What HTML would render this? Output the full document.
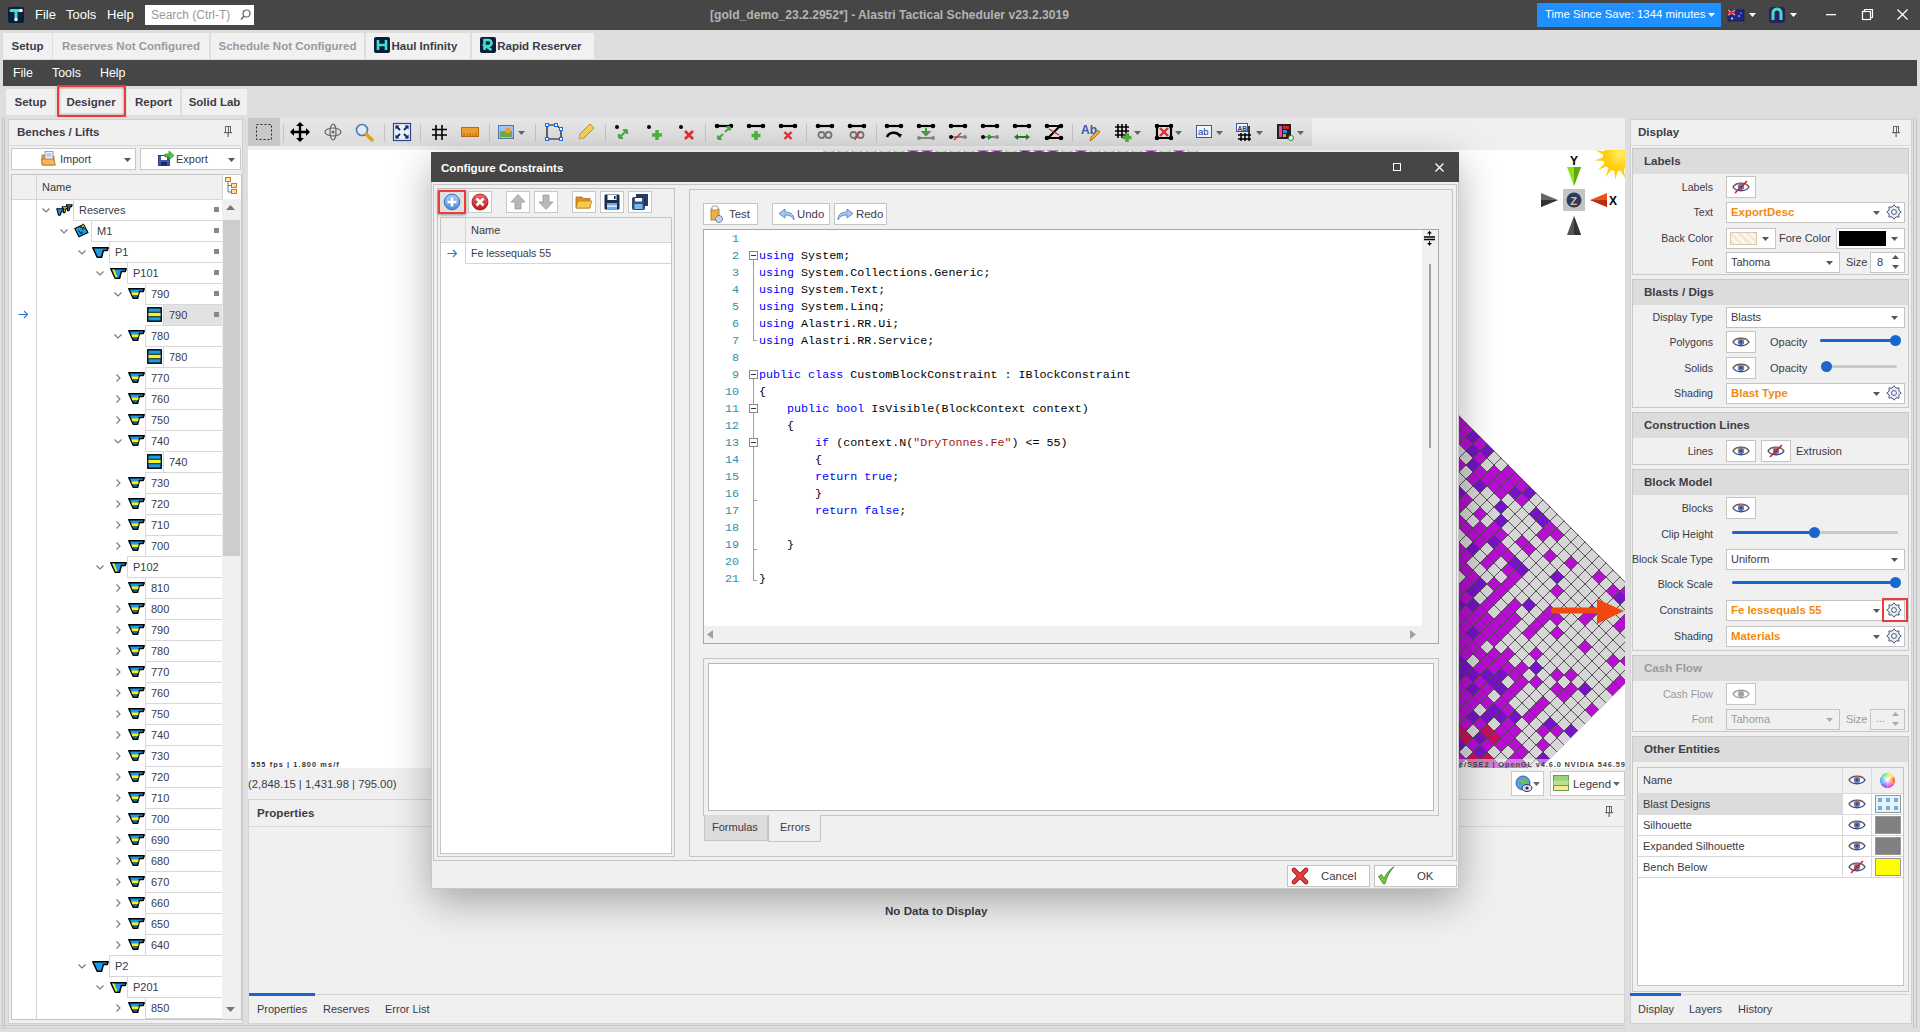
<!DOCTYPE html><html><head><meta charset="utf-8"><style>
*{box-sizing:border-box;margin:0;padding:0}
html,body{width:1920px;height:1032px;overflow:hidden;background:#dedede;font-family:"Liberation Sans",sans-serif;font-size:11px;color:#3a3a48}
.ab{position:absolute}
.t{position:absolute;white-space:pre;line-height:13px}
.b{font-weight:bold}
.dark{background:#464646}
.tab{position:absolute;background:#f1f1f1;font-weight:bold;font-size:11.5px;color:#3c3c48;text-align:center;white-space:pre;line-height:26px}
.mono{font-family:"Liberation Mono",monospace}
svg{position:absolute;overflow:visible}
</style></head><body><div class="ab" style="left:0px;top:0px;width:1920px;height:30px;background:#464646"></div><svg style="left:8px;top:7px;" width="16" height="16" viewBox="0 0 16 16"><rect x="0" y="0" width="16" height="16" rx="2" fill="#0b1d3a"/><path d="M3 3.5h10M8 3.5v9" stroke="#3fe0d0" stroke-width="3" stroke-linecap="round"/><circle cx="13" cy="3.5" r="1.7" fill="#fff"/><circle cx="8" cy="12.5" r="1.7" fill="#fff"/></svg><div class="t" style="left:35px;top:8px;font-size:13px;color:#fff;">File</div><div class="t" style="left:66px;top:8px;font-size:13px;color:#fff;">Tools</div><div class="t" style="left:107px;top:8px;font-size:13px;color:#fff;">Help</div><div class="ab" style="left:145px;top:5px;width:109px;height:20px;background:#fff"></div><div class="t" style="left:151px;top:9px;font-size:12px;color:#9a9a9a;">Search (Ctrl-T)</div><svg style="left:240px;top:9px;" width="11" height="12" viewBox="0 0 11 12"><circle cx="6.5" cy="4.5" r="3.5" fill="none" stroke="#666" stroke-width="1.2"/><path d="M4 7L1 10.5" stroke="#666" stroke-width="1.4"/></svg><div class="t" style="left:710px;top:9px;font-size:12.1px;color:#b4b4b4;font-weight:bold;">[gold_demo_23.2.2952*] - Alastri Tactical Scheduler v23.2.3019</div><div class="ab" style="left:1537px;top:3px;width:184px;height:24px;background:#1e90ff"></div><div class="t" style="left:1545px;top:8px;font-size:11.4px;color:#fff;">Time Since Save: 1344 minutes</div><svg style="left:1708px;top:13px;" width="8" height="5" viewBox="0 0 8 5"><path d="M0 0h7L3.5 4z" fill="#fff"/></svg><svg style="left:1728px;top:10px;" width="16" height="11" viewBox="0 0 16 11"><rect width="16" height="11" fill="#1a2a8a" stroke="#111" stroke-width="0.6"/><path d="M0 0L7 5M7 0L0 5" stroke="#fff" stroke-width="1.2"/><path d="M0 0L7 5M7 0L0 5" stroke="#d22" stroke-width="0.6"/><rect x="3" y="0" width="1.2" height="5" fill="#d22"/><rect x="0" y="2" width="7" height="1.2" fill="#d22"/><circle cx="11" cy="6" r="0.8" fill="#fff"/><circle cx="13" cy="3" r="0.6" fill="#fff"/><circle cx="4" cy="8.5" r="0.9" fill="#fff"/></svg><svg style="left:1749px;top:13px;" width="8" height="5" viewBox="0 0 8 5"><path d="M0 0h7L3.5 4z" fill="#fff"/></svg><svg style="left:1769px;top:7px;" width="16" height="16" viewBox="0 0 16 16"><rect width="16" height="16" rx="3" fill="#2a2060"/><path d="M4 13V6a4 4 0 0 1 8 0v7" stroke="#40e0c0" stroke-width="3" fill="none"/></svg><svg style="left:1790px;top:13px;" width="8" height="5" viewBox="0 0 8 5"><path d="M0 0h7L3.5 4z" fill="#fff"/></svg><svg style="left:1826px;top:14px;" width="11" height="2" viewBox="0 0 11 2"><rect width="10" height="1.3" fill="#fff"/></svg><svg style="left:1862px;top:9px;" width="11" height="11" viewBox="0 0 11 11"><path d="M2.5 2.5V0.5h8v8h-2" fill="none" stroke="#fff" stroke-width="1.2"/><rect x="0.5" y="2.5" width="8" height="8" fill="none" stroke="#fff" stroke-width="1.2"/></svg><svg style="left:1897px;top:9px;" width="11" height="11" viewBox="0 0 11 11"><path d="M0.5 0.5l10 10M10.5 0.5l-10 10" stroke="#fff" stroke-width="1.3"/></svg><div class="ab" style="left:0px;top:30px;width:1920px;height:30px;background:#dedede"></div><div class="tab" style="left:3px;top:33px;width:49px;height:26px;line-height:26px;color:#3c3c48">Setup</div><div class="tab" style="left:53px;top:33px;width:156px;height:26px;line-height:26px;color:#9a9a9e">Reserves Not Configured</div><div class="tab" style="left:211px;top:33px;width:153px;height:26px;line-height:26px;color:#9a9a9e">Schedule Not Configured</div><div class="tab" style="left:366px;top:33px;width:104px;height:26px;line-height:26px;color:#3c3c48">    Haul Infinity</div><div class="tab" style="left:472px;top:33px;width:122px;height:26px;line-height:26px;color:#3c3c48">    Rapid Reserver</div><svg style="left:374px;top:37px;" width="16" height="16" viewBox="0 0 16 16"><rect width="16" height="16" rx="2" fill="#0b1d3a"/><path d="M4 3v10M12 3v10M4 8h8" stroke="#3fe0d0" stroke-width="2.6"/></svg><svg style="left:480px;top:37px;" width="16" height="16" viewBox="0 0 16 16"><rect width="16" height="16" rx="2" fill="#0b1d3a"/><path d="M4.5 13V3h4a3 3 0 0 1 0 6h-3l6 4" stroke="#3fe0d0" stroke-width="2.6" fill="none"/></svg><div class="ab" style="left:3px;top:60px;width:1914px;height:26px;background:#464646"></div><div class="t" style="left:13px;top:67px;font-size:12.4px;color:#fff;">File</div><div class="t" style="left:52px;top:67px;font-size:12.4px;color:#fff;">Tools</div><div class="t" style="left:100px;top:67px;font-size:12.4px;color:#fff;">Help</div><div class="ab" style="left:0px;top:86px;width:1920px;height:32px;background:#dedede"></div><div class="tab" style="left:6px;top:89px;width:49px;height:26px;line-height:26px;color:#3c3c48">Setup</div><div class="tab" style="left:57px;top:89px;width:68px;height:26px;line-height:26px;color:#3c3c48">Designer</div><div class="tab" style="left:127px;top:89px;width:53px;height:26px;line-height:26px;color:#3c3c48">Report</div><div class="tab" style="left:182px;top:89px;width:65px;height:26px;line-height:26px;color:#3c3c48">Solid Lab</div><div class="ab" style="left:57px;top:85px;width:69px;height:32px;border:2.5px solid #ee3a3a;box-shadow:inset 0 0 3px rgba(0,0,0,0.45)"></div><div class="ab" style="left:2px;top:118px;width:1px;height:910px;background:#c4c4c4"></div><div class="ab" style="left:4px;top:118px;width:1px;height:910px;background:#c4c4c4"></div><div class="ab" style="left:8px;top:119px;width:235px;height:905px;background:#f0f0f0;border:1px solid #d0d0d0"></div><div class="t" style="left:17px;top:125px;font-size:11.6px;color:#3c3c48;font-weight:bold;">Benches / Lifts</div><svg style="left:224px;top:126px;" width="8" height="11" viewBox="0 0 8 11"><rect x="1.5" y="0.5" width="5" height="6" fill="none" stroke="#666"/><rect x="0" y="6" width="8" height="1.2" fill="#666"/><rect x="3.5" y="7" width="1.2" height="4" fill="#666"/><rect x="4" y="1" width="1" height="5" fill="#666"/></svg><div class="ab" style="left:9px;top:145px;width:232px;height:1px;background:#d8d8d8"></div><div class="ab" style="left:11px;top:148px;width:125px;height:22px;background:#fff;border:1px solid #c8c8c8"></div><div class="ab" style="left:140px;top:148px;width:101px;height:22px;background:#fff;border:1px solid #c8c8c8"></div><svg style="left:41px;top:151px;" width="16" height="15" viewBox="0 0 16 15"><path d="M1 4h5l1 1h6v9H1z" fill="#e8a040" stroke="#b86a18" stroke-width="0.8"/><rect x="4" y="0.5" width="8" height="9" fill="#eef2ff" stroke="#7a8ac0" stroke-width="0.8"/><path d="M5.5 3h5M5.5 5h5" stroke="#7a8ac0" stroke-width="0.8"/><path d="M0.5 8h12l2 6H1.5z" fill="#f4b860" stroke="#b86a18" stroke-width="0.8"/></svg><div class="t" style="left:60px;top:153px;font-size:11px;color:#3a3a48;">Import</div><svg style="left:124px;top:158px;" width="8" height="4" viewBox="0 0 8 4"><path d="M0 0h7L3.5 4z" fill="#555"/></svg><svg style="left:158px;top:151px;" width="16" height="15" viewBox="0 0 16 15"><rect x="0.5" y="4.5" width="11" height="10" fill="#3a5ca8" stroke="#1a2a60" stroke-width="0.8"/><rect x="3" y="5" width="6" height="4" fill="#fff"/><rect x="3" y="11" width="6" height="3.5" fill="#1a2a60"/><path d="M7 6V3h4V0l5 4.5-5 4.5V6z" fill="#5ac040" stroke="#2a8020" stroke-width="0.7"/></svg><div class="t" style="left:176px;top:153px;font-size:11px;color:#3a3a48;">Export</div><svg style="left:228px;top:158px;" width="8" height="4" viewBox="0 0 8 4"><path d="M0 0h7L3.5 4z" fill="#555"/></svg><div class="ab" style="left:11px;top:174px;width:231px;height:846px;background:#fff;border:1px solid #c4c4c4"></div><div class="ab" style="left:12px;top:175px;width:210px;height:24px;background:#f0f0f0"></div><div class="ab" style="left:36px;top:175px;width:1px;height:844px;background:#d4d4d4"></div><div class="ab" style="left:12px;top:199px;width:210px;height:1px;background:#d4d4d4"></div><div class="t" style="left:42px;top:181px;font-size:11px;color:#3a3a48;">Name</div><div class="ab" style="left:222px;top:175px;width:19px;height:24px;background:#fff;border-left:1px solid #d4d4d4"></div><svg style="left:225px;top:177px;" width="15" height="18" viewBox="0 0 15 18"><rect x="0.5" y="0.5" width="5" height="4" fill="#fde0b0" stroke="#d07a10"/><rect x="6.5" y="6.5" width="5" height="4" fill="#fde0b0" stroke="#d07a10"/><rect x="6.5" y="12.5" width="5" height="4" fill="#fde0b0" stroke="#d07a10"/><path d="M3 5v10h3.5M3 8.5h3.5" stroke="#555" fill="none" stroke-width="0.8"/></svg><div class="ab" style="left:222px;top:199px;width:19px;height:820px;background:#f0f0f0"></div><div class="ab" style="left:223px;top:220px;width:17px;height:336px;background:#cdcdcd"></div><svg style="left:226px;top:205px;" width="9" height="5" viewBox="0 0 9 5"><path d="M0 5L4.5 0L9 5z" fill="#777"/></svg><svg style="left:226px;top:1007px;" width="9" height="5" viewBox="0 0 9 5"><path d="M0 0h9L4.5 5z" fill="#777"/></svg><div class="ab" style="left:73px;top:199px;width:149px;height:22px;background:#fff;border:1px solid #d8d8d8;border-right:none"></div><div class="t" style="left:79px;top:204px;font-size:11px;color:#3a3a48;">Reserves</div><div class="ab" style="left:214px;top:207px;width:5px;height:5px;background:#888"></div><svg style="left:42px;top:208px;" width="8" height="5" viewBox="0 0 8 5"><path d="M0.5 0.5L4 4L7.5 0.5" fill="none" stroke="#777" stroke-width="1.1"/></svg><svg style="left:56px;top:204px;" width="17" height="12" viewBox="0 0 17 12"><path d="M10.5 0.8H16.2L15.6 2.6H14.2L13 6.6H11.6Z" fill="#1a9ae8" stroke="#000" stroke-width="1.1" stroke-linejoin="round"/><path d="M6.2 2.8H12L11.4 4.6H10L8.8 8.6H7.4Z" fill="#f8e820" stroke="#000" stroke-width="1.1" stroke-linejoin="round"/><path d="M0.8 4.8H8L7.3 7H5.6L4.2 11.2H2.6Z" fill="#1a9ae8" stroke="#000" stroke-width="1.1" stroke-linejoin="round"/></svg><div class="ab" style="left:91px;top:220px;width:131px;height:22px;background:#fff;border:1px solid #d8d8d8;border-right:none"></div><div class="t" style="left:97px;top:225px;font-size:11px;color:#3a3a48;">M1</div><div class="ab" style="left:214px;top:228px;width:5px;height:5px;background:#888"></div><svg style="left:60px;top:229px;" width="8" height="5" viewBox="0 0 8 5"><path d="M0.5 0.5L4 4L7.5 0.5" fill="none" stroke="#777" stroke-width="1.1"/></svg><svg style="left:74px;top:223px;" width="15" height="15" viewBox="0 0 15 15"><path d="M0.8 5.5L9.5 1.5L14 9.5L5 13.8Z" fill="#1a9ae8" stroke="#000" stroke-width="1.1" stroke-linejoin="round"/><path d="M9 0.8L11.5 4.5L8.5 6.5L10 3.8L6.5 4.8Z" fill="#f8e820" stroke="#000" stroke-width="0.7"/><path d="M4.5 7.5L7.5 11L8 8.5" fill="none" stroke="#000" stroke-width="0.9"/></svg><div class="ab" style="left:109px;top:241px;width:113px;height:22px;background:#fff;border:1px solid #d8d8d8;border-right:none"></div><div class="t" style="left:115px;top:246px;font-size:11px;color:#3a3a48;">P1</div><div class="ab" style="left:214px;top:249px;width:5px;height:5px;background:#888"></div><svg style="left:78px;top:250px;" width="8" height="5" viewBox="0 0 8 5"><path d="M0.5 0.5L4 4L7.5 0.5" fill="none" stroke="#777" stroke-width="1.1"/></svg><svg style="left:92px;top:247px;" width="17" height="11" viewBox="0 0 17 11"><path d="M0.8 0.8H16.2L15.2 3.4H11.4L9.6 10.2H5.2Z" fill="#1a9ae8" stroke="#000" stroke-width="1.5" stroke-linejoin="round"/></svg><div class="ab" style="left:127px;top:262px;width:95px;height:22px;background:#fff;border:1px solid #d8d8d8;border-right:none"></div><div class="t" style="left:133px;top:267px;font-size:11px;color:#3a3a48;">P101</div><div class="ab" style="left:214px;top:270px;width:5px;height:5px;background:#888"></div><svg style="left:96px;top:271px;" width="8" height="5" viewBox="0 0 8 5"><path d="M0.5 0.5L4 4L7.5 0.5" fill="none" stroke="#777" stroke-width="1.1"/></svg><svg style="left:110px;top:268px;" width="17" height="11" viewBox="0 0 17 11"><path d="M0.8 0.8H16.2L15.2 3.4H11.4L9.6 10.2H5.2Z" fill="#1a9ae8" stroke="#000" stroke-width="1.5" stroke-linejoin="round"/><path d="M2.2 1.5H4.4L7.4 9.5H5.6Z" fill="#f8e820"/></svg><div class="ab" style="left:145px;top:283px;width:77px;height:22px;background:#fff;border:1px solid #d8d8d8;border-right:none"></div><div class="t" style="left:151px;top:288px;font-size:11px;color:#3a3a48;">790</div><div class="ab" style="left:214px;top:291px;width:5px;height:5px;background:#888"></div><svg style="left:114px;top:292px;" width="8" height="5" viewBox="0 0 8 5"><path d="M0.5 0.5L4 4L7.5 0.5" fill="none" stroke="#777" stroke-width="1.1"/></svg><svg style="left:128px;top:288px;" width="17" height="11" viewBox="0 0 17 11"><path d="M0.8 0.8H16.2L15.2 3.4H11.4L9.6 10.2H5.2Z" fill="#1a9ae8" stroke="#000" stroke-width="1.5" stroke-linejoin="round"/><path d="M3.3 4.6H10.8L10.1 7.6H4.4Z" fill="#f8f020"/><path d="M4.4 7.9H10" stroke="#000" stroke-width="0.7"/></svg><div class="ab" style="left:163px;top:304px;width:59px;height:22px;background:#e2e2e2;border:1px solid #d8d8d8;border-right:none"></div><div class="t" style="left:169px;top:309px;font-size:11px;color:#3a3a48;">790</div><div class="ab" style="left:214px;top:312px;width:5px;height:5px;background:#888"></div><svg style="left:147px;top:307px;" width="15" height="15" viewBox="0 0 15 15"><rect x="0.8" y="0.8" width="13.4" height="13.4" fill="#1a9ae8" stroke="#000" stroke-width="1.4"/><path d="M1.5 5.3h12M1.5 9.7h12" stroke="#000" stroke-width="1"/><rect x="1.5" y="5.8" width="12" height="3.4" fill="#f8f020"/></svg><div class="ab" style="left:145px;top:325px;width:77px;height:22px;background:#fff;border:1px solid #d8d8d8;border-right:none"></div><div class="t" style="left:151px;top:330px;font-size:11px;color:#3a3a48;">780</div><svg style="left:114px;top:334px;" width="8" height="5" viewBox="0 0 8 5"><path d="M0.5 0.5L4 4L7.5 0.5" fill="none" stroke="#777" stroke-width="1.1"/></svg><svg style="left:128px;top:330px;" width="17" height="11" viewBox="0 0 17 11"><path d="M0.8 0.8H16.2L15.2 3.4H11.4L9.6 10.2H5.2Z" fill="#1a9ae8" stroke="#000" stroke-width="1.5" stroke-linejoin="round"/><path d="M3.3 4.6H10.8L10.1 7.6H4.4Z" fill="#f8f020"/><path d="M4.4 7.9H10" stroke="#000" stroke-width="0.7"/></svg><div class="ab" style="left:163px;top:346px;width:59px;height:22px;background:#fff;border:1px solid #d8d8d8;border-right:none"></div><div class="t" style="left:169px;top:351px;font-size:11px;color:#3a3a48;">780</div><svg style="left:147px;top:349px;" width="15" height="15" viewBox="0 0 15 15"><rect x="0.8" y="0.8" width="13.4" height="13.4" fill="#1a9ae8" stroke="#000" stroke-width="1.4"/><path d="M1.5 5.3h12M1.5 9.7h12" stroke="#000" stroke-width="1"/><rect x="1.5" y="5.8" width="12" height="3.4" fill="#f8f020"/></svg><div class="ab" style="left:145px;top:367px;width:77px;height:22px;background:#fff;border:1px solid #d8d8d8;border-right:none"></div><div class="t" style="left:151px;top:372px;font-size:11px;color:#3a3a48;">770</div><svg style="left:116px;top:374px;" width="5" height="8" viewBox="0 0 5 8"><path d="M0.5 0.5L4 4L0.5 7.5" fill="none" stroke="#777" stroke-width="1.1"/></svg><svg style="left:128px;top:372px;" width="17" height="11" viewBox="0 0 17 11"><path d="M0.8 0.8H16.2L15.2 3.4H11.4L9.6 10.2H5.2Z" fill="#1a9ae8" stroke="#000" stroke-width="1.5" stroke-linejoin="round"/><path d="M3.3 4.6H10.8L10.1 7.6H4.4Z" fill="#f8f020"/><path d="M4.4 7.9H10" stroke="#000" stroke-width="0.7"/></svg><div class="ab" style="left:145px;top:388px;width:77px;height:22px;background:#fff;border:1px solid #d8d8d8;border-right:none"></div><div class="t" style="left:151px;top:393px;font-size:11px;color:#3a3a48;">760</div><svg style="left:116px;top:395px;" width="5" height="8" viewBox="0 0 5 8"><path d="M0.5 0.5L4 4L0.5 7.5" fill="none" stroke="#777" stroke-width="1.1"/></svg><svg style="left:128px;top:393px;" width="17" height="11" viewBox="0 0 17 11"><path d="M0.8 0.8H16.2L15.2 3.4H11.4L9.6 10.2H5.2Z" fill="#1a9ae8" stroke="#000" stroke-width="1.5" stroke-linejoin="round"/><path d="M3.3 4.6H10.8L10.1 7.6H4.4Z" fill="#f8f020"/><path d="M4.4 7.9H10" stroke="#000" stroke-width="0.7"/></svg><div class="ab" style="left:145px;top:409px;width:77px;height:22px;background:#fff;border:1px solid #d8d8d8;border-right:none"></div><div class="t" style="left:151px;top:414px;font-size:11px;color:#3a3a48;">750</div><svg style="left:116px;top:416px;" width="5" height="8" viewBox="0 0 5 8"><path d="M0.5 0.5L4 4L0.5 7.5" fill="none" stroke="#777" stroke-width="1.1"/></svg><svg style="left:128px;top:414px;" width="17" height="11" viewBox="0 0 17 11"><path d="M0.8 0.8H16.2L15.2 3.4H11.4L9.6 10.2H5.2Z" fill="#1a9ae8" stroke="#000" stroke-width="1.5" stroke-linejoin="round"/><path d="M3.3 4.6H10.8L10.1 7.6H4.4Z" fill="#f8f020"/><path d="M4.4 7.9H10" stroke="#000" stroke-width="0.7"/></svg><div class="ab" style="left:145px;top:430px;width:77px;height:22px;background:#fff;border:1px solid #d8d8d8;border-right:none"></div><div class="t" style="left:151px;top:435px;font-size:11px;color:#3a3a48;">740</div><svg style="left:114px;top:439px;" width="8" height="5" viewBox="0 0 8 5"><path d="M0.5 0.5L4 4L7.5 0.5" fill="none" stroke="#777" stroke-width="1.1"/></svg><svg style="left:128px;top:435px;" width="17" height="11" viewBox="0 0 17 11"><path d="M0.8 0.8H16.2L15.2 3.4H11.4L9.6 10.2H5.2Z" fill="#1a9ae8" stroke="#000" stroke-width="1.5" stroke-linejoin="round"/><path d="M3.3 4.6H10.8L10.1 7.6H4.4Z" fill="#f8f020"/><path d="M4.4 7.9H10" stroke="#000" stroke-width="0.7"/></svg><div class="ab" style="left:163px;top:451px;width:59px;height:22px;background:#fff;border:1px solid #d8d8d8;border-right:none"></div><div class="t" style="left:169px;top:456px;font-size:11px;color:#3a3a48;">740</div><svg style="left:147px;top:454px;" width="15" height="15" viewBox="0 0 15 15"><rect x="0.8" y="0.8" width="13.4" height="13.4" fill="#1a9ae8" stroke="#000" stroke-width="1.4"/><path d="M1.5 5.3h12M1.5 9.7h12" stroke="#000" stroke-width="1"/><rect x="1.5" y="5.8" width="12" height="3.4" fill="#f8f020"/></svg><div class="ab" style="left:145px;top:472px;width:77px;height:22px;background:#fff;border:1px solid #d8d8d8;border-right:none"></div><div class="t" style="left:151px;top:477px;font-size:11px;color:#3a3a48;">730</div><svg style="left:116px;top:479px;" width="5" height="8" viewBox="0 0 5 8"><path d="M0.5 0.5L4 4L0.5 7.5" fill="none" stroke="#777" stroke-width="1.1"/></svg><svg style="left:128px;top:477px;" width="17" height="11" viewBox="0 0 17 11"><path d="M0.8 0.8H16.2L15.2 3.4H11.4L9.6 10.2H5.2Z" fill="#1a9ae8" stroke="#000" stroke-width="1.5" stroke-linejoin="round"/><path d="M3.3 4.6H10.8L10.1 7.6H4.4Z" fill="#f8f020"/><path d="M4.4 7.9H10" stroke="#000" stroke-width="0.7"/></svg><div class="ab" style="left:145px;top:493px;width:77px;height:22px;background:#fff;border:1px solid #d8d8d8;border-right:none"></div><div class="t" style="left:151px;top:498px;font-size:11px;color:#3a3a48;">720</div><svg style="left:116px;top:500px;" width="5" height="8" viewBox="0 0 5 8"><path d="M0.5 0.5L4 4L0.5 7.5" fill="none" stroke="#777" stroke-width="1.1"/></svg><svg style="left:128px;top:498px;" width="17" height="11" viewBox="0 0 17 11"><path d="M0.8 0.8H16.2L15.2 3.4H11.4L9.6 10.2H5.2Z" fill="#1a9ae8" stroke="#000" stroke-width="1.5" stroke-linejoin="round"/><path d="M3.3 4.6H10.8L10.1 7.6H4.4Z" fill="#f8f020"/><path d="M4.4 7.9H10" stroke="#000" stroke-width="0.7"/></svg><div class="ab" style="left:145px;top:514px;width:77px;height:22px;background:#fff;border:1px solid #d8d8d8;border-right:none"></div><div class="t" style="left:151px;top:519px;font-size:11px;color:#3a3a48;">710</div><svg style="left:116px;top:521px;" width="5" height="8" viewBox="0 0 5 8"><path d="M0.5 0.5L4 4L0.5 7.5" fill="none" stroke="#777" stroke-width="1.1"/></svg><svg style="left:128px;top:519px;" width="17" height="11" viewBox="0 0 17 11"><path d="M0.8 0.8H16.2L15.2 3.4H11.4L9.6 10.2H5.2Z" fill="#1a9ae8" stroke="#000" stroke-width="1.5" stroke-linejoin="round"/><path d="M3.3 4.6H10.8L10.1 7.6H4.4Z" fill="#f8f020"/><path d="M4.4 7.9H10" stroke="#000" stroke-width="0.7"/></svg><div class="ab" style="left:145px;top:535px;width:77px;height:22px;background:#fff;border:1px solid #d8d8d8;border-right:none"></div><div class="t" style="left:151px;top:540px;font-size:11px;color:#3a3a48;">700</div><svg style="left:116px;top:542px;" width="5" height="8" viewBox="0 0 5 8"><path d="M0.5 0.5L4 4L0.5 7.5" fill="none" stroke="#777" stroke-width="1.1"/></svg><svg style="left:128px;top:540px;" width="17" height="11" viewBox="0 0 17 11"><path d="M0.8 0.8H16.2L15.2 3.4H11.4L9.6 10.2H5.2Z" fill="#1a9ae8" stroke="#000" stroke-width="1.5" stroke-linejoin="round"/><path d="M3.3 4.6H10.8L10.1 7.6H4.4Z" fill="#f8f020"/><path d="M4.4 7.9H10" stroke="#000" stroke-width="0.7"/></svg><div class="ab" style="left:127px;top:556px;width:95px;height:22px;background:#fff;border:1px solid #d8d8d8;border-right:none"></div><div class="t" style="left:133px;top:561px;font-size:11px;color:#3a3a48;">P102</div><svg style="left:96px;top:565px;" width="8" height="5" viewBox="0 0 8 5"><path d="M0.5 0.5L4 4L7.5 0.5" fill="none" stroke="#777" stroke-width="1.1"/></svg><svg style="left:110px;top:562px;" width="17" height="11" viewBox="0 0 17 11"><path d="M0.8 0.8H16.2L15.2 3.4H11.4L9.6 10.2H5.2Z" fill="#1a9ae8" stroke="#000" stroke-width="1.5" stroke-linejoin="round"/><path d="M2.2 1.5H4.4L7.4 9.5H5.6Z" fill="#f8e820"/></svg><div class="ab" style="left:145px;top:577px;width:77px;height:22px;background:#fff;border:1px solid #d8d8d8;border-right:none"></div><div class="t" style="left:151px;top:582px;font-size:11px;color:#3a3a48;">810</div><svg style="left:116px;top:584px;" width="5" height="8" viewBox="0 0 5 8"><path d="M0.5 0.5L4 4L0.5 7.5" fill="none" stroke="#777" stroke-width="1.1"/></svg><svg style="left:128px;top:582px;" width="17" height="11" viewBox="0 0 17 11"><path d="M0.8 0.8H16.2L15.2 3.4H11.4L9.6 10.2H5.2Z" fill="#1a9ae8" stroke="#000" stroke-width="1.5" stroke-linejoin="round"/><path d="M3.3 4.6H10.8L10.1 7.6H4.4Z" fill="#f8f020"/><path d="M4.4 7.9H10" stroke="#000" stroke-width="0.7"/></svg><div class="ab" style="left:145px;top:598px;width:77px;height:22px;background:#fff;border:1px solid #d8d8d8;border-right:none"></div><div class="t" style="left:151px;top:603px;font-size:11px;color:#3a3a48;">800</div><svg style="left:116px;top:605px;" width="5" height="8" viewBox="0 0 5 8"><path d="M0.5 0.5L4 4L0.5 7.5" fill="none" stroke="#777" stroke-width="1.1"/></svg><svg style="left:128px;top:603px;" width="17" height="11" viewBox="0 0 17 11"><path d="M0.8 0.8H16.2L15.2 3.4H11.4L9.6 10.2H5.2Z" fill="#1a9ae8" stroke="#000" stroke-width="1.5" stroke-linejoin="round"/><path d="M3.3 4.6H10.8L10.1 7.6H4.4Z" fill="#f8f020"/><path d="M4.4 7.9H10" stroke="#000" stroke-width="0.7"/></svg><div class="ab" style="left:145px;top:619px;width:77px;height:22px;background:#fff;border:1px solid #d8d8d8;border-right:none"></div><div class="t" style="left:151px;top:624px;font-size:11px;color:#3a3a48;">790</div><svg style="left:116px;top:626px;" width="5" height="8" viewBox="0 0 5 8"><path d="M0.5 0.5L4 4L0.5 7.5" fill="none" stroke="#777" stroke-width="1.1"/></svg><svg style="left:128px;top:624px;" width="17" height="11" viewBox="0 0 17 11"><path d="M0.8 0.8H16.2L15.2 3.4H11.4L9.6 10.2H5.2Z" fill="#1a9ae8" stroke="#000" stroke-width="1.5" stroke-linejoin="round"/><path d="M3.3 4.6H10.8L10.1 7.6H4.4Z" fill="#f8f020"/><path d="M4.4 7.9H10" stroke="#000" stroke-width="0.7"/></svg><div class="ab" style="left:145px;top:640px;width:77px;height:22px;background:#fff;border:1px solid #d8d8d8;border-right:none"></div><div class="t" style="left:151px;top:645px;font-size:11px;color:#3a3a48;">780</div><svg style="left:116px;top:647px;" width="5" height="8" viewBox="0 0 5 8"><path d="M0.5 0.5L4 4L0.5 7.5" fill="none" stroke="#777" stroke-width="1.1"/></svg><svg style="left:128px;top:645px;" width="17" height="11" viewBox="0 0 17 11"><path d="M0.8 0.8H16.2L15.2 3.4H11.4L9.6 10.2H5.2Z" fill="#1a9ae8" stroke="#000" stroke-width="1.5" stroke-linejoin="round"/><path d="M3.3 4.6H10.8L10.1 7.6H4.4Z" fill="#f8f020"/><path d="M4.4 7.9H10" stroke="#000" stroke-width="0.7"/></svg><div class="ab" style="left:145px;top:661px;width:77px;height:22px;background:#fff;border:1px solid #d8d8d8;border-right:none"></div><div class="t" style="left:151px;top:666px;font-size:11px;color:#3a3a48;">770</div><svg style="left:116px;top:668px;" width="5" height="8" viewBox="0 0 5 8"><path d="M0.5 0.5L4 4L0.5 7.5" fill="none" stroke="#777" stroke-width="1.1"/></svg><svg style="left:128px;top:666px;" width="17" height="11" viewBox="0 0 17 11"><path d="M0.8 0.8H16.2L15.2 3.4H11.4L9.6 10.2H5.2Z" fill="#1a9ae8" stroke="#000" stroke-width="1.5" stroke-linejoin="round"/><path d="M3.3 4.6H10.8L10.1 7.6H4.4Z" fill="#f8f020"/><path d="M4.4 7.9H10" stroke="#000" stroke-width="0.7"/></svg><div class="ab" style="left:145px;top:682px;width:77px;height:22px;background:#fff;border:1px solid #d8d8d8;border-right:none"></div><div class="t" style="left:151px;top:687px;font-size:11px;color:#3a3a48;">760</div><svg style="left:116px;top:689px;" width="5" height="8" viewBox="0 0 5 8"><path d="M0.5 0.5L4 4L0.5 7.5" fill="none" stroke="#777" stroke-width="1.1"/></svg><svg style="left:128px;top:687px;" width="17" height="11" viewBox="0 0 17 11"><path d="M0.8 0.8H16.2L15.2 3.4H11.4L9.6 10.2H5.2Z" fill="#1a9ae8" stroke="#000" stroke-width="1.5" stroke-linejoin="round"/><path d="M3.3 4.6H10.8L10.1 7.6H4.4Z" fill="#f8f020"/><path d="M4.4 7.9H10" stroke="#000" stroke-width="0.7"/></svg><div class="ab" style="left:145px;top:703px;width:77px;height:22px;background:#fff;border:1px solid #d8d8d8;border-right:none"></div><div class="t" style="left:151px;top:708px;font-size:11px;color:#3a3a48;">750</div><svg style="left:116px;top:710px;" width="5" height="8" viewBox="0 0 5 8"><path d="M0.5 0.5L4 4L0.5 7.5" fill="none" stroke="#777" stroke-width="1.1"/></svg><svg style="left:128px;top:708px;" width="17" height="11" viewBox="0 0 17 11"><path d="M0.8 0.8H16.2L15.2 3.4H11.4L9.6 10.2H5.2Z" fill="#1a9ae8" stroke="#000" stroke-width="1.5" stroke-linejoin="round"/><path d="M3.3 4.6H10.8L10.1 7.6H4.4Z" fill="#f8f020"/><path d="M4.4 7.9H10" stroke="#000" stroke-width="0.7"/></svg><div class="ab" style="left:145px;top:724px;width:77px;height:22px;background:#fff;border:1px solid #d8d8d8;border-right:none"></div><div class="t" style="left:151px;top:729px;font-size:11px;color:#3a3a48;">740</div><svg style="left:116px;top:731px;" width="5" height="8" viewBox="0 0 5 8"><path d="M0.5 0.5L4 4L0.5 7.5" fill="none" stroke="#777" stroke-width="1.1"/></svg><svg style="left:128px;top:729px;" width="17" height="11" viewBox="0 0 17 11"><path d="M0.8 0.8H16.2L15.2 3.4H11.4L9.6 10.2H5.2Z" fill="#1a9ae8" stroke="#000" stroke-width="1.5" stroke-linejoin="round"/><path d="M3.3 4.6H10.8L10.1 7.6H4.4Z" fill="#f8f020"/><path d="M4.4 7.9H10" stroke="#000" stroke-width="0.7"/></svg><div class="ab" style="left:145px;top:745px;width:77px;height:22px;background:#fff;border:1px solid #d8d8d8;border-right:none"></div><div class="t" style="left:151px;top:750px;font-size:11px;color:#3a3a48;">730</div><svg style="left:116px;top:752px;" width="5" height="8" viewBox="0 0 5 8"><path d="M0.5 0.5L4 4L0.5 7.5" fill="none" stroke="#777" stroke-width="1.1"/></svg><svg style="left:128px;top:750px;" width="17" height="11" viewBox="0 0 17 11"><path d="M0.8 0.8H16.2L15.2 3.4H11.4L9.6 10.2H5.2Z" fill="#1a9ae8" stroke="#000" stroke-width="1.5" stroke-linejoin="round"/><path d="M3.3 4.6H10.8L10.1 7.6H4.4Z" fill="#f8f020"/><path d="M4.4 7.9H10" stroke="#000" stroke-width="0.7"/></svg><div class="ab" style="left:145px;top:766px;width:77px;height:22px;background:#fff;border:1px solid #d8d8d8;border-right:none"></div><div class="t" style="left:151px;top:771px;font-size:11px;color:#3a3a48;">720</div><svg style="left:116px;top:773px;" width="5" height="8" viewBox="0 0 5 8"><path d="M0.5 0.5L4 4L0.5 7.5" fill="none" stroke="#777" stroke-width="1.1"/></svg><svg style="left:128px;top:771px;" width="17" height="11" viewBox="0 0 17 11"><path d="M0.8 0.8H16.2L15.2 3.4H11.4L9.6 10.2H5.2Z" fill="#1a9ae8" stroke="#000" stroke-width="1.5" stroke-linejoin="round"/><path d="M3.3 4.6H10.8L10.1 7.6H4.4Z" fill="#f8f020"/><path d="M4.4 7.9H10" stroke="#000" stroke-width="0.7"/></svg><div class="ab" style="left:145px;top:787px;width:77px;height:22px;background:#fff;border:1px solid #d8d8d8;border-right:none"></div><div class="t" style="left:151px;top:792px;font-size:11px;color:#3a3a48;">710</div><svg style="left:116px;top:794px;" width="5" height="8" viewBox="0 0 5 8"><path d="M0.5 0.5L4 4L0.5 7.5" fill="none" stroke="#777" stroke-width="1.1"/></svg><svg style="left:128px;top:792px;" width="17" height="11" viewBox="0 0 17 11"><path d="M0.8 0.8H16.2L15.2 3.4H11.4L9.6 10.2H5.2Z" fill="#1a9ae8" stroke="#000" stroke-width="1.5" stroke-linejoin="round"/><path d="M3.3 4.6H10.8L10.1 7.6H4.4Z" fill="#f8f020"/><path d="M4.4 7.9H10" stroke="#000" stroke-width="0.7"/></svg><div class="ab" style="left:145px;top:808px;width:77px;height:22px;background:#fff;border:1px solid #d8d8d8;border-right:none"></div><div class="t" style="left:151px;top:813px;font-size:11px;color:#3a3a48;">700</div><svg style="left:116px;top:815px;" width="5" height="8" viewBox="0 0 5 8"><path d="M0.5 0.5L4 4L0.5 7.5" fill="none" stroke="#777" stroke-width="1.1"/></svg><svg style="left:128px;top:813px;" width="17" height="11" viewBox="0 0 17 11"><path d="M0.8 0.8H16.2L15.2 3.4H11.4L9.6 10.2H5.2Z" fill="#1a9ae8" stroke="#000" stroke-width="1.5" stroke-linejoin="round"/><path d="M3.3 4.6H10.8L10.1 7.6H4.4Z" fill="#f8f020"/><path d="M4.4 7.9H10" stroke="#000" stroke-width="0.7"/></svg><div class="ab" style="left:145px;top:829px;width:77px;height:22px;background:#fff;border:1px solid #d8d8d8;border-right:none"></div><div class="t" style="left:151px;top:834px;font-size:11px;color:#3a3a48;">690</div><svg style="left:116px;top:836px;" width="5" height="8" viewBox="0 0 5 8"><path d="M0.5 0.5L4 4L0.5 7.5" fill="none" stroke="#777" stroke-width="1.1"/></svg><svg style="left:128px;top:834px;" width="17" height="11" viewBox="0 0 17 11"><path d="M0.8 0.8H16.2L15.2 3.4H11.4L9.6 10.2H5.2Z" fill="#1a9ae8" stroke="#000" stroke-width="1.5" stroke-linejoin="round"/><path d="M3.3 4.6H10.8L10.1 7.6H4.4Z" fill="#f8f020"/><path d="M4.4 7.9H10" stroke="#000" stroke-width="0.7"/></svg><div class="ab" style="left:145px;top:850px;width:77px;height:22px;background:#fff;border:1px solid #d8d8d8;border-right:none"></div><div class="t" style="left:151px;top:855px;font-size:11px;color:#3a3a48;">680</div><svg style="left:116px;top:857px;" width="5" height="8" viewBox="0 0 5 8"><path d="M0.5 0.5L4 4L0.5 7.5" fill="none" stroke="#777" stroke-width="1.1"/></svg><svg style="left:128px;top:855px;" width="17" height="11" viewBox="0 0 17 11"><path d="M0.8 0.8H16.2L15.2 3.4H11.4L9.6 10.2H5.2Z" fill="#1a9ae8" stroke="#000" stroke-width="1.5" stroke-linejoin="round"/><path d="M3.3 4.6H10.8L10.1 7.6H4.4Z" fill="#f8f020"/><path d="M4.4 7.9H10" stroke="#000" stroke-width="0.7"/></svg><div class="ab" style="left:145px;top:871px;width:77px;height:22px;background:#fff;border:1px solid #d8d8d8;border-right:none"></div><div class="t" style="left:151px;top:876px;font-size:11px;color:#3a3a48;">670</div><svg style="left:116px;top:878px;" width="5" height="8" viewBox="0 0 5 8"><path d="M0.5 0.5L4 4L0.5 7.5" fill="none" stroke="#777" stroke-width="1.1"/></svg><svg style="left:128px;top:876px;" width="17" height="11" viewBox="0 0 17 11"><path d="M0.8 0.8H16.2L15.2 3.4H11.4L9.6 10.2H5.2Z" fill="#1a9ae8" stroke="#000" stroke-width="1.5" stroke-linejoin="round"/><path d="M3.3 4.6H10.8L10.1 7.6H4.4Z" fill="#f8f020"/><path d="M4.4 7.9H10" stroke="#000" stroke-width="0.7"/></svg><div class="ab" style="left:145px;top:892px;width:77px;height:22px;background:#fff;border:1px solid #d8d8d8;border-right:none"></div><div class="t" style="left:151px;top:897px;font-size:11px;color:#3a3a48;">660</div><svg style="left:116px;top:899px;" width="5" height="8" viewBox="0 0 5 8"><path d="M0.5 0.5L4 4L0.5 7.5" fill="none" stroke="#777" stroke-width="1.1"/></svg><svg style="left:128px;top:897px;" width="17" height="11" viewBox="0 0 17 11"><path d="M0.8 0.8H16.2L15.2 3.4H11.4L9.6 10.2H5.2Z" fill="#1a9ae8" stroke="#000" stroke-width="1.5" stroke-linejoin="round"/><path d="M3.3 4.6H10.8L10.1 7.6H4.4Z" fill="#f8f020"/><path d="M4.4 7.9H10" stroke="#000" stroke-width="0.7"/></svg><div class="ab" style="left:145px;top:913px;width:77px;height:22px;background:#fff;border:1px solid #d8d8d8;border-right:none"></div><div class="t" style="left:151px;top:918px;font-size:11px;color:#3a3a48;">650</div><svg style="left:116px;top:920px;" width="5" height="8" viewBox="0 0 5 8"><path d="M0.5 0.5L4 4L0.5 7.5" fill="none" stroke="#777" stroke-width="1.1"/></svg><svg style="left:128px;top:918px;" width="17" height="11" viewBox="0 0 17 11"><path d="M0.8 0.8H16.2L15.2 3.4H11.4L9.6 10.2H5.2Z" fill="#1a9ae8" stroke="#000" stroke-width="1.5" stroke-linejoin="round"/><path d="M3.3 4.6H10.8L10.1 7.6H4.4Z" fill="#f8f020"/><path d="M4.4 7.9H10" stroke="#000" stroke-width="0.7"/></svg><div class="ab" style="left:145px;top:934px;width:77px;height:22px;background:#fff;border:1px solid #d8d8d8;border-right:none"></div><div class="t" style="left:151px;top:939px;font-size:11px;color:#3a3a48;">640</div><svg style="left:116px;top:941px;" width="5" height="8" viewBox="0 0 5 8"><path d="M0.5 0.5L4 4L0.5 7.5" fill="none" stroke="#777" stroke-width="1.1"/></svg><svg style="left:128px;top:939px;" width="17" height="11" viewBox="0 0 17 11"><path d="M0.8 0.8H16.2L15.2 3.4H11.4L9.6 10.2H5.2Z" fill="#1a9ae8" stroke="#000" stroke-width="1.5" stroke-linejoin="round"/><path d="M3.3 4.6H10.8L10.1 7.6H4.4Z" fill="#f8f020"/><path d="M4.4 7.9H10" stroke="#000" stroke-width="0.7"/></svg><div class="ab" style="left:109px;top:955px;width:113px;height:22px;background:#fff;border:1px solid #d8d8d8;border-right:none"></div><div class="t" style="left:115px;top:960px;font-size:11px;color:#3a3a48;">P2</div><svg style="left:78px;top:964px;" width="8" height="5" viewBox="0 0 8 5"><path d="M0.5 0.5L4 4L7.5 0.5" fill="none" stroke="#777" stroke-width="1.1"/></svg><svg style="left:92px;top:961px;" width="17" height="11" viewBox="0 0 17 11"><path d="M0.8 0.8H16.2L15.2 3.4H11.4L9.6 10.2H5.2Z" fill="#1a9ae8" stroke="#000" stroke-width="1.5" stroke-linejoin="round"/></svg><div class="ab" style="left:127px;top:976px;width:95px;height:22px;background:#fff;border:1px solid #d8d8d8;border-right:none"></div><div class="t" style="left:133px;top:981px;font-size:11px;color:#3a3a48;">P201</div><svg style="left:96px;top:985px;" width="8" height="5" viewBox="0 0 8 5"><path d="M0.5 0.5L4 4L7.5 0.5" fill="none" stroke="#777" stroke-width="1.1"/></svg><svg style="left:110px;top:982px;" width="17" height="11" viewBox="0 0 17 11"><path d="M0.8 0.8H16.2L15.2 3.4H11.4L9.6 10.2H5.2Z" fill="#1a9ae8" stroke="#000" stroke-width="1.5" stroke-linejoin="round"/><path d="M2.2 1.5H4.4L7.4 9.5H5.6Z" fill="#f8e820"/></svg><div class="ab" style="left:145px;top:997px;width:77px;height:22px;background:#fff;border:1px solid #d8d8d8;border-right:none"></div><div class="t" style="left:151px;top:1002px;font-size:11px;color:#3a3a48;">850</div><svg style="left:116px;top:1004px;" width="5" height="8" viewBox="0 0 5 8"><path d="M0.5 0.5L4 4L0.5 7.5" fill="none" stroke="#777" stroke-width="1.1"/></svg><svg style="left:128px;top:1002px;" width="17" height="11" viewBox="0 0 17 11"><path d="M0.8 0.8H16.2L15.2 3.4H11.4L9.6 10.2H5.2Z" fill="#1a9ae8" stroke="#000" stroke-width="1.5" stroke-linejoin="round"/><path d="M3.3 4.6H10.8L10.1 7.6H4.4Z" fill="#f8f020"/><path d="M4.4 7.9H10" stroke="#000" stroke-width="0.7"/></svg><svg style="left:18px;top:310px;" width="11" height="9" viewBox="0 0 11 9"><path d="M0.5 4.5h9M6 1l3.5 3.5L6 8" fill="none" stroke="#2a7ad8" stroke-width="1.1"/></svg><div class="ab" style="left:11px;top:1019px;width:231px;height:1px;background:#c4c4c4"></div><div class="ab" style="left:0px;top:1025px;width:1920px;height:1px;background:#c8c8c8"></div><div class="ab" style="left:0px;top:1028px;width:1920px;height:1px;background:#d0d0d0"></div><div class="ab" style="left:243px;top:118px;width:1385px;height:907px;background:#dedede"></div><div class="ab" style="left:248px;top:118px;width:1064px;height:28px;background:linear-gradient(#e6e6e6,#dcdcdc)"></div><div class="ab" style="left:1312px;top:118px;width:313px;height:28px;background:#efefef"></div><div class="ab" style="left:248px;top:146px;width:1377px;height:4px;background:#efefef"></div><div class="ab" style="left:248px;top:118px;width:32px;height:28px;background:#c8c8c8"></div><div class="ab" style="left:283px;top:124px;width:1px;height:18px;background:#c4c4c4"></div><div class="ab" style="left:384px;top:124px;width:1px;height:18px;background:#c4c4c4"></div><div class="ab" style="left:420px;top:124px;width:1px;height:18px;background:#c4c4c4"></div><div class="ab" style="left:489px;top:124px;width:1px;height:18px;background:#c4c4c4"></div><div class="ab" style="left:535px;top:124px;width:1px;height:18px;background:#c4c4c4"></div><div class="ab" style="left:605px;top:124px;width:1px;height:18px;background:#c4c4c4"></div><div class="ab" style="left:705px;top:124px;width:1px;height:18px;background:#c4c4c4"></div><div class="ab" style="left:806px;top:124px;width:1px;height:18px;background:#c4c4c4"></div><div class="ab" style="left:876px;top:124px;width:1px;height:18px;background:#c4c4c4"></div><div class="ab" style="left:1072px;top:124px;width:1px;height:18px;background:#c4c4c4"></div><div class="ab" style="left:248px;top:150px;width:1377px;height:618px;background:#fff"></div><svg style="left:254px;top:122px;" width="20" height="20" viewBox="0 0 20 20"><rect x="2.5" y="2.5" width="15" height="15" fill="none" stroke="#222" stroke-dasharray="2 2"/></svg><svg style="left:290px;top:122px;" width="20" height="20" viewBox="0 0 20 20"><path d="M10 1v18M1 10h18" stroke="#000" stroke-width="2.4"/><path d="M10 0l4 4H6zM10 20l4-4H6zM0 10l4-4v8zM20 10l-4-4v8z" fill="#000"/></svg><svg style="left:323px;top:122px;" width="20" height="20" viewBox="0 0 20 20"><ellipse cx="10" cy="10" rx="8" ry="4" fill="none" stroke="#666" stroke-width="1.2"/><ellipse cx="10" cy="10" rx="3" ry="8" fill="none" stroke="#666" stroke-width="1.2"/><circle cx="10" cy="10" r="1.5" fill="#666"/></svg><svg style="left:354px;top:122px;" width="20" height="20" viewBox="0 0 20 20"><circle cx="8" cy="8" r="5.5" fill="#dceefa" stroke="#5577aa" stroke-width="1.6"/><path d="M12 12l6 6" stroke="#e0a020" stroke-width="3.5" stroke-linecap="round"/></svg><svg style="left:392px;top:122px;" width="20" height="20" viewBox="0 0 20 20"><rect x="1.5" y="1.5" width="17" height="17" fill="#e8f0fa" stroke="#2a4a90" stroke-width="1.2"/><path d="M4 4l4 4M16 4l-4 4M4 16l4-4M16 16l-4-4" stroke="#1a2a5a" stroke-width="2"/><path d="M3.5 3.5h4l-4 4zM16.5 3.5h-4l4 4zM3.5 16.5h4l-4-4zM16.5 16.5h-4l4-4z" fill="#1a2a5a"/></svg><svg style="left:429px;top:122px;" width="20" height="20" viewBox="0 0 20 20"><path d="M7 3v15M13 3v15M3 7.5h15M3 13h15" stroke="#000" stroke-width="1.6"/></svg><svg style="left:460px;top:122px;" width="20" height="20" viewBox="0 0 20 20"><rect x="1.5" y="5.5" width="17" height="9" fill="#f0a030" stroke="#c06a10" stroke-width="1"/><path d="M4 14v-3M7 14v-2M10 14v-3M13 14v-2M16 14v-3" stroke="#a85a10" stroke-width="0.8"/></svg><svg style="left:497px;top:122px;" width="20" height="20" viewBox="0 0 20 20"><rect x="1.5" y="3.5" width="15" height="13" fill="#9ac8ff" stroke="#5577aa"/><rect x="3" y="9" width="12" height="6" fill="#6ab040"/><circle cx="11" cy="8.5" r="3" fill="#f0a030"/></svg><svg style="left:518px;top:131px;" width="7" height="4" viewBox="0 0 7 4"><path d="M0 0h7L3.5 4z" fill="#666"/></svg><svg style="left:544px;top:122px;" width="20" height="20" viewBox="0 0 20 20"><path d="M3 3v14h14V7l-5-4z" fill="none" stroke="#111" stroke-width="1.2"/><rect x="1.5" y="1.5" width="3" height="3" fill="#fff" stroke="#1a6af0"/><rect x="10.5" y="1.5" width="3" height="3" fill="#fff" stroke="#1a6af0"/><rect x="15.5" y="5.5" width="3" height="3" fill="#fff" stroke="#1a6af0"/><rect x="1.5" y="15.5" width="3" height="3" fill="#fff" stroke="#1a6af0"/><rect x="15.5" y="15.5" width="3" height="3" fill="#fff" stroke="#1a6af0"/></svg><svg style="left:576px;top:122px;" width="20" height="20" viewBox="0 0 20 20"><path d="M3 17l1-5L14 2l4 4L8 16z" fill="#f8d050" stroke="#c08a20" stroke-width="1"/><path d="M3 17l1-5 4 4z" fill="#f0c090"/></svg><svg style="left:613px;top:122px;" width="20" height="20" viewBox="0 0 20 20"><circle cx="4" cy="5" r="2" fill="#000"/><path d="M6 16l8-8M6 16v-4M6 16h4M14 8h-4M14 8v4" stroke="#40b040" stroke-width="2.2" fill="none"/></svg><svg style="left:645px;top:122px;" width="20" height="20" viewBox="0 0 20 20"><circle cx="4" cy="5" r="2" fill="#000"/><path d="M12 8v10M7 13h10" stroke="#50b040" stroke-width="3.5"/></svg><svg style="left:677px;top:122px;" width="20" height="20" viewBox="0 0 20 20"><circle cx="4" cy="5" r="2" fill="#000"/><path d="M8 9l8 8M16 9l-8 8" stroke="#e03030" stroke-width="2.6"/></svg><svg style="left:714px;top:122px;" width="20" height="20" viewBox="0 0 20 20"><path d="M3 4h14" stroke="#000" stroke-width="2.2"/><circle cx="3" cy="4" r="2.3" fill="#000"/><circle cx="17" cy="4" r="2.3" fill="#000"/><path d="M4 17l5-5M11 10l5-5M4 17v-3.5M4 17h3.5M16 5h-3.5M16 5v3.5" stroke="#40b040" stroke-width="2" fill="none"/></svg><svg style="left:746px;top:122px;" width="20" height="20" viewBox="0 0 20 20"><path d="M3 4h14" stroke="#000" stroke-width="2.2"/><circle cx="3" cy="4" r="2.3" fill="#000"/><circle cx="17" cy="4" r="2.3" fill="#000"/><path d="M10 9v9M5.5 13.5h9" stroke="#50b040" stroke-width="3.5"/></svg><svg style="left:778px;top:122px;" width="20" height="20" viewBox="0 0 20 20"><path d="M3 4h14" stroke="#000" stroke-width="2.2"/><circle cx="3" cy="4" r="2.3" fill="#000"/><circle cx="17" cy="4" r="2.3" fill="#000"/><path d="M6.5 10l7 7M13.5 10l-7 7" stroke="#e03030" stroke-width="2.4"/></svg><svg style="left:815px;top:122px;" width="20" height="20" viewBox="0 0 20 20"><path d="M3 4h14" stroke="#000" stroke-width="2.2"/><circle cx="3" cy="4" r="2.3" fill="#000"/><circle cx="17" cy="4" r="2.3" fill="#000"/><rect x="3.5" y="10" width="6" height="6" rx="3" fill="none" stroke="#777" stroke-width="1.8"/><rect x="10.5" y="10" width="6" height="6" rx="3" fill="none" stroke="#777" stroke-width="1.8"/></svg><svg style="left:847px;top:122px;" width="20" height="20" viewBox="0 0 20 20"><path d="M3 4h14" stroke="#000" stroke-width="2.2"/><circle cx="3" cy="4" r="2.3" fill="#000"/><circle cx="17" cy="4" r="2.3" fill="#000"/><rect x="3.5" y="10" width="6" height="6" rx="3" fill="none" stroke="#777" stroke-width="1.8"/><rect x="10.5" y="10" width="6" height="6" rx="3" fill="none" stroke="#777" stroke-width="1.8"/><path d="M8 18l5-9" stroke="#e02020" stroke-width="1.2"/></svg><svg style="left:884px;top:122px;" width="20" height="20" viewBox="0 0 20 20"><path d="M3 4h14" stroke="#000" stroke-width="2.2"/><circle cx="3" cy="4" r="2.3" fill="#000"/><circle cx="17" cy="4" r="2.3" fill="#000"/><path d="M3 15c2-5 10-6 13-1" stroke="#000" stroke-width="2.5" fill="none"/><path d="M14 12h4l-2 4z" fill="#000"/></svg><svg style="left:916px;top:122px;" width="20" height="20" viewBox="0 0 20 20"><path d="M3 4h14" stroke="#000" stroke-width="2.2"/><circle cx="3" cy="4" r="2.3" fill="#000"/><circle cx="17" cy="4" r="2.3" fill="#000"/><path d="M3 16h14" stroke="#888" stroke-width="2"/><circle cx="3" cy="16" r="2" fill="#888"/><circle cx="17" cy="16" r="2" fill="#888"/><path d="M10 6v5M7 10h6l-3 3z" stroke="#40a040" fill="#40a040" stroke-width="2"/></svg><svg style="left:948px;top:122px;" width="20" height="20" viewBox="0 0 20 20"><path d="M3 4h14" stroke="#000" stroke-width="2.2"/><circle cx="3" cy="4" r="2.3" fill="#000"/><circle cx="17" cy="4" r="2.3" fill="#000"/><path d="M3 15h14" stroke="#888" stroke-width="2"/><circle cx="3" cy="15" r="2" fill="#000"/><circle cx="17" cy="15" r="2" fill="#888"/><path d="M6 18l7-7" stroke="#e02020" stroke-width="1.2"/></svg><svg style="left:980px;top:122px;" width="20" height="20" viewBox="0 0 20 20"><path d="M3 4h14" stroke="#000" stroke-width="2.2"/><circle cx="3" cy="4" r="2.3" fill="#000"/><circle cx="17" cy="4" r="2.3" fill="#000"/><path d="M3 15h14" stroke="#888" stroke-width="2"/><circle cx="3" cy="15" r="2" fill="#000"/><circle cx="17" cy="15" r="2" fill="#888"/><path d="M8 12v6l5-3z" fill="#30a030"/></svg><svg style="left:1012px;top:122px;" width="20" height="20" viewBox="0 0 20 20"><path d="M3 4h14" stroke="#000" stroke-width="2.2"/><circle cx="3" cy="4" r="2.3" fill="#000"/><circle cx="17" cy="4" r="2.3" fill="#000"/><path d="M4 15h12" stroke="#208020" stroke-width="2"/><path d="M2 15l4-3v6zM18 15l-4-3v6z" fill="#208020"/></svg><svg style="left:1044px;top:122px;" width="20" height="20" viewBox="0 0 20 20"><path d="M3 4h14M3 16h14M16 4L4 16" stroke="#000" stroke-width="2.2"/><circle cx="3" cy="4" r="2.3" fill="#000"/><circle cx="17" cy="4" r="2.3" fill="#000"/><circle cx="3" cy="16" r="2.3" fill="#000"/><circle cx="17" cy="16" r="2.3" fill="#000"/><path d="M5 7l10 6" stroke="#e02020" stroke-width="1.2"/></svg><svg style="left:1081px;top:122px;" width="20" height="20" viewBox="0 0 20 20"><text x="0" y="12" font-family="Liberation Sans" font-weight="bold" font-size="12" fill="#3a5aa8">Ab</text><path d="M9 19l1-4 7-7 2 2-7 7z" fill="#f0b030" stroke="#a06a10" stroke-width="0.8"/></svg><svg style="left:1113px;top:122px;" width="20" height="20" viewBox="0 0 20 20"><path d="M5 2v14M9 2v14M13 2v14M2 5h14M2 9h14M2 13h14" stroke="#000" stroke-width="1.6"/><path d="M14 11v9M9.5 15.5h9" stroke="#50b040" stroke-width="3.5"/></svg><svg style="left:1134px;top:131px;" width="7" height="4" viewBox="0 0 7 4"><path d="M0 0h7L3.5 4z" fill="#666"/></svg><svg style="left:1154px;top:122px;" width="20" height="20" viewBox="0 0 20 20"><path d="M3 4h14M3 16h14M3 4v12M17 4v12" stroke="#000" stroke-width="2.2"/><circle cx="3" cy="4" r="2.3" fill="#000"/><circle cx="17" cy="4" r="2.3" fill="#000"/><circle cx="3" cy="16" r="2.3" fill="#000"/><circle cx="17" cy="16" r="2.3" fill="#000"/><path d="M6 6l8 8M14 6l-8 8" stroke="#e03030" stroke-width="2.4"/></svg><svg style="left:1175px;top:131px;" width="7" height="4" viewBox="0 0 7 4"><path d="M0 0h7L3.5 4z" fill="#666"/></svg><svg style="left:1195px;top:122px;" width="20" height="20" viewBox="0 0 20 20"><rect x="1.5" y="3.5" width="15" height="12" fill="#f4f8ff" stroke="#3a5aa8"/><text x="3" y="13" font-family="Liberation Sans" font-size="9.5" fill="#1a3a88">ab</text></svg><svg style="left:1216px;top:131px;" width="7" height="4" viewBox="0 0 7 4"><path d="M0 0h7L3.5 4z" fill="#666"/></svg><svg style="left:1235px;top:122px;" width="20" height="20" viewBox="0 0 20 20"><rect x="1.5" y="1.5" width="11" height="8" fill="#f4f8ff" stroke="#3a5aa8"/><text x="2.5" y="8.5" font-family="Liberation Sans" font-size="6.5" font-weight="bold" fill="#1a3a88">AB</text><path d="M6 11v8M10 11v8M14 4v15M3 13h13M3 17h13" stroke="#000" stroke-width="1.5"/></svg><svg style="left:1256px;top:131px;" width="7" height="4" viewBox="0 0 7 4"><path d="M0 0h7L3.5 4z" fill="#666"/></svg><svg style="left:1276px;top:122px;" width="20" height="20" viewBox="0 0 20 20"><rect x="1" y="2" width="14" height="15" fill="#222"/><rect x="3" y="4" width="3" height="11" fill="#f040c0"/><rect x="7" y="4" width="6" height="3" fill="#e02020"/><rect x="7" y="8" width="4" height="3" fill="#3a8af0"/><rect x="7" y="12" width="3" height="3" fill="#f0a020"/><circle cx="15" cy="16" r="2.5" fill="#fff" stroke="#2a8a2a"/></svg><svg style="left:1297px;top:131px;" width="7" height="4" viewBox="0 0 7 4"><path d="M0 0h7L3.5 4z" fill="#666"/></svg><svg style="left:0;top:0" width="1920" height="1032"><clipPath id="bc"><polygon points="1459,415.5 1625,581.5 1625,683.5 1540,768.5 1459,768.5"/></clipPath><g clip-path="url(#bc)"><path d="M1452.0 395.0L1459.0 402.0L1452.0 409.0L1445.0 402.0Z" fill="#b60fd2" stroke="#4a4a4a" stroke-width="0.9"/><path d="M1445.0 402.0L1452.0 409.0L1445.0 416.0L1438.0 409.0Z" fill="#b60fd2" stroke="#4a4a4a" stroke-width="0.9"/><path d="M1466.0 395.0L1473.0 402.0L1466.0 409.0L1459.0 402.0Z" fill="#b60fd2" stroke="#4a4a4a" stroke-width="0.9"/><path d="M1459.0 402.0L1466.0 409.0L1459.0 416.0L1452.0 409.0Z" fill="#b60fd2" stroke="#4a4a4a" stroke-width="0.9"/><path d="M1452.0 409.0L1459.0 416.0L1452.0 423.0L1445.0 416.0Z" fill="#b60fd2" stroke="#4a4a4a" stroke-width="0.9"/><path d="M1445.0 416.0L1452.0 423.0L1445.0 430.0L1438.0 423.0Z" fill="#b60fd2" stroke="#4a4a4a" stroke-width="0.9"/><path d="M1480.0 395.0L1487.0 402.0L1480.0 409.0L1473.0 402.0Z" fill="#7612c8" stroke="#4a4a4a" stroke-width="0.9"/><path d="M1473.0 402.0L1480.0 409.0L1473.0 416.0L1466.0 409.0Z" fill="#b60fd2" stroke="#4a4a4a" stroke-width="0.9"/><path d="M1466.0 409.0L1473.0 416.0L1466.0 423.0L1459.0 416.0Z" fill="#7612c8" stroke="#4a4a4a" stroke-width="0.9"/><path d="M1459.0 416.0L1466.0 423.0L1459.0 430.0L1452.0 423.0Z" fill="#b60fd2" stroke="#4a4a4a" stroke-width="0.9"/><path d="M1452.0 423.0L1459.0 430.0L1452.0 437.0L1445.0 430.0Z" fill="#d6d6d6" stroke="#4a4a4a" stroke-width="0.9"/><path d="M1445.0 430.0L1452.0 437.0L1445.0 444.0L1438.0 437.0Z" fill="#7612c8" stroke="#4a4a4a" stroke-width="0.9"/><path d="M1494.0 395.0L1501.0 402.0L1494.0 409.0L1487.0 402.0Z" fill="#b60fd2" stroke="#4a4a4a" stroke-width="0.9"/><path d="M1487.0 402.0L1494.0 409.0L1487.0 416.0L1480.0 409.0Z" fill="#b60fd2" stroke="#4a4a4a" stroke-width="0.9"/><path d="M1480.0 409.0L1487.0 416.0L1480.0 423.0L1473.0 416.0Z" fill="#d6d6d6" stroke="#4a4a4a" stroke-width="0.9"/><path d="M1473.0 416.0L1480.0 423.0L1473.0 430.0L1466.0 423.0Z" fill="#b60fd2" stroke="#4a4a4a" stroke-width="0.9"/><path d="M1466.0 423.0L1473.0 430.0L1466.0 437.0L1459.0 430.0Z" fill="#b60fd2" stroke="#4a4a4a" stroke-width="0.9"/><path d="M1459.0 430.0L1466.0 437.0L1459.0 444.0L1452.0 437.0Z" fill="#b60fd2" stroke="#4a4a4a" stroke-width="0.9"/><path d="M1452.0 437.0L1459.0 444.0L1452.0 451.0L1445.0 444.0Z" fill="#b60fd2" stroke="#4a4a4a" stroke-width="0.9"/><path d="M1445.0 444.0L1452.0 451.0L1445.0 458.0L1438.0 451.0Z" fill="#b60fd2" stroke="#4a4a4a" stroke-width="0.9"/><path d="M1508.0 395.0L1515.0 402.0L1508.0 409.0L1501.0 402.0Z" fill="#b60fd2" stroke="#4a4a4a" stroke-width="0.9"/><path d="M1501.0 402.0L1508.0 409.0L1501.0 416.0L1494.0 409.0Z" fill="#b60fd2" stroke="#4a4a4a" stroke-width="0.9"/><path d="M1494.0 409.0L1501.0 416.0L1494.0 423.0L1487.0 416.0Z" fill="#d6d6d6" stroke="#4a4a4a" stroke-width="0.9"/><path d="M1487.0 416.0L1494.0 423.0L1487.0 430.0L1480.0 423.0Z" fill="#d6d6d6" stroke="#4a4a4a" stroke-width="0.9"/><path d="M1480.0 423.0L1487.0 430.0L1480.0 437.0L1473.0 430.0Z" fill="#b60fd2" stroke="#4a4a4a" stroke-width="0.9"/><path d="M1473.0 430.0L1480.0 437.0L1473.0 444.0L1466.0 437.0Z" fill="#7612c8" stroke="#4a4a4a" stroke-width="0.9"/><path d="M1466.0 437.0L1473.0 444.0L1466.0 451.0L1459.0 444.0Z" fill="#b60fd2" stroke="#4a4a4a" stroke-width="0.9"/><path d="M1459.0 444.0L1466.0 451.0L1459.0 458.0L1452.0 451.0Z" fill="#d6d6d6" stroke="#4a4a4a" stroke-width="0.9"/><path d="M1452.0 451.0L1459.0 458.0L1452.0 465.0L1445.0 458.0Z" fill="#b60fd2" stroke="#4a4a4a" stroke-width="0.9"/><path d="M1445.0 458.0L1452.0 465.0L1445.0 472.0L1438.0 465.0Z" fill="#b60fd2" stroke="#4a4a4a" stroke-width="0.9"/><path d="M1522.0 395.0L1529.0 402.0L1522.0 409.0L1515.0 402.0Z" fill="#d6d6d6" stroke="#4a4a4a" stroke-width="0.9"/><path d="M1515.0 402.0L1522.0 409.0L1515.0 416.0L1508.0 409.0Z" fill="#b60fd2" stroke="#4a4a4a" stroke-width="0.9"/><path d="M1508.0 409.0L1515.0 416.0L1508.0 423.0L1501.0 416.0Z" fill="#d6d6d6" stroke="#4a4a4a" stroke-width="0.9"/><path d="M1501.0 416.0L1508.0 423.0L1501.0 430.0L1494.0 423.0Z" fill="#d6d6d6" stroke="#4a4a4a" stroke-width="0.9"/><path d="M1494.0 423.0L1501.0 430.0L1494.0 437.0L1487.0 430.0Z" fill="#d6d6d6" stroke="#4a4a4a" stroke-width="0.9"/><path d="M1487.0 430.0L1494.0 437.0L1487.0 444.0L1480.0 437.0Z" fill="#b60fd2" stroke="#4a4a4a" stroke-width="0.9"/><path d="M1480.0 437.0L1487.0 444.0L1480.0 451.0L1473.0 444.0Z" fill="#b60fd2" stroke="#4a4a4a" stroke-width="0.9"/><path d="M1473.0 444.0L1480.0 451.0L1473.0 458.0L1466.0 451.0Z" fill="#7612c8" stroke="#4a4a4a" stroke-width="0.9"/><path d="M1466.0 451.0L1473.0 458.0L1466.0 465.0L1459.0 458.0Z" fill="#d6d6d6" stroke="#4a4a4a" stroke-width="0.9"/><path d="M1459.0 458.0L1466.0 465.0L1459.0 472.0L1452.0 465.0Z" fill="#b60fd2" stroke="#4a4a4a" stroke-width="0.9"/><path d="M1452.0 465.0L1459.0 472.0L1452.0 479.0L1445.0 472.0Z" fill="#b60fd2" stroke="#4a4a4a" stroke-width="0.9"/><path d="M1445.0 472.0L1452.0 479.0L1445.0 486.0L1438.0 479.0Z" fill="#7612c8" stroke="#4a4a4a" stroke-width="0.9"/><path d="M1536.0 395.0L1543.0 402.0L1536.0 409.0L1529.0 402.0Z" fill="#d6d6d6" stroke="#4a4a4a" stroke-width="0.9"/><path d="M1529.0 402.0L1536.0 409.0L1529.0 416.0L1522.0 409.0Z" fill="#b60fd2" stroke="#4a4a4a" stroke-width="0.9"/><path d="M1522.0 409.0L1529.0 416.0L1522.0 423.0L1515.0 416.0Z" fill="#d6d6d6" stroke="#4a4a4a" stroke-width="0.9"/><path d="M1515.0 416.0L1522.0 423.0L1515.0 430.0L1508.0 423.0Z" fill="#b60fd2" stroke="#4a4a4a" stroke-width="0.9"/><path d="M1508.0 423.0L1515.0 430.0L1508.0 437.0L1501.0 430.0Z" fill="#b60fd2" stroke="#4a4a4a" stroke-width="0.9"/><path d="M1501.0 430.0L1508.0 437.0L1501.0 444.0L1494.0 437.0Z" fill="#b60fd2" stroke="#4a4a4a" stroke-width="0.9"/><path d="M1494.0 437.0L1501.0 444.0L1494.0 451.0L1487.0 444.0Z" fill="#b60fd2" stroke="#4a4a4a" stroke-width="0.9"/><path d="M1487.0 444.0L1494.0 451.0L1487.0 458.0L1480.0 451.0Z" fill="#7612c8" stroke="#4a4a4a" stroke-width="0.9"/><path d="M1480.0 451.0L1487.0 458.0L1480.0 465.0L1473.0 458.0Z" fill="#b60fd2" stroke="#4a4a4a" stroke-width="0.9"/><path d="M1473.0 458.0L1480.0 465.0L1473.0 472.0L1466.0 465.0Z" fill="#7612c8" stroke="#4a4a4a" stroke-width="0.9"/><path d="M1466.0 465.0L1473.0 472.0L1466.0 479.0L1459.0 472.0Z" fill="#d6d6d6" stroke="#4a4a4a" stroke-width="0.9"/><path d="M1459.0 472.0L1466.0 479.0L1459.0 486.0L1452.0 479.0Z" fill="#d6d6d6" stroke="#4a4a4a" stroke-width="0.9"/><path d="M1452.0 479.0L1459.0 486.0L1452.0 493.0L1445.0 486.0Z" fill="#b60fd2" stroke="#4a4a4a" stroke-width="0.9"/><path d="M1445.0 486.0L1452.0 493.0L1445.0 500.0L1438.0 493.0Z" fill="#7612c8" stroke="#4a4a4a" stroke-width="0.9"/><path d="M1550.0 395.0L1557.0 402.0L1550.0 409.0L1543.0 402.0Z" fill="#d6d6d6" stroke="#4a4a4a" stroke-width="0.9"/><path d="M1543.0 402.0L1550.0 409.0L1543.0 416.0L1536.0 409.0Z" fill="#b60fd2" stroke="#4a4a4a" stroke-width="0.9"/><path d="M1536.0 409.0L1543.0 416.0L1536.0 423.0L1529.0 416.0Z" fill="#b60fd2" stroke="#4a4a4a" stroke-width="0.9"/><path d="M1529.0 416.0L1536.0 423.0L1529.0 430.0L1522.0 423.0Z" fill="#d6d6d6" stroke="#4a4a4a" stroke-width="0.9"/><path d="M1522.0 423.0L1529.0 430.0L1522.0 437.0L1515.0 430.0Z" fill="#d6d6d6" stroke="#4a4a4a" stroke-width="0.9"/><path d="M1515.0 430.0L1522.0 437.0L1515.0 444.0L1508.0 437.0Z" fill="#b60fd2" stroke="#4a4a4a" stroke-width="0.9"/><path d="M1508.0 437.0L1515.0 444.0L1508.0 451.0L1501.0 444.0Z" fill="#b60fd2" stroke="#4a4a4a" stroke-width="0.9"/><path d="M1501.0 444.0L1508.0 451.0L1501.0 458.0L1494.0 451.0Z" fill="#d6d6d6" stroke="#4a4a4a" stroke-width="0.9"/><path d="M1494.0 451.0L1501.0 458.0L1494.0 465.0L1487.0 458.0Z" fill="#d6d6d6" stroke="#4a4a4a" stroke-width="0.9"/><path d="M1487.0 458.0L1494.0 465.0L1487.0 472.0L1480.0 465.0Z" fill="#d6d6d6" stroke="#4a4a4a" stroke-width="0.9"/><path d="M1480.0 465.0L1487.0 472.0L1480.0 479.0L1473.0 472.0Z" fill="#b60fd2" stroke="#4a4a4a" stroke-width="0.9"/><path d="M1473.0 472.0L1480.0 479.0L1473.0 486.0L1466.0 479.0Z" fill="#b60fd2" stroke="#4a4a4a" stroke-width="0.9"/><path d="M1466.0 479.0L1473.0 486.0L1466.0 493.0L1459.0 486.0Z" fill="#d6d6d6" stroke="#4a4a4a" stroke-width="0.9"/><path d="M1459.0 486.0L1466.0 493.0L1459.0 500.0L1452.0 493.0Z" fill="#7612c8" stroke="#4a4a4a" stroke-width="0.9"/><path d="M1452.0 493.0L1459.0 500.0L1452.0 507.0L1445.0 500.0Z" fill="#b60fd2" stroke="#4a4a4a" stroke-width="0.9"/><path d="M1445.0 500.0L1452.0 507.0L1445.0 514.0L1438.0 507.0Z" fill="#b60fd2" stroke="#4a4a4a" stroke-width="0.9"/><path d="M1557.0 402.0L1564.0 409.0L1557.0 416.0L1550.0 409.0Z" fill="#d6d6d6" stroke="#4a4a4a" stroke-width="0.9"/><path d="M1550.0 409.0L1557.0 416.0L1550.0 423.0L1543.0 416.0Z" fill="#b60fd2" stroke="#4a4a4a" stroke-width="0.9"/><path d="M1543.0 416.0L1550.0 423.0L1543.0 430.0L1536.0 423.0Z" fill="#b60fd2" stroke="#4a4a4a" stroke-width="0.9"/><path d="M1536.0 423.0L1543.0 430.0L1536.0 437.0L1529.0 430.0Z" fill="#d6d6d6" stroke="#4a4a4a" stroke-width="0.9"/><path d="M1529.0 430.0L1536.0 437.0L1529.0 444.0L1522.0 437.0Z" fill="#b60fd2" stroke="#4a4a4a" stroke-width="0.9"/><path d="M1522.0 437.0L1529.0 444.0L1522.0 451.0L1515.0 444.0Z" fill="#b60fd2" stroke="#4a4a4a" stroke-width="0.9"/><path d="M1515.0 444.0L1522.0 451.0L1515.0 458.0L1508.0 451.0Z" fill="#b60fd2" stroke="#4a4a4a" stroke-width="0.9"/><path d="M1508.0 451.0L1515.0 458.0L1508.0 465.0L1501.0 458.0Z" fill="#d6d6d6" stroke="#4a4a4a" stroke-width="0.9"/><path d="M1501.0 458.0L1508.0 465.0L1501.0 472.0L1494.0 465.0Z" fill="#d6d6d6" stroke="#4a4a4a" stroke-width="0.9"/><path d="M1494.0 465.0L1501.0 472.0L1494.0 479.0L1487.0 472.0Z" fill="#b60fd2" stroke="#4a4a4a" stroke-width="0.9"/><path d="M1487.0 472.0L1494.0 479.0L1487.0 486.0L1480.0 479.0Z" fill="#b60fd2" stroke="#4a4a4a" stroke-width="0.9"/><path d="M1480.0 479.0L1487.0 486.0L1480.0 493.0L1473.0 486.0Z" fill="#7612c8" stroke="#4a4a4a" stroke-width="0.9"/><path d="M1473.0 486.0L1480.0 493.0L1473.0 500.0L1466.0 493.0Z" fill="#d6d6d6" stroke="#4a4a4a" stroke-width="0.9"/><path d="M1466.0 493.0L1473.0 500.0L1466.0 507.0L1459.0 500.0Z" fill="#b60fd2" stroke="#4a4a4a" stroke-width="0.9"/><path d="M1459.0 500.0L1466.0 507.0L1459.0 514.0L1452.0 507.0Z" fill="#b60fd2" stroke="#4a4a4a" stroke-width="0.9"/><path d="M1452.0 507.0L1459.0 514.0L1452.0 521.0L1445.0 514.0Z" fill="#b60fd2" stroke="#4a4a4a" stroke-width="0.9"/><path d="M1445.0 514.0L1452.0 521.0L1445.0 528.0L1438.0 521.0Z" fill="#b60fd2" stroke="#4a4a4a" stroke-width="0.9"/><path d="M1564.0 409.0L1571.0 416.0L1564.0 423.0L1557.0 416.0Z" fill="#7612c8" stroke="#4a4a4a" stroke-width="0.9"/><path d="M1557.0 416.0L1564.0 423.0L1557.0 430.0L1550.0 423.0Z" fill="#d6d6d6" stroke="#4a4a4a" stroke-width="0.9"/><path d="M1550.0 423.0L1557.0 430.0L1550.0 437.0L1543.0 430.0Z" fill="#b60fd2" stroke="#4a4a4a" stroke-width="0.9"/><path d="M1543.0 430.0L1550.0 437.0L1543.0 444.0L1536.0 437.0Z" fill="#b60fd2" stroke="#4a4a4a" stroke-width="0.9"/><path d="M1536.0 437.0L1543.0 444.0L1536.0 451.0L1529.0 444.0Z" fill="#d6d6d6" stroke="#4a4a4a" stroke-width="0.9"/><path d="M1529.0 444.0L1536.0 451.0L1529.0 458.0L1522.0 451.0Z" fill="#d6d6d6" stroke="#4a4a4a" stroke-width="0.9"/><path d="M1522.0 451.0L1529.0 458.0L1522.0 465.0L1515.0 458.0Z" fill="#d6d6d6" stroke="#4a4a4a" stroke-width="0.9"/><path d="M1515.0 458.0L1522.0 465.0L1515.0 472.0L1508.0 465.0Z" fill="#b60fd2" stroke="#4a4a4a" stroke-width="0.9"/><path d="M1508.0 465.0L1515.0 472.0L1508.0 479.0L1501.0 472.0Z" fill="#b60fd2" stroke="#4a4a4a" stroke-width="0.9"/><path d="M1501.0 472.0L1508.0 479.0L1501.0 486.0L1494.0 479.0Z" fill="#b60fd2" stroke="#4a4a4a" stroke-width="0.9"/><path d="M1494.0 479.0L1501.0 486.0L1494.0 493.0L1487.0 486.0Z" fill="#b60fd2" stroke="#4a4a4a" stroke-width="0.9"/><path d="M1487.0 486.0L1494.0 493.0L1487.0 500.0L1480.0 493.0Z" fill="#d6d6d6" stroke="#4a4a4a" stroke-width="0.9"/><path d="M1480.0 493.0L1487.0 500.0L1480.0 507.0L1473.0 500.0Z" fill="#d6d6d6" stroke="#4a4a4a" stroke-width="0.9"/><path d="M1473.0 500.0L1480.0 507.0L1473.0 514.0L1466.0 507.0Z" fill="#d6d6d6" stroke="#4a4a4a" stroke-width="0.9"/><path d="M1466.0 507.0L1473.0 514.0L1466.0 521.0L1459.0 514.0Z" fill="#d6d6d6" stroke="#4a4a4a" stroke-width="0.9"/><path d="M1459.0 514.0L1466.0 521.0L1459.0 528.0L1452.0 521.0Z" fill="#b60fd2" stroke="#4a4a4a" stroke-width="0.9"/><path d="M1452.0 521.0L1459.0 528.0L1452.0 535.0L1445.0 528.0Z" fill="#b60fd2" stroke="#4a4a4a" stroke-width="0.9"/><path d="M1445.0 528.0L1452.0 535.0L1445.0 542.0L1438.0 535.0Z" fill="#b60fd2" stroke="#4a4a4a" stroke-width="0.9"/><path d="M1571.0 416.0L1578.0 423.0L1571.0 430.0L1564.0 423.0Z" fill="#b60fd2" stroke="#4a4a4a" stroke-width="0.9"/><path d="M1564.0 423.0L1571.0 430.0L1564.0 437.0L1557.0 430.0Z" fill="#d6d6d6" stroke="#4a4a4a" stroke-width="0.9"/><path d="M1557.0 430.0L1564.0 437.0L1557.0 444.0L1550.0 437.0Z" fill="#d6d6d6" stroke="#4a4a4a" stroke-width="0.9"/><path d="M1550.0 437.0L1557.0 444.0L1550.0 451.0L1543.0 444.0Z" fill="#d6d6d6" stroke="#4a4a4a" stroke-width="0.9"/><path d="M1543.0 444.0L1550.0 451.0L1543.0 458.0L1536.0 451.0Z" fill="#d6d6d6" stroke="#4a4a4a" stroke-width="0.9"/><path d="M1536.0 451.0L1543.0 458.0L1536.0 465.0L1529.0 458.0Z" fill="#d6d6d6" stroke="#4a4a4a" stroke-width="0.9"/><path d="M1529.0 458.0L1536.0 465.0L1529.0 472.0L1522.0 465.0Z" fill="#d6d6d6" stroke="#4a4a4a" stroke-width="0.9"/><path d="M1522.0 465.0L1529.0 472.0L1522.0 479.0L1515.0 472.0Z" fill="#d6d6d6" stroke="#4a4a4a" stroke-width="0.9"/><path d="M1515.0 472.0L1522.0 479.0L1515.0 486.0L1508.0 479.0Z" fill="#b60fd2" stroke="#4a4a4a" stroke-width="0.9"/><path d="M1508.0 479.0L1515.0 486.0L1508.0 493.0L1501.0 486.0Z" fill="#b60fd2" stroke="#4a4a4a" stroke-width="0.9"/><path d="M1501.0 486.0L1508.0 493.0L1501.0 500.0L1494.0 493.0Z" fill="#b60fd2" stroke="#4a4a4a" stroke-width="0.9"/><path d="M1494.0 493.0L1501.0 500.0L1494.0 507.0L1487.0 500.0Z" fill="#d6d6d6" stroke="#4a4a4a" stroke-width="0.9"/><path d="M1487.0 500.0L1494.0 507.0L1487.0 514.0L1480.0 507.0Z" fill="#d6d6d6" stroke="#4a4a4a" stroke-width="0.9"/><path d="M1480.0 507.0L1487.0 514.0L1480.0 521.0L1473.0 514.0Z" fill="#b60fd2" stroke="#4a4a4a" stroke-width="0.9"/><path d="M1473.0 514.0L1480.0 521.0L1473.0 528.0L1466.0 521.0Z" fill="#d6d6d6" stroke="#4a4a4a" stroke-width="0.9"/><path d="M1466.0 521.0L1473.0 528.0L1466.0 535.0L1459.0 528.0Z" fill="#b60fd2" stroke="#4a4a4a" stroke-width="0.9"/><path d="M1459.0 528.0L1466.0 535.0L1459.0 542.0L1452.0 535.0Z" fill="#d6d6d6" stroke="#4a4a4a" stroke-width="0.9"/><path d="M1452.0 535.0L1459.0 542.0L1452.0 549.0L1445.0 542.0Z" fill="#b60fd2" stroke="#4a4a4a" stroke-width="0.9"/><path d="M1445.0 542.0L1452.0 549.0L1445.0 556.0L1438.0 549.0Z" fill="#b60fd2" stroke="#4a4a4a" stroke-width="0.9"/><path d="M1578.0 423.0L1585.0 430.0L1578.0 437.0L1571.0 430.0Z" fill="#d6d6d6" stroke="#4a4a4a" stroke-width="0.9"/><path d="M1571.0 430.0L1578.0 437.0L1571.0 444.0L1564.0 437.0Z" fill="#d6d6d6" stroke="#4a4a4a" stroke-width="0.9"/><path d="M1564.0 437.0L1571.0 444.0L1564.0 451.0L1557.0 444.0Z" fill="#d6d6d6" stroke="#4a4a4a" stroke-width="0.9"/><path d="M1557.0 444.0L1564.0 451.0L1557.0 458.0L1550.0 451.0Z" fill="#d6d6d6" stroke="#4a4a4a" stroke-width="0.9"/><path d="M1550.0 451.0L1557.0 458.0L1550.0 465.0L1543.0 458.0Z" fill="#d6d6d6" stroke="#4a4a4a" stroke-width="0.9"/><path d="M1543.0 458.0L1550.0 465.0L1543.0 472.0L1536.0 465.0Z" fill="#d6d6d6" stroke="#4a4a4a" stroke-width="0.9"/><path d="M1536.0 465.0L1543.0 472.0L1536.0 479.0L1529.0 472.0Z" fill="#d6d6d6" stroke="#4a4a4a" stroke-width="0.9"/><path d="M1529.0 472.0L1536.0 479.0L1529.0 486.0L1522.0 479.0Z" fill="#d6d6d6" stroke="#4a4a4a" stroke-width="0.9"/><path d="M1522.0 479.0L1529.0 486.0L1522.0 493.0L1515.0 486.0Z" fill="#b60fd2" stroke="#4a4a4a" stroke-width="0.9"/><path d="M1515.0 486.0L1522.0 493.0L1515.0 500.0L1508.0 493.0Z" fill="#7612c8" stroke="#4a4a4a" stroke-width="0.9"/><path d="M1508.0 493.0L1515.0 500.0L1508.0 507.0L1501.0 500.0Z" fill="#d6d6d6" stroke="#4a4a4a" stroke-width="0.9"/><path d="M1501.0 500.0L1508.0 507.0L1501.0 514.0L1494.0 507.0Z" fill="#7612c8" stroke="#4a4a4a" stroke-width="0.9"/><path d="M1494.0 507.0L1501.0 514.0L1494.0 521.0L1487.0 514.0Z" fill="#d6d6d6" stroke="#4a4a4a" stroke-width="0.9"/><path d="M1487.0 514.0L1494.0 521.0L1487.0 528.0L1480.0 521.0Z" fill="#d6d6d6" stroke="#4a4a4a" stroke-width="0.9"/><path d="M1480.0 521.0L1487.0 528.0L1480.0 535.0L1473.0 528.0Z" fill="#b60fd2" stroke="#4a4a4a" stroke-width="0.9"/><path d="M1473.0 528.0L1480.0 535.0L1473.0 542.0L1466.0 535.0Z" fill="#b60fd2" stroke="#4a4a4a" stroke-width="0.9"/><path d="M1466.0 535.0L1473.0 542.0L1466.0 549.0L1459.0 542.0Z" fill="#d6d6d6" stroke="#4a4a4a" stroke-width="0.9"/><path d="M1459.0 542.0L1466.0 549.0L1459.0 556.0L1452.0 549.0Z" fill="#b60fd2" stroke="#4a4a4a" stroke-width="0.9"/><path d="M1452.0 549.0L1459.0 556.0L1452.0 563.0L1445.0 556.0Z" fill="#d6d6d6" stroke="#4a4a4a" stroke-width="0.9"/><path d="M1445.0 556.0L1452.0 563.0L1445.0 570.0L1438.0 563.0Z" fill="#7612c8" stroke="#4a4a4a" stroke-width="0.9"/><path d="M1585.0 430.0L1592.0 437.0L1585.0 444.0L1578.0 437.0Z" fill="#d6d6d6" stroke="#4a4a4a" stroke-width="0.9"/><path d="M1578.0 437.0L1585.0 444.0L1578.0 451.0L1571.0 444.0Z" fill="#d6d6d6" stroke="#4a4a4a" stroke-width="0.9"/><path d="M1571.0 444.0L1578.0 451.0L1571.0 458.0L1564.0 451.0Z" fill="#d6d6d6" stroke="#4a4a4a" stroke-width="0.9"/><path d="M1564.0 451.0L1571.0 458.0L1564.0 465.0L1557.0 458.0Z" fill="#d6d6d6" stroke="#4a4a4a" stroke-width="0.9"/><path d="M1557.0 458.0L1564.0 465.0L1557.0 472.0L1550.0 465.0Z" fill="#d6d6d6" stroke="#4a4a4a" stroke-width="0.9"/><path d="M1550.0 465.0L1557.0 472.0L1550.0 479.0L1543.0 472.0Z" fill="#d6d6d6" stroke="#4a4a4a" stroke-width="0.9"/><path d="M1543.0 472.0L1550.0 479.0L1543.0 486.0L1536.0 479.0Z" fill="#d6d6d6" stroke="#4a4a4a" stroke-width="0.9"/><path d="M1536.0 479.0L1543.0 486.0L1536.0 493.0L1529.0 486.0Z" fill="#d6d6d6" stroke="#4a4a4a" stroke-width="0.9"/><path d="M1529.0 486.0L1536.0 493.0L1529.0 500.0L1522.0 493.0Z" fill="#7612c8" stroke="#4a4a4a" stroke-width="0.9"/><path d="M1522.0 493.0L1529.0 500.0L1522.0 507.0L1515.0 500.0Z" fill="#b60fd2" stroke="#4a4a4a" stroke-width="0.9"/><path d="M1515.0 500.0L1522.0 507.0L1515.0 514.0L1508.0 507.0Z" fill="#d6d6d6" stroke="#4a4a4a" stroke-width="0.9"/><path d="M1508.0 507.0L1515.0 514.0L1508.0 521.0L1501.0 514.0Z" fill="#d6d6d6" stroke="#4a4a4a" stroke-width="0.9"/><path d="M1501.0 514.0L1508.0 521.0L1501.0 528.0L1494.0 521.0Z" fill="#7612c8" stroke="#4a4a4a" stroke-width="0.9"/><path d="M1494.0 521.0L1501.0 528.0L1494.0 535.0L1487.0 528.0Z" fill="#b60fd2" stroke="#4a4a4a" stroke-width="0.9"/><path d="M1487.0 528.0L1494.0 535.0L1487.0 542.0L1480.0 535.0Z" fill="#b60fd2" stroke="#4a4a4a" stroke-width="0.9"/><path d="M1480.0 535.0L1487.0 542.0L1480.0 549.0L1473.0 542.0Z" fill="#b60fd2" stroke="#4a4a4a" stroke-width="0.9"/><path d="M1473.0 542.0L1480.0 549.0L1473.0 556.0L1466.0 549.0Z" fill="#7612c8" stroke="#4a4a4a" stroke-width="0.9"/><path d="M1466.0 549.0L1473.0 556.0L1466.0 563.0L1459.0 556.0Z" fill="#b60fd2" stroke="#4a4a4a" stroke-width="0.9"/><path d="M1459.0 556.0L1466.0 563.0L1459.0 570.0L1452.0 563.0Z" fill="#b60fd2" stroke="#4a4a4a" stroke-width="0.9"/><path d="M1452.0 563.0L1459.0 570.0L1452.0 577.0L1445.0 570.0Z" fill="#b60fd2" stroke="#4a4a4a" stroke-width="0.9"/><path d="M1445.0 570.0L1452.0 577.0L1445.0 584.0L1438.0 577.0Z" fill="#7612c8" stroke="#4a4a4a" stroke-width="0.9"/><path d="M1592.0 437.0L1599.0 444.0L1592.0 451.0L1585.0 444.0Z" fill="#b60fd2" stroke="#4a4a4a" stroke-width="0.9"/><path d="M1585.0 444.0L1592.0 451.0L1585.0 458.0L1578.0 451.0Z" fill="#d6d6d6" stroke="#4a4a4a" stroke-width="0.9"/><path d="M1578.0 451.0L1585.0 458.0L1578.0 465.0L1571.0 458.0Z" fill="#d6d6d6" stroke="#4a4a4a" stroke-width="0.9"/><path d="M1571.0 458.0L1578.0 465.0L1571.0 472.0L1564.0 465.0Z" fill="#d6d6d6" stroke="#4a4a4a" stroke-width="0.9"/><path d="M1564.0 465.0L1571.0 472.0L1564.0 479.0L1557.0 472.0Z" fill="#d6d6d6" stroke="#4a4a4a" stroke-width="0.9"/><path d="M1557.0 472.0L1564.0 479.0L1557.0 486.0L1550.0 479.0Z" fill="#d6d6d6" stroke="#4a4a4a" stroke-width="0.9"/><path d="M1550.0 479.0L1557.0 486.0L1550.0 493.0L1543.0 486.0Z" fill="#d6d6d6" stroke="#4a4a4a" stroke-width="0.9"/><path d="M1543.0 486.0L1550.0 493.0L1543.0 500.0L1536.0 493.0Z" fill="#d6d6d6" stroke="#4a4a4a" stroke-width="0.9"/><path d="M1536.0 493.0L1543.0 500.0L1536.0 507.0L1529.0 500.0Z" fill="#d6d6d6" stroke="#4a4a4a" stroke-width="0.9"/><path d="M1529.0 500.0L1536.0 507.0L1529.0 514.0L1522.0 507.0Z" fill="#d6d6d6" stroke="#4a4a4a" stroke-width="0.9"/><path d="M1522.0 507.0L1529.0 514.0L1522.0 521.0L1515.0 514.0Z" fill="#d6d6d6" stroke="#4a4a4a" stroke-width="0.9"/><path d="M1515.0 514.0L1522.0 521.0L1515.0 528.0L1508.0 521.0Z" fill="#d6d6d6" stroke="#4a4a4a" stroke-width="0.9"/><path d="M1508.0 521.0L1515.0 528.0L1508.0 535.0L1501.0 528.0Z" fill="#d6d6d6" stroke="#4a4a4a" stroke-width="0.9"/><path d="M1501.0 528.0L1508.0 535.0L1501.0 542.0L1494.0 535.0Z" fill="#b60fd2" stroke="#4a4a4a" stroke-width="0.9"/><path d="M1494.0 535.0L1501.0 542.0L1494.0 549.0L1487.0 542.0Z" fill="#7612c8" stroke="#4a4a4a" stroke-width="0.9"/><path d="M1487.0 542.0L1494.0 549.0L1487.0 556.0L1480.0 549.0Z" fill="#d6d6d6" stroke="#4a4a4a" stroke-width="0.9"/><path d="M1480.0 549.0L1487.0 556.0L1480.0 563.0L1473.0 556.0Z" fill="#d6d6d6" stroke="#4a4a4a" stroke-width="0.9"/><path d="M1473.0 556.0L1480.0 563.0L1473.0 570.0L1466.0 563.0Z" fill="#d6d6d6" stroke="#4a4a4a" stroke-width="0.9"/><path d="M1466.0 563.0L1473.0 570.0L1466.0 577.0L1459.0 570.0Z" fill="#b60fd2" stroke="#4a4a4a" stroke-width="0.9"/><path d="M1459.0 570.0L1466.0 577.0L1459.0 584.0L1452.0 577.0Z" fill="#d6d6d6" stroke="#4a4a4a" stroke-width="0.9"/><path d="M1452.0 577.0L1459.0 584.0L1452.0 591.0L1445.0 584.0Z" fill="#b60fd2" stroke="#4a4a4a" stroke-width="0.9"/><path d="M1445.0 584.0L1452.0 591.0L1445.0 598.0L1438.0 591.0Z" fill="#b60fd2" stroke="#4a4a4a" stroke-width="0.9"/><path d="M1599.0 444.0L1606.0 451.0L1599.0 458.0L1592.0 451.0Z" fill="#b60fd2" stroke="#4a4a4a" stroke-width="0.9"/><path d="M1592.0 451.0L1599.0 458.0L1592.0 465.0L1585.0 458.0Z" fill="#b60fd2" stroke="#4a4a4a" stroke-width="0.9"/><path d="M1585.0 458.0L1592.0 465.0L1585.0 472.0L1578.0 465.0Z" fill="#d6d6d6" stroke="#4a4a4a" stroke-width="0.9"/><path d="M1578.0 465.0L1585.0 472.0L1578.0 479.0L1571.0 472.0Z" fill="#d6d6d6" stroke="#4a4a4a" stroke-width="0.9"/><path d="M1571.0 472.0L1578.0 479.0L1571.0 486.0L1564.0 479.0Z" fill="#d6d6d6" stroke="#4a4a4a" stroke-width="0.9"/><path d="M1564.0 479.0L1571.0 486.0L1564.0 493.0L1557.0 486.0Z" fill="#d6d6d6" stroke="#4a4a4a" stroke-width="0.9"/><path d="M1557.0 486.0L1564.0 493.0L1557.0 500.0L1550.0 493.0Z" fill="#d6d6d6" stroke="#4a4a4a" stroke-width="0.9"/><path d="M1550.0 493.0L1557.0 500.0L1550.0 507.0L1543.0 500.0Z" fill="#7612c8" stroke="#4a4a4a" stroke-width="0.9"/><path d="M1543.0 500.0L1550.0 507.0L1543.0 514.0L1536.0 507.0Z" fill="#d6d6d6" stroke="#4a4a4a" stroke-width="0.9"/><path d="M1536.0 507.0L1543.0 514.0L1536.0 521.0L1529.0 514.0Z" fill="#7612c8" stroke="#4a4a4a" stroke-width="0.9"/><path d="M1529.0 514.0L1536.0 521.0L1529.0 528.0L1522.0 521.0Z" fill="#d6d6d6" stroke="#4a4a4a" stroke-width="0.9"/><path d="M1522.0 521.0L1529.0 528.0L1522.0 535.0L1515.0 528.0Z" fill="#d6d6d6" stroke="#4a4a4a" stroke-width="0.9"/><path d="M1515.0 528.0L1522.0 535.0L1515.0 542.0L1508.0 535.0Z" fill="#d6d6d6" stroke="#4a4a4a" stroke-width="0.9"/><path d="M1508.0 535.0L1515.0 542.0L1508.0 549.0L1501.0 542.0Z" fill="#d6d6d6" stroke="#4a4a4a" stroke-width="0.9"/><path d="M1501.0 542.0L1508.0 549.0L1501.0 556.0L1494.0 549.0Z" fill="#b60fd2" stroke="#4a4a4a" stroke-width="0.9"/><path d="M1494.0 549.0L1501.0 556.0L1494.0 563.0L1487.0 556.0Z" fill="#b60fd2" stroke="#4a4a4a" stroke-width="0.9"/><path d="M1487.0 556.0L1494.0 563.0L1487.0 570.0L1480.0 563.0Z" fill="#b60fd2" stroke="#4a4a4a" stroke-width="0.9"/><path d="M1480.0 563.0L1487.0 570.0L1480.0 577.0L1473.0 570.0Z" fill="#d6d6d6" stroke="#4a4a4a" stroke-width="0.9"/><path d="M1473.0 570.0L1480.0 577.0L1473.0 584.0L1466.0 577.0Z" fill="#b60fd2" stroke="#4a4a4a" stroke-width="0.9"/><path d="M1466.0 577.0L1473.0 584.0L1466.0 591.0L1459.0 584.0Z" fill="#b60fd2" stroke="#4a4a4a" stroke-width="0.9"/><path d="M1459.0 584.0L1466.0 591.0L1459.0 598.0L1452.0 591.0Z" fill="#b60fd2" stroke="#4a4a4a" stroke-width="0.9"/><path d="M1452.0 591.0L1459.0 598.0L1452.0 605.0L1445.0 598.0Z" fill="#b60fd2" stroke="#4a4a4a" stroke-width="0.9"/><path d="M1445.0 598.0L1452.0 605.0L1445.0 612.0L1438.0 605.0Z" fill="#d6d6d6" stroke="#4a4a4a" stroke-width="0.9"/><path d="M1606.0 451.0L1613.0 458.0L1606.0 465.0L1599.0 458.0Z" fill="#d6d6d6" stroke="#4a4a4a" stroke-width="0.9"/><path d="M1599.0 458.0L1606.0 465.0L1599.0 472.0L1592.0 465.0Z" fill="#d6d6d6" stroke="#4a4a4a" stroke-width="0.9"/><path d="M1592.0 465.0L1599.0 472.0L1592.0 479.0L1585.0 472.0Z" fill="#b60fd2" stroke="#4a4a4a" stroke-width="0.9"/><path d="M1585.0 472.0L1592.0 479.0L1585.0 486.0L1578.0 479.0Z" fill="#b60fd2" stroke="#4a4a4a" stroke-width="0.9"/><path d="M1578.0 479.0L1585.0 486.0L1578.0 493.0L1571.0 486.0Z" fill="#d6d6d6" stroke="#4a4a4a" stroke-width="0.9"/><path d="M1571.0 486.0L1578.0 493.0L1571.0 500.0L1564.0 493.0Z" fill="#b60fd2" stroke="#4a4a4a" stroke-width="0.9"/><path d="M1564.0 493.0L1571.0 500.0L1564.0 507.0L1557.0 500.0Z" fill="#d6d6d6" stroke="#4a4a4a" stroke-width="0.9"/><path d="M1557.0 500.0L1564.0 507.0L1557.0 514.0L1550.0 507.0Z" fill="#d6d6d6" stroke="#4a4a4a" stroke-width="0.9"/><path d="M1550.0 507.0L1557.0 514.0L1550.0 521.0L1543.0 514.0Z" fill="#d6d6d6" stroke="#4a4a4a" stroke-width="0.9"/><path d="M1543.0 514.0L1550.0 521.0L1543.0 528.0L1536.0 521.0Z" fill="#7612c8" stroke="#4a4a4a" stroke-width="0.9"/><path d="M1536.0 521.0L1543.0 528.0L1536.0 535.0L1529.0 528.0Z" fill="#d6d6d6" stroke="#4a4a4a" stroke-width="0.9"/><path d="M1529.0 528.0L1536.0 535.0L1529.0 542.0L1522.0 535.0Z" fill="#d6d6d6" stroke="#4a4a4a" stroke-width="0.9"/><path d="M1522.0 535.0L1529.0 542.0L1522.0 549.0L1515.0 542.0Z" fill="#b60fd2" stroke="#4a4a4a" stroke-width="0.9"/><path d="M1515.0 542.0L1522.0 549.0L1515.0 556.0L1508.0 549.0Z" fill="#d6d6d6" stroke="#4a4a4a" stroke-width="0.9"/><path d="M1508.0 549.0L1515.0 556.0L1508.0 563.0L1501.0 556.0Z" fill="#b60fd2" stroke="#4a4a4a" stroke-width="0.9"/><path d="M1501.0 556.0L1508.0 563.0L1501.0 570.0L1494.0 563.0Z" fill="#d6d6d6" stroke="#4a4a4a" stroke-width="0.9"/><path d="M1494.0 563.0L1501.0 570.0L1494.0 577.0L1487.0 570.0Z" fill="#d6d6d6" stroke="#4a4a4a" stroke-width="0.9"/><path d="M1487.0 570.0L1494.0 577.0L1487.0 584.0L1480.0 577.0Z" fill="#d6d6d6" stroke="#4a4a4a" stroke-width="0.9"/><path d="M1480.0 577.0L1487.0 584.0L1480.0 591.0L1473.0 584.0Z" fill="#7612c8" stroke="#4a4a4a" stroke-width="0.9"/><path d="M1473.0 584.0L1480.0 591.0L1473.0 598.0L1466.0 591.0Z" fill="#7612c8" stroke="#4a4a4a" stroke-width="0.9"/><path d="M1466.0 591.0L1473.0 598.0L1466.0 605.0L1459.0 598.0Z" fill="#b60fd2" stroke="#4a4a4a" stroke-width="0.9"/><path d="M1459.0 598.0L1466.0 605.0L1459.0 612.0L1452.0 605.0Z" fill="#7612c8" stroke="#4a4a4a" stroke-width="0.9"/><path d="M1452.0 605.0L1459.0 612.0L1452.0 619.0L1445.0 612.0Z" fill="#b60fd2" stroke="#4a4a4a" stroke-width="0.9"/><path d="M1445.0 612.0L1452.0 619.0L1445.0 626.0L1438.0 619.0Z" fill="#b60fd2" stroke="#4a4a4a" stroke-width="0.9"/><path d="M1613.0 458.0L1620.0 465.0L1613.0 472.0L1606.0 465.0Z" fill="#b60fd2" stroke="#4a4a4a" stroke-width="0.9"/><path d="M1606.0 465.0L1613.0 472.0L1606.0 479.0L1599.0 472.0Z" fill="#b60fd2" stroke="#4a4a4a" stroke-width="0.9"/><path d="M1599.0 472.0L1606.0 479.0L1599.0 486.0L1592.0 479.0Z" fill="#d6d6d6" stroke="#4a4a4a" stroke-width="0.9"/><path d="M1592.0 479.0L1599.0 486.0L1592.0 493.0L1585.0 486.0Z" fill="#d6d6d6" stroke="#4a4a4a" stroke-width="0.9"/><path d="M1585.0 486.0L1592.0 493.0L1585.0 500.0L1578.0 493.0Z" fill="#d6d6d6" stroke="#4a4a4a" stroke-width="0.9"/><path d="M1578.0 493.0L1585.0 500.0L1578.0 507.0L1571.0 500.0Z" fill="#d6d6d6" stroke="#4a4a4a" stroke-width="0.9"/><path d="M1571.0 500.0L1578.0 507.0L1571.0 514.0L1564.0 507.0Z" fill="#d6d6d6" stroke="#4a4a4a" stroke-width="0.9"/><path d="M1564.0 507.0L1571.0 514.0L1564.0 521.0L1557.0 514.0Z" fill="#d6d6d6" stroke="#4a4a4a" stroke-width="0.9"/><path d="M1557.0 514.0L1564.0 521.0L1557.0 528.0L1550.0 521.0Z" fill="#d6d6d6" stroke="#4a4a4a" stroke-width="0.9"/><path d="M1550.0 521.0L1557.0 528.0L1550.0 535.0L1543.0 528.0Z" fill="#b60fd2" stroke="#4a4a4a" stroke-width="0.9"/><path d="M1543.0 528.0L1550.0 535.0L1543.0 542.0L1536.0 535.0Z" fill="#b60fd2" stroke="#4a4a4a" stroke-width="0.9"/><path d="M1536.0 535.0L1543.0 542.0L1536.0 549.0L1529.0 542.0Z" fill="#d6d6d6" stroke="#4a4a4a" stroke-width="0.9"/><path d="M1529.0 542.0L1536.0 549.0L1529.0 556.0L1522.0 549.0Z" fill="#b60fd2" stroke="#4a4a4a" stroke-width="0.9"/><path d="M1522.0 549.0L1529.0 556.0L1522.0 563.0L1515.0 556.0Z" fill="#d6d6d6" stroke="#4a4a4a" stroke-width="0.9"/><path d="M1515.0 556.0L1522.0 563.0L1515.0 570.0L1508.0 563.0Z" fill="#7612c8" stroke="#4a4a4a" stroke-width="0.9"/><path d="M1508.0 563.0L1515.0 570.0L1508.0 577.0L1501.0 570.0Z" fill="#b60fd2" stroke="#4a4a4a" stroke-width="0.9"/><path d="M1501.0 570.0L1508.0 577.0L1501.0 584.0L1494.0 577.0Z" fill="#d6d6d6" stroke="#4a4a4a" stroke-width="0.9"/><path d="M1494.0 577.0L1501.0 584.0L1494.0 591.0L1487.0 584.0Z" fill="#b60fd2" stroke="#4a4a4a" stroke-width="0.9"/><path d="M1487.0 584.0L1494.0 591.0L1487.0 598.0L1480.0 591.0Z" fill="#d6d6d6" stroke="#4a4a4a" stroke-width="0.9"/><path d="M1480.0 591.0L1487.0 598.0L1480.0 605.0L1473.0 598.0Z" fill="#d6d6d6" stroke="#4a4a4a" stroke-width="0.9"/><path d="M1473.0 598.0L1480.0 605.0L1473.0 612.0L1466.0 605.0Z" fill="#7612c8" stroke="#4a4a4a" stroke-width="0.9"/><path d="M1466.0 605.0L1473.0 612.0L1466.0 619.0L1459.0 612.0Z" fill="#b60fd2" stroke="#4a4a4a" stroke-width="0.9"/><path d="M1459.0 612.0L1466.0 619.0L1459.0 626.0L1452.0 619.0Z" fill="#b60fd2" stroke="#4a4a4a" stroke-width="0.9"/><path d="M1452.0 619.0L1459.0 626.0L1452.0 633.0L1445.0 626.0Z" fill="#b60fd2" stroke="#4a4a4a" stroke-width="0.9"/><path d="M1445.0 626.0L1452.0 633.0L1445.0 640.0L1438.0 633.0Z" fill="#b60fd2" stroke="#4a4a4a" stroke-width="0.9"/><path d="M1620.0 465.0L1627.0 472.0L1620.0 479.0L1613.0 472.0Z" fill="#d6d6d6" stroke="#4a4a4a" stroke-width="0.9"/><path d="M1613.0 472.0L1620.0 479.0L1613.0 486.0L1606.0 479.0Z" fill="#d6d6d6" stroke="#4a4a4a" stroke-width="0.9"/><path d="M1606.0 479.0L1613.0 486.0L1606.0 493.0L1599.0 486.0Z" fill="#7612c8" stroke="#4a4a4a" stroke-width="0.9"/><path d="M1599.0 486.0L1606.0 493.0L1599.0 500.0L1592.0 493.0Z" fill="#d6d6d6" stroke="#4a4a4a" stroke-width="0.9"/><path d="M1592.0 493.0L1599.0 500.0L1592.0 507.0L1585.0 500.0Z" fill="#d6d6d6" stroke="#4a4a4a" stroke-width="0.9"/><path d="M1585.0 500.0L1592.0 507.0L1585.0 514.0L1578.0 507.0Z" fill="#d6d6d6" stroke="#4a4a4a" stroke-width="0.9"/><path d="M1578.0 507.0L1585.0 514.0L1578.0 521.0L1571.0 514.0Z" fill="#d6d6d6" stroke="#4a4a4a" stroke-width="0.9"/><path d="M1571.0 514.0L1578.0 521.0L1571.0 528.0L1564.0 521.0Z" fill="#d6d6d6" stroke="#4a4a4a" stroke-width="0.9"/><path d="M1564.0 521.0L1571.0 528.0L1564.0 535.0L1557.0 528.0Z" fill="#d6d6d6" stroke="#4a4a4a" stroke-width="0.9"/><path d="M1557.0 528.0L1564.0 535.0L1557.0 542.0L1550.0 535.0Z" fill="#b60fd2" stroke="#4a4a4a" stroke-width="0.9"/><path d="M1550.0 535.0L1557.0 542.0L1550.0 549.0L1543.0 542.0Z" fill="#d6d6d6" stroke="#4a4a4a" stroke-width="0.9"/><path d="M1543.0 542.0L1550.0 549.0L1543.0 556.0L1536.0 549.0Z" fill="#d6d6d6" stroke="#4a4a4a" stroke-width="0.9"/><path d="M1536.0 549.0L1543.0 556.0L1536.0 563.0L1529.0 556.0Z" fill="#d6d6d6" stroke="#4a4a4a" stroke-width="0.9"/><path d="M1529.0 556.0L1536.0 563.0L1529.0 570.0L1522.0 563.0Z" fill="#d6d6d6" stroke="#4a4a4a" stroke-width="0.9"/><path d="M1522.0 563.0L1529.0 570.0L1522.0 577.0L1515.0 570.0Z" fill="#7612c8" stroke="#4a4a4a" stroke-width="0.9"/><path d="M1515.0 570.0L1522.0 577.0L1515.0 584.0L1508.0 577.0Z" fill="#b60fd2" stroke="#4a4a4a" stroke-width="0.9"/><path d="M1508.0 577.0L1515.0 584.0L1508.0 591.0L1501.0 584.0Z" fill="#b60fd2" stroke="#4a4a4a" stroke-width="0.9"/><path d="M1501.0 584.0L1508.0 591.0L1501.0 598.0L1494.0 591.0Z" fill="#b60fd2" stroke="#4a4a4a" stroke-width="0.9"/><path d="M1494.0 591.0L1501.0 598.0L1494.0 605.0L1487.0 598.0Z" fill="#b60fd2" stroke="#4a4a4a" stroke-width="0.9"/><path d="M1487.0 598.0L1494.0 605.0L1487.0 612.0L1480.0 605.0Z" fill="#b60fd2" stroke="#4a4a4a" stroke-width="0.9"/><path d="M1480.0 605.0L1487.0 612.0L1480.0 619.0L1473.0 612.0Z" fill="#b60fd2" stroke="#4a4a4a" stroke-width="0.9"/><path d="M1473.0 612.0L1480.0 619.0L1473.0 626.0L1466.0 619.0Z" fill="#b60fd2" stroke="#4a4a4a" stroke-width="0.9"/><path d="M1466.0 619.0L1473.0 626.0L1466.0 633.0L1459.0 626.0Z" fill="#b60fd2" stroke="#4a4a4a" stroke-width="0.9"/><path d="M1459.0 626.0L1466.0 633.0L1459.0 640.0L1452.0 633.0Z" fill="#b60fd2" stroke="#4a4a4a" stroke-width="0.9"/><path d="M1452.0 633.0L1459.0 640.0L1452.0 647.0L1445.0 640.0Z" fill="#b60fd2" stroke="#4a4a4a" stroke-width="0.9"/><path d="M1445.0 640.0L1452.0 647.0L1445.0 654.0L1438.0 647.0Z" fill="#7612c8" stroke="#4a4a4a" stroke-width="0.9"/><path d="M1627.0 472.0L1634.0 479.0L1627.0 486.0L1620.0 479.0Z" fill="#d6d6d6" stroke="#4a4a4a" stroke-width="0.9"/><path d="M1620.0 479.0L1627.0 486.0L1620.0 493.0L1613.0 486.0Z" fill="#d6d6d6" stroke="#4a4a4a" stroke-width="0.9"/><path d="M1613.0 486.0L1620.0 493.0L1613.0 500.0L1606.0 493.0Z" fill="#d6d6d6" stroke="#4a4a4a" stroke-width="0.9"/><path d="M1606.0 493.0L1613.0 500.0L1606.0 507.0L1599.0 500.0Z" fill="#d6d6d6" stroke="#4a4a4a" stroke-width="0.9"/><path d="M1599.0 500.0L1606.0 507.0L1599.0 514.0L1592.0 507.0Z" fill="#d6d6d6" stroke="#4a4a4a" stroke-width="0.9"/><path d="M1592.0 507.0L1599.0 514.0L1592.0 521.0L1585.0 514.0Z" fill="#d6d6d6" stroke="#4a4a4a" stroke-width="0.9"/><path d="M1585.0 514.0L1592.0 521.0L1585.0 528.0L1578.0 521.0Z" fill="#7612c8" stroke="#4a4a4a" stroke-width="0.9"/><path d="M1578.0 521.0L1585.0 528.0L1578.0 535.0L1571.0 528.0Z" fill="#d6d6d6" stroke="#4a4a4a" stroke-width="0.9"/><path d="M1571.0 528.0L1578.0 535.0L1571.0 542.0L1564.0 535.0Z" fill="#d6d6d6" stroke="#4a4a4a" stroke-width="0.9"/><path d="M1564.0 535.0L1571.0 542.0L1564.0 549.0L1557.0 542.0Z" fill="#d6d6d6" stroke="#4a4a4a" stroke-width="0.9"/><path d="M1557.0 542.0L1564.0 549.0L1557.0 556.0L1550.0 549.0Z" fill="#d6d6d6" stroke="#4a4a4a" stroke-width="0.9"/><path d="M1550.0 549.0L1557.0 556.0L1550.0 563.0L1543.0 556.0Z" fill="#b60fd2" stroke="#4a4a4a" stroke-width="0.9"/><path d="M1543.0 556.0L1550.0 563.0L1543.0 570.0L1536.0 563.0Z" fill="#d6d6d6" stroke="#4a4a4a" stroke-width="0.9"/><path d="M1536.0 563.0L1543.0 570.0L1536.0 577.0L1529.0 570.0Z" fill="#d6d6d6" stroke="#4a4a4a" stroke-width="0.9"/><path d="M1529.0 570.0L1536.0 577.0L1529.0 584.0L1522.0 577.0Z" fill="#d6d6d6" stroke="#4a4a4a" stroke-width="0.9"/><path d="M1522.0 577.0L1529.0 584.0L1522.0 591.0L1515.0 584.0Z" fill="#d6d6d6" stroke="#4a4a4a" stroke-width="0.9"/><path d="M1515.0 584.0L1522.0 591.0L1515.0 598.0L1508.0 591.0Z" fill="#d6d6d6" stroke="#4a4a4a" stroke-width="0.9"/><path d="M1508.0 591.0L1515.0 598.0L1508.0 605.0L1501.0 598.0Z" fill="#d6d6d6" stroke="#4a4a4a" stroke-width="0.9"/><path d="M1501.0 598.0L1508.0 605.0L1501.0 612.0L1494.0 605.0Z" fill="#d6d6d6" stroke="#4a4a4a" stroke-width="0.9"/><path d="M1494.0 605.0L1501.0 612.0L1494.0 619.0L1487.0 612.0Z" fill="#d6d6d6" stroke="#4a4a4a" stroke-width="0.9"/><path d="M1487.0 612.0L1494.0 619.0L1487.0 626.0L1480.0 619.0Z" fill="#b60fd2" stroke="#4a4a4a" stroke-width="0.9"/><path d="M1480.0 619.0L1487.0 626.0L1480.0 633.0L1473.0 626.0Z" fill="#b60fd2" stroke="#4a4a4a" stroke-width="0.9"/><path d="M1473.0 626.0L1480.0 633.0L1473.0 640.0L1466.0 633.0Z" fill="#7612c8" stroke="#4a4a4a" stroke-width="0.9"/><path d="M1466.0 633.0L1473.0 640.0L1466.0 647.0L1459.0 640.0Z" fill="#b60fd2" stroke="#4a4a4a" stroke-width="0.9"/><path d="M1459.0 640.0L1466.0 647.0L1459.0 654.0L1452.0 647.0Z" fill="#b60fd2" stroke="#4a4a4a" stroke-width="0.9"/><path d="M1452.0 647.0L1459.0 654.0L1452.0 661.0L1445.0 654.0Z" fill="#b60fd2" stroke="#4a4a4a" stroke-width="0.9"/><path d="M1445.0 654.0L1452.0 661.0L1445.0 668.0L1438.0 661.0Z" fill="#b60fd2" stroke="#4a4a4a" stroke-width="0.9"/><path d="M1634.0 479.0L1641.0 486.0L1634.0 493.0L1627.0 486.0Z" fill="#d6d6d6" stroke="#4a4a4a" stroke-width="0.9"/><path d="M1627.0 486.0L1634.0 493.0L1627.0 500.0L1620.0 493.0Z" fill="#d6d6d6" stroke="#4a4a4a" stroke-width="0.9"/><path d="M1620.0 493.0L1627.0 500.0L1620.0 507.0L1613.0 500.0Z" fill="#d6d6d6" stroke="#4a4a4a" stroke-width="0.9"/><path d="M1613.0 500.0L1620.0 507.0L1613.0 514.0L1606.0 507.0Z" fill="#b60fd2" stroke="#4a4a4a" stroke-width="0.9"/><path d="M1606.0 507.0L1613.0 514.0L1606.0 521.0L1599.0 514.0Z" fill="#d6d6d6" stroke="#4a4a4a" stroke-width="0.9"/><path d="M1599.0 514.0L1606.0 521.0L1599.0 528.0L1592.0 521.0Z" fill="#b60fd2" stroke="#4a4a4a" stroke-width="0.9"/><path d="M1592.0 521.0L1599.0 528.0L1592.0 535.0L1585.0 528.0Z" fill="#d6d6d6" stroke="#4a4a4a" stroke-width="0.9"/><path d="M1585.0 528.0L1592.0 535.0L1585.0 542.0L1578.0 535.0Z" fill="#d6d6d6" stroke="#4a4a4a" stroke-width="0.9"/><path d="M1578.0 535.0L1585.0 542.0L1578.0 549.0L1571.0 542.0Z" fill="#d6d6d6" stroke="#4a4a4a" stroke-width="0.9"/><path d="M1571.0 542.0L1578.0 549.0L1571.0 556.0L1564.0 549.0Z" fill="#d6d6d6" stroke="#4a4a4a" stroke-width="0.9"/><path d="M1564.0 549.0L1571.0 556.0L1564.0 563.0L1557.0 556.0Z" fill="#d6d6d6" stroke="#4a4a4a" stroke-width="0.9"/><path d="M1557.0 556.0L1564.0 563.0L1557.0 570.0L1550.0 563.0Z" fill="#d6d6d6" stroke="#4a4a4a" stroke-width="0.9"/><path d="M1550.0 563.0L1557.0 570.0L1550.0 577.0L1543.0 570.0Z" fill="#d6d6d6" stroke="#4a4a4a" stroke-width="0.9"/><path d="M1543.0 570.0L1550.0 577.0L1543.0 584.0L1536.0 577.0Z" fill="#d6d6d6" stroke="#4a4a4a" stroke-width="0.9"/><path d="M1536.0 577.0L1543.0 584.0L1536.0 591.0L1529.0 584.0Z" fill="#d6d6d6" stroke="#4a4a4a" stroke-width="0.9"/><path d="M1529.0 584.0L1536.0 591.0L1529.0 598.0L1522.0 591.0Z" fill="#d6d6d6" stroke="#4a4a4a" stroke-width="0.9"/><path d="M1522.0 591.0L1529.0 598.0L1522.0 605.0L1515.0 598.0Z" fill="#d6d6d6" stroke="#4a4a4a" stroke-width="0.9"/><path d="M1515.0 598.0L1522.0 605.0L1515.0 612.0L1508.0 605.0Z" fill="#b60fd2" stroke="#4a4a4a" stroke-width="0.9"/><path d="M1508.0 605.0L1515.0 612.0L1508.0 619.0L1501.0 612.0Z" fill="#b60fd2" stroke="#4a4a4a" stroke-width="0.9"/><path d="M1501.0 612.0L1508.0 619.0L1501.0 626.0L1494.0 619.0Z" fill="#b60fd2" stroke="#4a4a4a" stroke-width="0.9"/><path d="M1494.0 619.0L1501.0 626.0L1494.0 633.0L1487.0 626.0Z" fill="#b60fd2" stroke="#4a4a4a" stroke-width="0.9"/><path d="M1487.0 626.0L1494.0 633.0L1487.0 640.0L1480.0 633.0Z" fill="#b60fd2" stroke="#4a4a4a" stroke-width="0.9"/><path d="M1480.0 633.0L1487.0 640.0L1480.0 647.0L1473.0 640.0Z" fill="#b60fd2" stroke="#4a4a4a" stroke-width="0.9"/><path d="M1473.0 640.0L1480.0 647.0L1473.0 654.0L1466.0 647.0Z" fill="#b60fd2" stroke="#4a4a4a" stroke-width="0.9"/><path d="M1466.0 647.0L1473.0 654.0L1466.0 661.0L1459.0 654.0Z" fill="#b60fd2" stroke="#4a4a4a" stroke-width="0.9"/><path d="M1459.0 654.0L1466.0 661.0L1459.0 668.0L1452.0 661.0Z" fill="#7612c8" stroke="#4a4a4a" stroke-width="0.9"/><path d="M1452.0 661.0L1459.0 668.0L1452.0 675.0L1445.0 668.0Z" fill="#7612c8" stroke="#4a4a4a" stroke-width="0.9"/><path d="M1445.0 668.0L1452.0 675.0L1445.0 682.0L1438.0 675.0Z" fill="#b60fd2" stroke="#4a4a4a" stroke-width="0.9"/><path d="M1634.0 493.0L1641.0 500.0L1634.0 507.0L1627.0 500.0Z" fill="#d6d6d6" stroke="#4a4a4a" stroke-width="0.9"/><path d="M1627.0 500.0L1634.0 507.0L1627.0 514.0L1620.0 507.0Z" fill="#d6d6d6" stroke="#4a4a4a" stroke-width="0.9"/><path d="M1620.0 507.0L1627.0 514.0L1620.0 521.0L1613.0 514.0Z" fill="#d6d6d6" stroke="#4a4a4a" stroke-width="0.9"/><path d="M1613.0 514.0L1620.0 521.0L1613.0 528.0L1606.0 521.0Z" fill="#d6d6d6" stroke="#4a4a4a" stroke-width="0.9"/><path d="M1606.0 521.0L1613.0 528.0L1606.0 535.0L1599.0 528.0Z" fill="#d6d6d6" stroke="#4a4a4a" stroke-width="0.9"/><path d="M1599.0 528.0L1606.0 535.0L1599.0 542.0L1592.0 535.0Z" fill="#d6d6d6" stroke="#4a4a4a" stroke-width="0.9"/><path d="M1592.0 535.0L1599.0 542.0L1592.0 549.0L1585.0 542.0Z" fill="#d6d6d6" stroke="#4a4a4a" stroke-width="0.9"/><path d="M1585.0 542.0L1592.0 549.0L1585.0 556.0L1578.0 549.0Z" fill="#d6d6d6" stroke="#4a4a4a" stroke-width="0.9"/><path d="M1578.0 549.0L1585.0 556.0L1578.0 563.0L1571.0 556.0Z" fill="#d6d6d6" stroke="#4a4a4a" stroke-width="0.9"/><path d="M1571.0 556.0L1578.0 563.0L1571.0 570.0L1564.0 563.0Z" fill="#b60fd2" stroke="#4a4a4a" stroke-width="0.9"/><path d="M1564.0 563.0L1571.0 570.0L1564.0 577.0L1557.0 570.0Z" fill="#d6d6d6" stroke="#4a4a4a" stroke-width="0.9"/><path d="M1557.0 570.0L1564.0 577.0L1557.0 584.0L1550.0 577.0Z" fill="#7612c8" stroke="#4a4a4a" stroke-width="0.9"/><path d="M1550.0 577.0L1557.0 584.0L1550.0 591.0L1543.0 584.0Z" fill="#d6d6d6" stroke="#4a4a4a" stroke-width="0.9"/><path d="M1543.0 584.0L1550.0 591.0L1543.0 598.0L1536.0 591.0Z" fill="#d6d6d6" stroke="#4a4a4a" stroke-width="0.9"/><path d="M1536.0 591.0L1543.0 598.0L1536.0 605.0L1529.0 598.0Z" fill="#d6d6d6" stroke="#4a4a4a" stroke-width="0.9"/><path d="M1529.0 598.0L1536.0 605.0L1529.0 612.0L1522.0 605.0Z" fill="#7612c8" stroke="#4a4a4a" stroke-width="0.9"/><path d="M1522.0 605.0L1529.0 612.0L1522.0 619.0L1515.0 612.0Z" fill="#d6d6d6" stroke="#4a4a4a" stroke-width="0.9"/><path d="M1515.0 612.0L1522.0 619.0L1515.0 626.0L1508.0 619.0Z" fill="#b60fd2" stroke="#4a4a4a" stroke-width="0.9"/><path d="M1508.0 619.0L1515.0 626.0L1508.0 633.0L1501.0 626.0Z" fill="#b60fd2" stroke="#4a4a4a" stroke-width="0.9"/><path d="M1501.0 626.0L1508.0 633.0L1501.0 640.0L1494.0 633.0Z" fill="#b60fd2" stroke="#4a4a4a" stroke-width="0.9"/><path d="M1494.0 633.0L1501.0 640.0L1494.0 647.0L1487.0 640.0Z" fill="#b60fd2" stroke="#4a4a4a" stroke-width="0.9"/><path d="M1487.0 640.0L1494.0 647.0L1487.0 654.0L1480.0 647.0Z" fill="#d6d6d6" stroke="#4a4a4a" stroke-width="0.9"/><path d="M1480.0 647.0L1487.0 654.0L1480.0 661.0L1473.0 654.0Z" fill="#b60fd2" stroke="#4a4a4a" stroke-width="0.9"/><path d="M1473.0 654.0L1480.0 661.0L1473.0 668.0L1466.0 661.0Z" fill="#d6d6d6" stroke="#4a4a4a" stroke-width="0.9"/><path d="M1466.0 661.0L1473.0 668.0L1466.0 675.0L1459.0 668.0Z" fill="#7612c8" stroke="#4a4a4a" stroke-width="0.9"/><path d="M1459.0 668.0L1466.0 675.0L1459.0 682.0L1452.0 675.0Z" fill="#7612c8" stroke="#4a4a4a" stroke-width="0.9"/><path d="M1452.0 675.0L1459.0 682.0L1452.0 689.0L1445.0 682.0Z" fill="#b60fd2" stroke="#4a4a4a" stroke-width="0.9"/><path d="M1445.0 682.0L1452.0 689.0L1445.0 696.0L1438.0 689.0Z" fill="#7612c8" stroke="#4a4a4a" stroke-width="0.9"/><path d="M1634.0 507.0L1641.0 514.0L1634.0 521.0L1627.0 514.0Z" fill="#d6d6d6" stroke="#4a4a4a" stroke-width="0.9"/><path d="M1627.0 514.0L1634.0 521.0L1627.0 528.0L1620.0 521.0Z" fill="#d6d6d6" stroke="#4a4a4a" stroke-width="0.9"/><path d="M1620.0 521.0L1627.0 528.0L1620.0 535.0L1613.0 528.0Z" fill="#d6d6d6" stroke="#4a4a4a" stroke-width="0.9"/><path d="M1613.0 528.0L1620.0 535.0L1613.0 542.0L1606.0 535.0Z" fill="#d6d6d6" stroke="#4a4a4a" stroke-width="0.9"/><path d="M1606.0 535.0L1613.0 542.0L1606.0 549.0L1599.0 542.0Z" fill="#b60fd2" stroke="#4a4a4a" stroke-width="0.9"/><path d="M1599.0 542.0L1606.0 549.0L1599.0 556.0L1592.0 549.0Z" fill="#d6d6d6" stroke="#4a4a4a" stroke-width="0.9"/><path d="M1592.0 549.0L1599.0 556.0L1592.0 563.0L1585.0 556.0Z" fill="#d6d6d6" stroke="#4a4a4a" stroke-width="0.9"/><path d="M1585.0 556.0L1592.0 563.0L1585.0 570.0L1578.0 563.0Z" fill="#d6d6d6" stroke="#4a4a4a" stroke-width="0.9"/><path d="M1578.0 563.0L1585.0 570.0L1578.0 577.0L1571.0 570.0Z" fill="#d6d6d6" stroke="#4a4a4a" stroke-width="0.9"/><path d="M1571.0 570.0L1578.0 577.0L1571.0 584.0L1564.0 577.0Z" fill="#d6d6d6" stroke="#4a4a4a" stroke-width="0.9"/><path d="M1564.0 577.0L1571.0 584.0L1564.0 591.0L1557.0 584.0Z" fill="#d6d6d6" stroke="#4a4a4a" stroke-width="0.9"/><path d="M1557.0 584.0L1564.0 591.0L1557.0 598.0L1550.0 591.0Z" fill="#b60fd2" stroke="#4a4a4a" stroke-width="0.9"/><path d="M1550.0 591.0L1557.0 598.0L1550.0 605.0L1543.0 598.0Z" fill="#d6d6d6" stroke="#4a4a4a" stroke-width="0.9"/><path d="M1543.0 598.0L1550.0 605.0L1543.0 612.0L1536.0 605.0Z" fill="#d6d6d6" stroke="#4a4a4a" stroke-width="0.9"/><path d="M1536.0 605.0L1543.0 612.0L1536.0 619.0L1529.0 612.0Z" fill="#d6d6d6" stroke="#4a4a4a" stroke-width="0.9"/><path d="M1529.0 612.0L1536.0 619.0L1529.0 626.0L1522.0 619.0Z" fill="#d6d6d6" stroke="#4a4a4a" stroke-width="0.9"/><path d="M1522.0 619.0L1529.0 626.0L1522.0 633.0L1515.0 626.0Z" fill="#d6d6d6" stroke="#4a4a4a" stroke-width="0.9"/><path d="M1515.0 626.0L1522.0 633.0L1515.0 640.0L1508.0 633.0Z" fill="#d6d6d6" stroke="#4a4a4a" stroke-width="0.9"/><path d="M1508.0 633.0L1515.0 640.0L1508.0 647.0L1501.0 640.0Z" fill="#d6d6d6" stroke="#4a4a4a" stroke-width="0.9"/><path d="M1501.0 640.0L1508.0 647.0L1501.0 654.0L1494.0 647.0Z" fill="#d6d6d6" stroke="#4a4a4a" stroke-width="0.9"/><path d="M1494.0 647.0L1501.0 654.0L1494.0 661.0L1487.0 654.0Z" fill="#b60fd2" stroke="#4a4a4a" stroke-width="0.9"/><path d="M1487.0 654.0L1494.0 661.0L1487.0 668.0L1480.0 661.0Z" fill="#b60fd2" stroke="#4a4a4a" stroke-width="0.9"/><path d="M1480.0 661.0L1487.0 668.0L1480.0 675.0L1473.0 668.0Z" fill="#b60fd2" stroke="#4a4a4a" stroke-width="0.9"/><path d="M1473.0 668.0L1480.0 675.0L1473.0 682.0L1466.0 675.0Z" fill="#7612c8" stroke="#4a4a4a" stroke-width="0.9"/><path d="M1466.0 675.0L1473.0 682.0L1466.0 689.0L1459.0 682.0Z" fill="#b60fd2" stroke="#4a4a4a" stroke-width="0.9"/><path d="M1459.0 682.0L1466.0 689.0L1459.0 696.0L1452.0 689.0Z" fill="#b60fd2" stroke="#4a4a4a" stroke-width="0.9"/><path d="M1452.0 689.0L1459.0 696.0L1452.0 703.0L1445.0 696.0Z" fill="#7612c8" stroke="#4a4a4a" stroke-width="0.9"/><path d="M1445.0 696.0L1452.0 703.0L1445.0 710.0L1438.0 703.0Z" fill="#b60fd2" stroke="#4a4a4a" stroke-width="0.9"/><path d="M1634.0 521.0L1641.0 528.0L1634.0 535.0L1627.0 528.0Z" fill="#d6d6d6" stroke="#4a4a4a" stroke-width="0.9"/><path d="M1627.0 528.0L1634.0 535.0L1627.0 542.0L1620.0 535.0Z" fill="#d6d6d6" stroke="#4a4a4a" stroke-width="0.9"/><path d="M1620.0 535.0L1627.0 542.0L1620.0 549.0L1613.0 542.0Z" fill="#d6d6d6" stroke="#4a4a4a" stroke-width="0.9"/><path d="M1613.0 542.0L1620.0 549.0L1613.0 556.0L1606.0 549.0Z" fill="#d6d6d6" stroke="#4a4a4a" stroke-width="0.9"/><path d="M1606.0 549.0L1613.0 556.0L1606.0 563.0L1599.0 556.0Z" fill="#d6d6d6" stroke="#4a4a4a" stroke-width="0.9"/><path d="M1599.0 556.0L1606.0 563.0L1599.0 570.0L1592.0 563.0Z" fill="#d6d6d6" stroke="#4a4a4a" stroke-width="0.9"/><path d="M1592.0 563.0L1599.0 570.0L1592.0 577.0L1585.0 570.0Z" fill="#d6d6d6" stroke="#4a4a4a" stroke-width="0.9"/><path d="M1585.0 570.0L1592.0 577.0L1585.0 584.0L1578.0 577.0Z" fill="#d6d6d6" stroke="#4a4a4a" stroke-width="0.9"/><path d="M1578.0 577.0L1585.0 584.0L1578.0 591.0L1571.0 584.0Z" fill="#d6d6d6" stroke="#4a4a4a" stroke-width="0.9"/><path d="M1571.0 584.0L1578.0 591.0L1571.0 598.0L1564.0 591.0Z" fill="#d6d6d6" stroke="#4a4a4a" stroke-width="0.9"/><path d="M1564.0 591.0L1571.0 598.0L1564.0 605.0L1557.0 598.0Z" fill="#d6d6d6" stroke="#4a4a4a" stroke-width="0.9"/><path d="M1557.0 598.0L1564.0 605.0L1557.0 612.0L1550.0 605.0Z" fill="#d6d6d6" stroke="#4a4a4a" stroke-width="0.9"/><path d="M1550.0 605.0L1557.0 612.0L1550.0 619.0L1543.0 612.0Z" fill="#b60fd2" stroke="#4a4a4a" stroke-width="0.9"/><path d="M1543.0 612.0L1550.0 619.0L1543.0 626.0L1536.0 619.0Z" fill="#b60fd2" stroke="#4a4a4a" stroke-width="0.9"/><path d="M1536.0 619.0L1543.0 626.0L1536.0 633.0L1529.0 626.0Z" fill="#b60fd2" stroke="#4a4a4a" stroke-width="0.9"/><path d="M1529.0 626.0L1536.0 633.0L1529.0 640.0L1522.0 633.0Z" fill="#b60fd2" stroke="#4a4a4a" stroke-width="0.9"/><path d="M1522.0 633.0L1529.0 640.0L1522.0 647.0L1515.0 640.0Z" fill="#d6d6d6" stroke="#4a4a4a" stroke-width="0.9"/><path d="M1515.0 640.0L1522.0 647.0L1515.0 654.0L1508.0 647.0Z" fill="#d6d6d6" stroke="#4a4a4a" stroke-width="0.9"/><path d="M1508.0 647.0L1515.0 654.0L1508.0 661.0L1501.0 654.0Z" fill="#b60fd2" stroke="#4a4a4a" stroke-width="0.9"/><path d="M1501.0 654.0L1508.0 661.0L1501.0 668.0L1494.0 661.0Z" fill="#b60fd2" stroke="#4a4a4a" stroke-width="0.9"/><path d="M1494.0 661.0L1501.0 668.0L1494.0 675.0L1487.0 668.0Z" fill="#b60fd2" stroke="#4a4a4a" stroke-width="0.9"/><path d="M1487.0 668.0L1494.0 675.0L1487.0 682.0L1480.0 675.0Z" fill="#7612c8" stroke="#4a4a4a" stroke-width="0.9"/><path d="M1480.0 675.0L1487.0 682.0L1480.0 689.0L1473.0 682.0Z" fill="#b60fd2" stroke="#4a4a4a" stroke-width="0.9"/><path d="M1473.0 682.0L1480.0 689.0L1473.0 696.0L1466.0 689.0Z" fill="#7612c8" stroke="#4a4a4a" stroke-width="0.9"/><path d="M1466.0 689.0L1473.0 696.0L1466.0 703.0L1459.0 696.0Z" fill="#b60fd2" stroke="#4a4a4a" stroke-width="0.9"/><path d="M1459.0 696.0L1466.0 703.0L1459.0 710.0L1452.0 703.0Z" fill="#b60fd2" stroke="#4a4a4a" stroke-width="0.9"/><path d="M1452.0 703.0L1459.0 710.0L1452.0 717.0L1445.0 710.0Z" fill="#7612c8" stroke="#4a4a4a" stroke-width="0.9"/><path d="M1445.0 710.0L1452.0 717.0L1445.0 724.0L1438.0 717.0Z" fill="#7612c8" stroke="#4a4a4a" stroke-width="0.9"/><path d="M1634.0 535.0L1641.0 542.0L1634.0 549.0L1627.0 542.0Z" fill="#b60fd2" stroke="#4a4a4a" stroke-width="0.9"/><path d="M1627.0 542.0L1634.0 549.0L1627.0 556.0L1620.0 549.0Z" fill="#d6d6d6" stroke="#4a4a4a" stroke-width="0.9"/><path d="M1620.0 549.0L1627.0 556.0L1620.0 563.0L1613.0 556.0Z" fill="#d6d6d6" stroke="#4a4a4a" stroke-width="0.9"/><path d="M1613.0 556.0L1620.0 563.0L1613.0 570.0L1606.0 563.0Z" fill="#d6d6d6" stroke="#4a4a4a" stroke-width="0.9"/><path d="M1606.0 563.0L1613.0 570.0L1606.0 577.0L1599.0 570.0Z" fill="#d6d6d6" stroke="#4a4a4a" stroke-width="0.9"/><path d="M1599.0 570.0L1606.0 577.0L1599.0 584.0L1592.0 577.0Z" fill="#b60fd2" stroke="#4a4a4a" stroke-width="0.9"/><path d="M1592.0 577.0L1599.0 584.0L1592.0 591.0L1585.0 584.0Z" fill="#d6d6d6" stroke="#4a4a4a" stroke-width="0.9"/><path d="M1585.0 584.0L1592.0 591.0L1585.0 598.0L1578.0 591.0Z" fill="#d6d6d6" stroke="#4a4a4a" stroke-width="0.9"/><path d="M1578.0 591.0L1585.0 598.0L1578.0 605.0L1571.0 598.0Z" fill="#d6d6d6" stroke="#4a4a4a" stroke-width="0.9"/><path d="M1571.0 598.0L1578.0 605.0L1571.0 612.0L1564.0 605.0Z" fill="#d6d6d6" stroke="#4a4a4a" stroke-width="0.9"/><path d="M1564.0 605.0L1571.0 612.0L1564.0 619.0L1557.0 612.0Z" fill="#d6d6d6" stroke="#4a4a4a" stroke-width="0.9"/><path d="M1557.0 612.0L1564.0 619.0L1557.0 626.0L1550.0 619.0Z" fill="#b60fd2" stroke="#4a4a4a" stroke-width="0.9"/><path d="M1550.0 619.0L1557.0 626.0L1550.0 633.0L1543.0 626.0Z" fill="#d6d6d6" stroke="#4a4a4a" stroke-width="0.9"/><path d="M1543.0 626.0L1550.0 633.0L1543.0 640.0L1536.0 633.0Z" fill="#d6d6d6" stroke="#4a4a4a" stroke-width="0.9"/><path d="M1536.0 633.0L1543.0 640.0L1536.0 647.0L1529.0 640.0Z" fill="#d6d6d6" stroke="#4a4a4a" stroke-width="0.9"/><path d="M1529.0 640.0L1536.0 647.0L1529.0 654.0L1522.0 647.0Z" fill="#d6d6d6" stroke="#4a4a4a" stroke-width="0.9"/><path d="M1522.0 647.0L1529.0 654.0L1522.0 661.0L1515.0 654.0Z" fill="#d6d6d6" stroke="#4a4a4a" stroke-width="0.9"/><path d="M1515.0 654.0L1522.0 661.0L1515.0 668.0L1508.0 661.0Z" fill="#d6d6d6" stroke="#4a4a4a" stroke-width="0.9"/><path d="M1508.0 661.0L1515.0 668.0L1508.0 675.0L1501.0 668.0Z" fill="#b60fd2" stroke="#4a4a4a" stroke-width="0.9"/><path d="M1501.0 668.0L1508.0 675.0L1501.0 682.0L1494.0 675.0Z" fill="#7612c8" stroke="#4a4a4a" stroke-width="0.9"/><path d="M1494.0 675.0L1501.0 682.0L1494.0 689.0L1487.0 682.0Z" fill="#7612c8" stroke="#4a4a4a" stroke-width="0.9"/><path d="M1487.0 682.0L1494.0 689.0L1487.0 696.0L1480.0 689.0Z" fill="#b60fd2" stroke="#4a4a4a" stroke-width="0.9"/><path d="M1480.0 689.0L1487.0 696.0L1480.0 703.0L1473.0 696.0Z" fill="#b60fd2" stroke="#4a4a4a" stroke-width="0.9"/><path d="M1473.0 696.0L1480.0 703.0L1473.0 710.0L1466.0 703.0Z" fill="#b60fd2" stroke="#4a4a4a" stroke-width="0.9"/><path d="M1466.0 703.0L1473.0 710.0L1466.0 717.0L1459.0 710.0Z" fill="#b60fd2" stroke="#4a4a4a" stroke-width="0.9"/><path d="M1459.0 710.0L1466.0 717.0L1459.0 724.0L1452.0 717.0Z" fill="#b60fd2" stroke="#4a4a4a" stroke-width="0.9"/><path d="M1452.0 717.0L1459.0 724.0L1452.0 731.0L1445.0 724.0Z" fill="#b60fd2" stroke="#4a4a4a" stroke-width="0.9"/><path d="M1445.0 724.0L1452.0 731.0L1445.0 738.0L1438.0 731.0Z" fill="#c8105a" stroke="#4a4a4a" stroke-width="0.9"/><path d="M1634.0 549.0L1641.0 556.0L1634.0 563.0L1627.0 556.0Z" fill="#d6d6d6" stroke="#4a4a4a" stroke-width="0.9"/><path d="M1627.0 556.0L1634.0 563.0L1627.0 570.0L1620.0 563.0Z" fill="#d6d6d6" stroke="#4a4a4a" stroke-width="0.9"/><path d="M1620.0 563.0L1627.0 570.0L1620.0 577.0L1613.0 570.0Z" fill="#d6d6d6" stroke="#4a4a4a" stroke-width="0.9"/><path d="M1613.0 570.0L1620.0 577.0L1613.0 584.0L1606.0 577.0Z" fill="#d6d6d6" stroke="#4a4a4a" stroke-width="0.9"/><path d="M1606.0 577.0L1613.0 584.0L1606.0 591.0L1599.0 584.0Z" fill="#d6d6d6" stroke="#4a4a4a" stroke-width="0.9"/><path d="M1599.0 584.0L1606.0 591.0L1599.0 598.0L1592.0 591.0Z" fill="#d6d6d6" stroke="#4a4a4a" stroke-width="0.9"/><path d="M1592.0 591.0L1599.0 598.0L1592.0 605.0L1585.0 598.0Z" fill="#d6d6d6" stroke="#4a4a4a" stroke-width="0.9"/><path d="M1585.0 598.0L1592.0 605.0L1585.0 612.0L1578.0 605.0Z" fill="#d6d6d6" stroke="#4a4a4a" stroke-width="0.9"/><path d="M1578.0 605.0L1585.0 612.0L1578.0 619.0L1571.0 612.0Z" fill="#d6d6d6" stroke="#4a4a4a" stroke-width="0.9"/><path d="M1571.0 612.0L1578.0 619.0L1571.0 626.0L1564.0 619.0Z" fill="#d6d6d6" stroke="#4a4a4a" stroke-width="0.9"/><path d="M1564.0 619.0L1571.0 626.0L1564.0 633.0L1557.0 626.0Z" fill="#d6d6d6" stroke="#4a4a4a" stroke-width="0.9"/><path d="M1557.0 626.0L1564.0 633.0L1557.0 640.0L1550.0 633.0Z" fill="#b60fd2" stroke="#4a4a4a" stroke-width="0.9"/><path d="M1550.0 633.0L1557.0 640.0L1550.0 647.0L1543.0 640.0Z" fill="#d6d6d6" stroke="#4a4a4a" stroke-width="0.9"/><path d="M1543.0 640.0L1550.0 647.0L1543.0 654.0L1536.0 647.0Z" fill="#d6d6d6" stroke="#4a4a4a" stroke-width="0.9"/><path d="M1536.0 647.0L1543.0 654.0L1536.0 661.0L1529.0 654.0Z" fill="#b60fd2" stroke="#4a4a4a" stroke-width="0.9"/><path d="M1529.0 654.0L1536.0 661.0L1529.0 668.0L1522.0 661.0Z" fill="#d6d6d6" stroke="#4a4a4a" stroke-width="0.9"/><path d="M1522.0 661.0L1529.0 668.0L1522.0 675.0L1515.0 668.0Z" fill="#b60fd2" stroke="#4a4a4a" stroke-width="0.9"/><path d="M1515.0 668.0L1522.0 675.0L1515.0 682.0L1508.0 675.0Z" fill="#b60fd2" stroke="#4a4a4a" stroke-width="0.9"/><path d="M1508.0 675.0L1515.0 682.0L1508.0 689.0L1501.0 682.0Z" fill="#d6d6d6" stroke="#4a4a4a" stroke-width="0.9"/><path d="M1501.0 682.0L1508.0 689.0L1501.0 696.0L1494.0 689.0Z" fill="#7612c8" stroke="#4a4a4a" stroke-width="0.9"/><path d="M1494.0 689.0L1501.0 696.0L1494.0 703.0L1487.0 696.0Z" fill="#d6d6d6" stroke="#4a4a4a" stroke-width="0.9"/><path d="M1487.0 696.0L1494.0 703.0L1487.0 710.0L1480.0 703.0Z" fill="#b60fd2" stroke="#4a4a4a" stroke-width="0.9"/><path d="M1480.0 703.0L1487.0 710.0L1480.0 717.0L1473.0 710.0Z" fill="#d6d6d6" stroke="#4a4a4a" stroke-width="0.9"/><path d="M1473.0 710.0L1480.0 717.0L1473.0 724.0L1466.0 717.0Z" fill="#7612c8" stroke="#4a4a4a" stroke-width="0.9"/><path d="M1466.0 717.0L1473.0 724.0L1466.0 731.0L1459.0 724.0Z" fill="#b60fd2" stroke="#4a4a4a" stroke-width="0.9"/><path d="M1459.0 724.0L1466.0 731.0L1459.0 738.0L1452.0 731.0Z" fill="#c8105a" stroke="#4a4a4a" stroke-width="0.9"/><path d="M1452.0 731.0L1459.0 738.0L1452.0 745.0L1445.0 738.0Z" fill="#d6d6d6" stroke="#4a4a4a" stroke-width="0.9"/><path d="M1445.0 738.0L1452.0 745.0L1445.0 752.0L1438.0 745.0Z" fill="#c8105a" stroke="#4a4a4a" stroke-width="0.9"/><path d="M1634.0 563.0L1641.0 570.0L1634.0 577.0L1627.0 570.0Z" fill="#d6d6d6" stroke="#4a4a4a" stroke-width="0.9"/><path d="M1627.0 570.0L1634.0 577.0L1627.0 584.0L1620.0 577.0Z" fill="#d6d6d6" stroke="#4a4a4a" stroke-width="0.9"/><path d="M1620.0 577.0L1627.0 584.0L1620.0 591.0L1613.0 584.0Z" fill="#d6d6d6" stroke="#4a4a4a" stroke-width="0.9"/><path d="M1613.0 584.0L1620.0 591.0L1613.0 598.0L1606.0 591.0Z" fill="#b60fd2" stroke="#4a4a4a" stroke-width="0.9"/><path d="M1606.0 591.0L1613.0 598.0L1606.0 605.0L1599.0 598.0Z" fill="#d6d6d6" stroke="#4a4a4a" stroke-width="0.9"/><path d="M1599.0 598.0L1606.0 605.0L1599.0 612.0L1592.0 605.0Z" fill="#d6d6d6" stroke="#4a4a4a" stroke-width="0.9"/><path d="M1592.0 605.0L1599.0 612.0L1592.0 619.0L1585.0 612.0Z" fill="#b60fd2" stroke="#4a4a4a" stroke-width="0.9"/><path d="M1585.0 612.0L1592.0 619.0L1585.0 626.0L1578.0 619.0Z" fill="#b60fd2" stroke="#4a4a4a" stroke-width="0.9"/><path d="M1578.0 619.0L1585.0 626.0L1578.0 633.0L1571.0 626.0Z" fill="#d6d6d6" stroke="#4a4a4a" stroke-width="0.9"/><path d="M1571.0 626.0L1578.0 633.0L1571.0 640.0L1564.0 633.0Z" fill="#d6d6d6" stroke="#4a4a4a" stroke-width="0.9"/><path d="M1564.0 633.0L1571.0 640.0L1564.0 647.0L1557.0 640.0Z" fill="#d6d6d6" stroke="#4a4a4a" stroke-width="0.9"/><path d="M1557.0 640.0L1564.0 647.0L1557.0 654.0L1550.0 647.0Z" fill="#d6d6d6" stroke="#4a4a4a" stroke-width="0.9"/><path d="M1550.0 647.0L1557.0 654.0L1550.0 661.0L1543.0 654.0Z" fill="#d6d6d6" stroke="#4a4a4a" stroke-width="0.9"/><path d="M1543.0 654.0L1550.0 661.0L1543.0 668.0L1536.0 661.0Z" fill="#d6d6d6" stroke="#4a4a4a" stroke-width="0.9"/><path d="M1536.0 661.0L1543.0 668.0L1536.0 675.0L1529.0 668.0Z" fill="#7612c8" stroke="#4a4a4a" stroke-width="0.9"/><path d="M1529.0 668.0L1536.0 675.0L1529.0 682.0L1522.0 675.0Z" fill="#d6d6d6" stroke="#4a4a4a" stroke-width="0.9"/><path d="M1522.0 675.0L1529.0 682.0L1522.0 689.0L1515.0 682.0Z" fill="#b60fd2" stroke="#4a4a4a" stroke-width="0.9"/><path d="M1515.0 682.0L1522.0 689.0L1515.0 696.0L1508.0 689.0Z" fill="#b60fd2" stroke="#4a4a4a" stroke-width="0.9"/><path d="M1508.0 689.0L1515.0 696.0L1508.0 703.0L1501.0 696.0Z" fill="#b60fd2" stroke="#4a4a4a" stroke-width="0.9"/><path d="M1501.0 696.0L1508.0 703.0L1501.0 710.0L1494.0 703.0Z" fill="#b60fd2" stroke="#4a4a4a" stroke-width="0.9"/><path d="M1494.0 703.0L1501.0 710.0L1494.0 717.0L1487.0 710.0Z" fill="#7612c8" stroke="#4a4a4a" stroke-width="0.9"/><path d="M1487.0 710.0L1494.0 717.0L1487.0 724.0L1480.0 717.0Z" fill="#7612c8" stroke="#4a4a4a" stroke-width="0.9"/><path d="M1480.0 717.0L1487.0 724.0L1480.0 731.0L1473.0 724.0Z" fill="#b60fd2" stroke="#4a4a4a" stroke-width="0.9"/><path d="M1473.0 724.0L1480.0 731.0L1473.0 738.0L1466.0 731.0Z" fill="#d6d6d6" stroke="#4a4a4a" stroke-width="0.9"/><path d="M1466.0 731.0L1473.0 738.0L1466.0 745.0L1459.0 738.0Z" fill="#c8105a" stroke="#4a4a4a" stroke-width="0.9"/><path d="M1459.0 738.0L1466.0 745.0L1459.0 752.0L1452.0 745.0Z" fill="#7612c8" stroke="#4a4a4a" stroke-width="0.9"/><path d="M1452.0 745.0L1459.0 752.0L1452.0 759.0L1445.0 752.0Z" fill="#7612c8" stroke="#4a4a4a" stroke-width="0.9"/><path d="M1445.0 752.0L1452.0 759.0L1445.0 766.0L1438.0 759.0Z" fill="#7612c8" stroke="#4a4a4a" stroke-width="0.9"/><path d="M1634.0 577.0L1641.0 584.0L1634.0 591.0L1627.0 584.0Z" fill="#d6d6d6" stroke="#4a4a4a" stroke-width="0.9"/><path d="M1627.0 584.0L1634.0 591.0L1627.0 598.0L1620.0 591.0Z" fill="#b60fd2" stroke="#4a4a4a" stroke-width="0.9"/><path d="M1620.0 591.0L1627.0 598.0L1620.0 605.0L1613.0 598.0Z" fill="#7612c8" stroke="#4a4a4a" stroke-width="0.9"/><path d="M1613.0 598.0L1620.0 605.0L1613.0 612.0L1606.0 605.0Z" fill="#d6d6d6" stroke="#4a4a4a" stroke-width="0.9"/><path d="M1606.0 605.0L1613.0 612.0L1606.0 619.0L1599.0 612.0Z" fill="#d6d6d6" stroke="#4a4a4a" stroke-width="0.9"/><path d="M1599.0 612.0L1606.0 619.0L1599.0 626.0L1592.0 619.0Z" fill="#d6d6d6" stroke="#4a4a4a" stroke-width="0.9"/><path d="M1592.0 619.0L1599.0 626.0L1592.0 633.0L1585.0 626.0Z" fill="#d6d6d6" stroke="#4a4a4a" stroke-width="0.9"/><path d="M1585.0 626.0L1592.0 633.0L1585.0 640.0L1578.0 633.0Z" fill="#d6d6d6" stroke="#4a4a4a" stroke-width="0.9"/><path d="M1578.0 633.0L1585.0 640.0L1578.0 647.0L1571.0 640.0Z" fill="#d6d6d6" stroke="#4a4a4a" stroke-width="0.9"/><path d="M1571.0 640.0L1578.0 647.0L1571.0 654.0L1564.0 647.0Z" fill="#d6d6d6" stroke="#4a4a4a" stroke-width="0.9"/><path d="M1564.0 647.0L1571.0 654.0L1564.0 661.0L1557.0 654.0Z" fill="#d6d6d6" stroke="#4a4a4a" stroke-width="0.9"/><path d="M1557.0 654.0L1564.0 661.0L1557.0 668.0L1550.0 661.0Z" fill="#d6d6d6" stroke="#4a4a4a" stroke-width="0.9"/><path d="M1550.0 661.0L1557.0 668.0L1550.0 675.0L1543.0 668.0Z" fill="#d6d6d6" stroke="#4a4a4a" stroke-width="0.9"/><path d="M1543.0 668.0L1550.0 675.0L1543.0 682.0L1536.0 675.0Z" fill="#d6d6d6" stroke="#4a4a4a" stroke-width="0.9"/><path d="M1536.0 675.0L1543.0 682.0L1536.0 689.0L1529.0 682.0Z" fill="#b60fd2" stroke="#4a4a4a" stroke-width="0.9"/><path d="M1529.0 682.0L1536.0 689.0L1529.0 696.0L1522.0 689.0Z" fill="#d6d6d6" stroke="#4a4a4a" stroke-width="0.9"/><path d="M1522.0 689.0L1529.0 696.0L1522.0 703.0L1515.0 696.0Z" fill="#d6d6d6" stroke="#4a4a4a" stroke-width="0.9"/><path d="M1515.0 696.0L1522.0 703.0L1515.0 710.0L1508.0 703.0Z" fill="#d6d6d6" stroke="#4a4a4a" stroke-width="0.9"/><path d="M1508.0 703.0L1515.0 710.0L1508.0 717.0L1501.0 710.0Z" fill="#b60fd2" stroke="#4a4a4a" stroke-width="0.9"/><path d="M1501.0 710.0L1508.0 717.0L1501.0 724.0L1494.0 717.0Z" fill="#7612c8" stroke="#4a4a4a" stroke-width="0.9"/><path d="M1494.0 717.0L1501.0 724.0L1494.0 731.0L1487.0 724.0Z" fill="#d6d6d6" stroke="#4a4a4a" stroke-width="0.9"/><path d="M1487.0 724.0L1494.0 731.0L1487.0 738.0L1480.0 731.0Z" fill="#c8105a" stroke="#4a4a4a" stroke-width="0.9"/><path d="M1480.0 731.0L1487.0 738.0L1480.0 745.0L1473.0 738.0Z" fill="#7612c8" stroke="#4a4a4a" stroke-width="0.9"/><path d="M1473.0 738.0L1480.0 745.0L1473.0 752.0L1466.0 745.0Z" fill="#b60fd2" stroke="#4a4a4a" stroke-width="0.9"/><path d="M1466.0 745.0L1473.0 752.0L1466.0 759.0L1459.0 752.0Z" fill="#d6d6d6" stroke="#4a4a4a" stroke-width="0.9"/><path d="M1459.0 752.0L1466.0 759.0L1459.0 766.0L1452.0 759.0Z" fill="#b60fd2" stroke="#4a4a4a" stroke-width="0.9"/><path d="M1452.0 759.0L1459.0 766.0L1452.0 773.0L1445.0 766.0Z" fill="#b60fd2" stroke="#4a4a4a" stroke-width="0.9"/><path d="M1445.0 766.0L1452.0 773.0L1445.0 780.0L1438.0 773.0Z" fill="#b60fd2" stroke="#4a4a4a" stroke-width="0.9"/><path d="M1634.0 591.0L1641.0 598.0L1634.0 605.0L1627.0 598.0Z" fill="#b60fd2" stroke="#4a4a4a" stroke-width="0.9"/><path d="M1627.0 598.0L1634.0 605.0L1627.0 612.0L1620.0 605.0Z" fill="#d6d6d6" stroke="#4a4a4a" stroke-width="0.9"/><path d="M1620.0 605.0L1627.0 612.0L1620.0 619.0L1613.0 612.0Z" fill="#d6d6d6" stroke="#4a4a4a" stroke-width="0.9"/><path d="M1613.0 612.0L1620.0 619.0L1613.0 626.0L1606.0 619.0Z" fill="#d6d6d6" stroke="#4a4a4a" stroke-width="0.9"/><path d="M1606.0 619.0L1613.0 626.0L1606.0 633.0L1599.0 626.0Z" fill="#d6d6d6" stroke="#4a4a4a" stroke-width="0.9"/><path d="M1599.0 626.0L1606.0 633.0L1599.0 640.0L1592.0 633.0Z" fill="#d6d6d6" stroke="#4a4a4a" stroke-width="0.9"/><path d="M1592.0 633.0L1599.0 640.0L1592.0 647.0L1585.0 640.0Z" fill="#d6d6d6" stroke="#4a4a4a" stroke-width="0.9"/><path d="M1585.0 640.0L1592.0 647.0L1585.0 654.0L1578.0 647.0Z" fill="#b60fd2" stroke="#4a4a4a" stroke-width="0.9"/><path d="M1578.0 647.0L1585.0 654.0L1578.0 661.0L1571.0 654.0Z" fill="#d6d6d6" stroke="#4a4a4a" stroke-width="0.9"/><path d="M1571.0 654.0L1578.0 661.0L1571.0 668.0L1564.0 661.0Z" fill="#d6d6d6" stroke="#4a4a4a" stroke-width="0.9"/><path d="M1564.0 661.0L1571.0 668.0L1564.0 675.0L1557.0 668.0Z" fill="#d6d6d6" stroke="#4a4a4a" stroke-width="0.9"/><path d="M1557.0 668.0L1564.0 675.0L1557.0 682.0L1550.0 675.0Z" fill="#b60fd2" stroke="#4a4a4a" stroke-width="0.9"/><path d="M1550.0 675.0L1557.0 682.0L1550.0 689.0L1543.0 682.0Z" fill="#d6d6d6" stroke="#4a4a4a" stroke-width="0.9"/><path d="M1543.0 682.0L1550.0 689.0L1543.0 696.0L1536.0 689.0Z" fill="#d6d6d6" stroke="#4a4a4a" stroke-width="0.9"/><path d="M1536.0 689.0L1543.0 696.0L1536.0 703.0L1529.0 696.0Z" fill="#d6d6d6" stroke="#4a4a4a" stroke-width="0.9"/><path d="M1529.0 696.0L1536.0 703.0L1529.0 710.0L1522.0 703.0Z" fill="#d6d6d6" stroke="#4a4a4a" stroke-width="0.9"/><path d="M1522.0 703.0L1529.0 710.0L1522.0 717.0L1515.0 710.0Z" fill="#d6d6d6" stroke="#4a4a4a" stroke-width="0.9"/><path d="M1515.0 710.0L1522.0 717.0L1515.0 724.0L1508.0 717.0Z" fill="#7612c8" stroke="#4a4a4a" stroke-width="0.9"/><path d="M1508.0 717.0L1515.0 724.0L1508.0 731.0L1501.0 724.0Z" fill="#b60fd2" stroke="#4a4a4a" stroke-width="0.9"/><path d="M1501.0 724.0L1508.0 731.0L1501.0 738.0L1494.0 731.0Z" fill="#b60fd2" stroke="#4a4a4a" stroke-width="0.9"/><path d="M1494.0 731.0L1501.0 738.0L1494.0 745.0L1487.0 738.0Z" fill="#c8105a" stroke="#4a4a4a" stroke-width="0.9"/><path d="M1487.0 738.0L1494.0 745.0L1487.0 752.0L1480.0 745.0Z" fill="#b60fd2" stroke="#4a4a4a" stroke-width="0.9"/><path d="M1480.0 745.0L1487.0 752.0L1480.0 759.0L1473.0 752.0Z" fill="#7612c8" stroke="#4a4a4a" stroke-width="0.9"/><path d="M1473.0 752.0L1480.0 759.0L1473.0 766.0L1466.0 759.0Z" fill="#c8105a" stroke="#4a4a4a" stroke-width="0.9"/><path d="M1466.0 759.0L1473.0 766.0L1466.0 773.0L1459.0 766.0Z" fill="#d6d6d6" stroke="#4a4a4a" stroke-width="0.9"/><path d="M1459.0 766.0L1466.0 773.0L1459.0 780.0L1452.0 773.0Z" fill="#c8105a" stroke="#4a4a4a" stroke-width="0.9"/><path d="M1452.0 773.0L1459.0 780.0L1452.0 787.0L1445.0 780.0Z" fill="#7612c8" stroke="#4a4a4a" stroke-width="0.9"/><path d="M1634.0 605.0L1641.0 612.0L1634.0 619.0L1627.0 612.0Z" fill="#d6d6d6" stroke="#4a4a4a" stroke-width="0.9"/><path d="M1627.0 612.0L1634.0 619.0L1627.0 626.0L1620.0 619.0Z" fill="#b60fd2" stroke="#4a4a4a" stroke-width="0.9"/><path d="M1620.0 619.0L1627.0 626.0L1620.0 633.0L1613.0 626.0Z" fill="#b60fd2" stroke="#4a4a4a" stroke-width="0.9"/><path d="M1613.0 626.0L1620.0 633.0L1613.0 640.0L1606.0 633.0Z" fill="#d6d6d6" stroke="#4a4a4a" stroke-width="0.9"/><path d="M1606.0 633.0L1613.0 640.0L1606.0 647.0L1599.0 640.0Z" fill="#d6d6d6" stroke="#4a4a4a" stroke-width="0.9"/><path d="M1599.0 640.0L1606.0 647.0L1599.0 654.0L1592.0 647.0Z" fill="#d6d6d6" stroke="#4a4a4a" stroke-width="0.9"/><path d="M1592.0 647.0L1599.0 654.0L1592.0 661.0L1585.0 654.0Z" fill="#d6d6d6" stroke="#4a4a4a" stroke-width="0.9"/><path d="M1585.0 654.0L1592.0 661.0L1585.0 668.0L1578.0 661.0Z" fill="#d6d6d6" stroke="#4a4a4a" stroke-width="0.9"/><path d="M1578.0 661.0L1585.0 668.0L1578.0 675.0L1571.0 668.0Z" fill="#d6d6d6" stroke="#4a4a4a" stroke-width="0.9"/><path d="M1571.0 668.0L1578.0 675.0L1571.0 682.0L1564.0 675.0Z" fill="#b60fd2" stroke="#4a4a4a" stroke-width="0.9"/><path d="M1564.0 675.0L1571.0 682.0L1564.0 689.0L1557.0 682.0Z" fill="#d6d6d6" stroke="#4a4a4a" stroke-width="0.9"/><path d="M1557.0 682.0L1564.0 689.0L1557.0 696.0L1550.0 689.0Z" fill="#b60fd2" stroke="#4a4a4a" stroke-width="0.9"/><path d="M1550.0 689.0L1557.0 696.0L1550.0 703.0L1543.0 696.0Z" fill="#d6d6d6" stroke="#4a4a4a" stroke-width="0.9"/><path d="M1543.0 696.0L1550.0 703.0L1543.0 710.0L1536.0 703.0Z" fill="#b60fd2" stroke="#4a4a4a" stroke-width="0.9"/><path d="M1536.0 703.0L1543.0 710.0L1536.0 717.0L1529.0 710.0Z" fill="#b60fd2" stroke="#4a4a4a" stroke-width="0.9"/><path d="M1529.0 710.0L1536.0 717.0L1529.0 724.0L1522.0 717.0Z" fill="#b60fd2" stroke="#4a4a4a" stroke-width="0.9"/><path d="M1522.0 717.0L1529.0 724.0L1522.0 731.0L1515.0 724.0Z" fill="#d6d6d6" stroke="#4a4a4a" stroke-width="0.9"/><path d="M1515.0 724.0L1522.0 731.0L1515.0 738.0L1508.0 731.0Z" fill="#b60fd2" stroke="#4a4a4a" stroke-width="0.9"/><path d="M1508.0 731.0L1515.0 738.0L1508.0 745.0L1501.0 738.0Z" fill="#b60fd2" stroke="#4a4a4a" stroke-width="0.9"/><path d="M1501.0 738.0L1508.0 745.0L1501.0 752.0L1494.0 745.0Z" fill="#b60fd2" stroke="#4a4a4a" stroke-width="0.9"/><path d="M1494.0 745.0L1501.0 752.0L1494.0 759.0L1487.0 752.0Z" fill="#d6d6d6" stroke="#4a4a4a" stroke-width="0.9"/><path d="M1487.0 752.0L1494.0 759.0L1487.0 766.0L1480.0 759.0Z" fill="#c8105a" stroke="#4a4a4a" stroke-width="0.9"/><path d="M1480.0 759.0L1487.0 766.0L1480.0 773.0L1473.0 766.0Z" fill="#b60fd2" stroke="#4a4a4a" stroke-width="0.9"/><path d="M1473.0 766.0L1480.0 773.0L1473.0 780.0L1466.0 773.0Z" fill="#c8105a" stroke="#4a4a4a" stroke-width="0.9"/><path d="M1466.0 773.0L1473.0 780.0L1466.0 787.0L1459.0 780.0Z" fill="#b60fd2" stroke="#4a4a4a" stroke-width="0.9"/><path d="M1634.0 619.0L1641.0 626.0L1634.0 633.0L1627.0 626.0Z" fill="#d6d6d6" stroke="#4a4a4a" stroke-width="0.9"/><path d="M1627.0 626.0L1634.0 633.0L1627.0 640.0L1620.0 633.0Z" fill="#d6d6d6" stroke="#4a4a4a" stroke-width="0.9"/><path d="M1620.0 633.0L1627.0 640.0L1620.0 647.0L1613.0 640.0Z" fill="#d6d6d6" stroke="#4a4a4a" stroke-width="0.9"/><path d="M1613.0 640.0L1620.0 647.0L1613.0 654.0L1606.0 647.0Z" fill="#d6d6d6" stroke="#4a4a4a" stroke-width="0.9"/><path d="M1606.0 647.0L1613.0 654.0L1606.0 661.0L1599.0 654.0Z" fill="#d6d6d6" stroke="#4a4a4a" stroke-width="0.9"/><path d="M1599.0 654.0L1606.0 661.0L1599.0 668.0L1592.0 661.0Z" fill="#d6d6d6" stroke="#4a4a4a" stroke-width="0.9"/><path d="M1592.0 661.0L1599.0 668.0L1592.0 675.0L1585.0 668.0Z" fill="#d6d6d6" stroke="#4a4a4a" stroke-width="0.9"/><path d="M1585.0 668.0L1592.0 675.0L1585.0 682.0L1578.0 675.0Z" fill="#d6d6d6" stroke="#4a4a4a" stroke-width="0.9"/><path d="M1578.0 675.0L1585.0 682.0L1578.0 689.0L1571.0 682.0Z" fill="#d6d6d6" stroke="#4a4a4a" stroke-width="0.9"/><path d="M1571.0 682.0L1578.0 689.0L1571.0 696.0L1564.0 689.0Z" fill="#b60fd2" stroke="#4a4a4a" stroke-width="0.9"/><path d="M1564.0 689.0L1571.0 696.0L1564.0 703.0L1557.0 696.0Z" fill="#b60fd2" stroke="#4a4a4a" stroke-width="0.9"/><path d="M1557.0 696.0L1564.0 703.0L1557.0 710.0L1550.0 703.0Z" fill="#d6d6d6" stroke="#4a4a4a" stroke-width="0.9"/><path d="M1550.0 703.0L1557.0 710.0L1550.0 717.0L1543.0 710.0Z" fill="#d6d6d6" stroke="#4a4a4a" stroke-width="0.9"/><path d="M1543.0 710.0L1550.0 717.0L1543.0 724.0L1536.0 717.0Z" fill="#d6d6d6" stroke="#4a4a4a" stroke-width="0.9"/><path d="M1536.0 717.0L1543.0 724.0L1536.0 731.0L1529.0 724.0Z" fill="#d6d6d6" stroke="#4a4a4a" stroke-width="0.9"/><path d="M1529.0 724.0L1536.0 731.0L1529.0 738.0L1522.0 731.0Z" fill="#d6d6d6" stroke="#4a4a4a" stroke-width="0.9"/><path d="M1522.0 731.0L1529.0 738.0L1522.0 745.0L1515.0 738.0Z" fill="#d6d6d6" stroke="#4a4a4a" stroke-width="0.9"/><path d="M1515.0 738.0L1522.0 745.0L1515.0 752.0L1508.0 745.0Z" fill="#b60fd2" stroke="#4a4a4a" stroke-width="0.9"/><path d="M1508.0 745.0L1515.0 752.0L1508.0 759.0L1501.0 752.0Z" fill="#d6d6d6" stroke="#4a4a4a" stroke-width="0.9"/><path d="M1501.0 752.0L1508.0 759.0L1501.0 766.0L1494.0 759.0Z" fill="#d6d6d6" stroke="#4a4a4a" stroke-width="0.9"/><path d="M1494.0 759.0L1501.0 766.0L1494.0 773.0L1487.0 766.0Z" fill="#b60fd2" stroke="#4a4a4a" stroke-width="0.9"/><path d="M1487.0 766.0L1494.0 773.0L1487.0 780.0L1480.0 773.0Z" fill="#c8105a" stroke="#4a4a4a" stroke-width="0.9"/><path d="M1480.0 773.0L1487.0 780.0L1480.0 787.0L1473.0 780.0Z" fill="#7612c8" stroke="#4a4a4a" stroke-width="0.9"/><path d="M1634.0 633.0L1641.0 640.0L1634.0 647.0L1627.0 640.0Z" fill="#b60fd2" stroke="#4a4a4a" stroke-width="0.9"/><path d="M1627.0 640.0L1634.0 647.0L1627.0 654.0L1620.0 647.0Z" fill="#d6d6d6" stroke="#4a4a4a" stroke-width="0.9"/><path d="M1620.0 647.0L1627.0 654.0L1620.0 661.0L1613.0 654.0Z" fill="#d6d6d6" stroke="#4a4a4a" stroke-width="0.9"/><path d="M1613.0 654.0L1620.0 661.0L1613.0 668.0L1606.0 661.0Z" fill="#b60fd2" stroke="#4a4a4a" stroke-width="0.9"/><path d="M1606.0 661.0L1613.0 668.0L1606.0 675.0L1599.0 668.0Z" fill="#d6d6d6" stroke="#4a4a4a" stroke-width="0.9"/><path d="M1599.0 668.0L1606.0 675.0L1599.0 682.0L1592.0 675.0Z" fill="#d6d6d6" stroke="#4a4a4a" stroke-width="0.9"/><path d="M1592.0 675.0L1599.0 682.0L1592.0 689.0L1585.0 682.0Z" fill="#d6d6d6" stroke="#4a4a4a" stroke-width="0.9"/><path d="M1585.0 682.0L1592.0 689.0L1585.0 696.0L1578.0 689.0Z" fill="#7612c8" stroke="#4a4a4a" stroke-width="0.9"/><path d="M1578.0 689.0L1585.0 696.0L1578.0 703.0L1571.0 696.0Z" fill="#d6d6d6" stroke="#4a4a4a" stroke-width="0.9"/><path d="M1571.0 696.0L1578.0 703.0L1571.0 710.0L1564.0 703.0Z" fill="#d6d6d6" stroke="#4a4a4a" stroke-width="0.9"/><path d="M1564.0 703.0L1571.0 710.0L1564.0 717.0L1557.0 710.0Z" fill="#d6d6d6" stroke="#4a4a4a" stroke-width="0.9"/><path d="M1557.0 710.0L1564.0 717.0L1557.0 724.0L1550.0 717.0Z" fill="#d6d6d6" stroke="#4a4a4a" stroke-width="0.9"/><path d="M1550.0 717.0L1557.0 724.0L1550.0 731.0L1543.0 724.0Z" fill="#7612c8" stroke="#4a4a4a" stroke-width="0.9"/><path d="M1543.0 724.0L1550.0 731.0L1543.0 738.0L1536.0 731.0Z" fill="#b60fd2" stroke="#4a4a4a" stroke-width="0.9"/><path d="M1536.0 731.0L1543.0 738.0L1536.0 745.0L1529.0 738.0Z" fill="#d6d6d6" stroke="#4a4a4a" stroke-width="0.9"/><path d="M1529.0 738.0L1536.0 745.0L1529.0 752.0L1522.0 745.0Z" fill="#d6d6d6" stroke="#4a4a4a" stroke-width="0.9"/><path d="M1522.0 745.0L1529.0 752.0L1522.0 759.0L1515.0 752.0Z" fill="#b60fd2" stroke="#4a4a4a" stroke-width="0.9"/><path d="M1515.0 752.0L1522.0 759.0L1515.0 766.0L1508.0 759.0Z" fill="#b60fd2" stroke="#4a4a4a" stroke-width="0.9"/><path d="M1508.0 759.0L1515.0 766.0L1508.0 773.0L1501.0 766.0Z" fill="#b60fd2" stroke="#4a4a4a" stroke-width="0.9"/><path d="M1501.0 766.0L1508.0 773.0L1501.0 780.0L1494.0 773.0Z" fill="#7612c8" stroke="#4a4a4a" stroke-width="0.9"/><path d="M1494.0 773.0L1501.0 780.0L1494.0 787.0L1487.0 780.0Z" fill="#b60fd2" stroke="#4a4a4a" stroke-width="0.9"/><path d="M1634.0 647.0L1641.0 654.0L1634.0 661.0L1627.0 654.0Z" fill="#7612c8" stroke="#4a4a4a" stroke-width="0.9"/><path d="M1627.0 654.0L1634.0 661.0L1627.0 668.0L1620.0 661.0Z" fill="#b60fd2" stroke="#4a4a4a" stroke-width="0.9"/><path d="M1620.0 661.0L1627.0 668.0L1620.0 675.0L1613.0 668.0Z" fill="#d6d6d6" stroke="#4a4a4a" stroke-width="0.9"/><path d="M1613.0 668.0L1620.0 675.0L1613.0 682.0L1606.0 675.0Z" fill="#d6d6d6" stroke="#4a4a4a" stroke-width="0.9"/><path d="M1606.0 675.0L1613.0 682.0L1606.0 689.0L1599.0 682.0Z" fill="#d6d6d6" stroke="#4a4a4a" stroke-width="0.9"/><path d="M1599.0 682.0L1606.0 689.0L1599.0 696.0L1592.0 689.0Z" fill="#d6d6d6" stroke="#4a4a4a" stroke-width="0.9"/><path d="M1592.0 689.0L1599.0 696.0L1592.0 703.0L1585.0 696.0Z" fill="#d6d6d6" stroke="#4a4a4a" stroke-width="0.9"/><path d="M1585.0 696.0L1592.0 703.0L1585.0 710.0L1578.0 703.0Z" fill="#d6d6d6" stroke="#4a4a4a" stroke-width="0.9"/><path d="M1578.0 703.0L1585.0 710.0L1578.0 717.0L1571.0 710.0Z" fill="#d6d6d6" stroke="#4a4a4a" stroke-width="0.9"/><path d="M1571.0 710.0L1578.0 717.0L1571.0 724.0L1564.0 717.0Z" fill="#d6d6d6" stroke="#4a4a4a" stroke-width="0.9"/><path d="M1564.0 717.0L1571.0 724.0L1564.0 731.0L1557.0 724.0Z" fill="#d6d6d6" stroke="#4a4a4a" stroke-width="0.9"/><path d="M1557.0 724.0L1564.0 731.0L1557.0 738.0L1550.0 731.0Z" fill="#b60fd2" stroke="#4a4a4a" stroke-width="0.9"/><path d="M1550.0 731.0L1557.0 738.0L1550.0 745.0L1543.0 738.0Z" fill="#d6d6d6" stroke="#4a4a4a" stroke-width="0.9"/><path d="M1543.0 738.0L1550.0 745.0L1543.0 752.0L1536.0 745.0Z" fill="#b60fd2" stroke="#4a4a4a" stroke-width="0.9"/><path d="M1536.0 745.0L1543.0 752.0L1536.0 759.0L1529.0 752.0Z" fill="#d6d6d6" stroke="#4a4a4a" stroke-width="0.9"/><path d="M1529.0 752.0L1536.0 759.0L1529.0 766.0L1522.0 759.0Z" fill="#d6d6d6" stroke="#4a4a4a" stroke-width="0.9"/><path d="M1522.0 759.0L1529.0 766.0L1522.0 773.0L1515.0 766.0Z" fill="#b60fd2" stroke="#4a4a4a" stroke-width="0.9"/><path d="M1515.0 766.0L1522.0 773.0L1515.0 780.0L1508.0 773.0Z" fill="#b60fd2" stroke="#4a4a4a" stroke-width="0.9"/><path d="M1508.0 773.0L1515.0 780.0L1508.0 787.0L1501.0 780.0Z" fill="#b60fd2" stroke="#4a4a4a" stroke-width="0.9"/><path d="M1634.0 661.0L1641.0 668.0L1634.0 675.0L1627.0 668.0Z" fill="#d6d6d6" stroke="#4a4a4a" stroke-width="0.9"/><path d="M1627.0 668.0L1634.0 675.0L1627.0 682.0L1620.0 675.0Z" fill="#d6d6d6" stroke="#4a4a4a" stroke-width="0.9"/><path d="M1620.0 675.0L1627.0 682.0L1620.0 689.0L1613.0 682.0Z" fill="#b60fd2" stroke="#4a4a4a" stroke-width="0.9"/><path d="M1613.0 682.0L1620.0 689.0L1613.0 696.0L1606.0 689.0Z" fill="#b60fd2" stroke="#4a4a4a" stroke-width="0.9"/><path d="M1606.0 689.0L1613.0 696.0L1606.0 703.0L1599.0 696.0Z" fill="#d6d6d6" stroke="#4a4a4a" stroke-width="0.9"/><path d="M1599.0 696.0L1606.0 703.0L1599.0 710.0L1592.0 703.0Z" fill="#d6d6d6" stroke="#4a4a4a" stroke-width="0.9"/><path d="M1592.0 703.0L1599.0 710.0L1592.0 717.0L1585.0 710.0Z" fill="#b60fd2" stroke="#4a4a4a" stroke-width="0.9"/><path d="M1585.0 710.0L1592.0 717.0L1585.0 724.0L1578.0 717.0Z" fill="#d6d6d6" stroke="#4a4a4a" stroke-width="0.9"/><path d="M1578.0 717.0L1585.0 724.0L1578.0 731.0L1571.0 724.0Z" fill="#d6d6d6" stroke="#4a4a4a" stroke-width="0.9"/><path d="M1571.0 724.0L1578.0 731.0L1571.0 738.0L1564.0 731.0Z" fill="#7612c8" stroke="#4a4a4a" stroke-width="0.9"/><path d="M1564.0 731.0L1571.0 738.0L1564.0 745.0L1557.0 738.0Z" fill="#d6d6d6" stroke="#4a4a4a" stroke-width="0.9"/><path d="M1557.0 738.0L1564.0 745.0L1557.0 752.0L1550.0 745.0Z" fill="#d6d6d6" stroke="#4a4a4a" stroke-width="0.9"/><path d="M1550.0 745.0L1557.0 752.0L1550.0 759.0L1543.0 752.0Z" fill="#d6d6d6" stroke="#4a4a4a" stroke-width="0.9"/><path d="M1543.0 752.0L1550.0 759.0L1543.0 766.0L1536.0 759.0Z" fill="#7612c8" stroke="#4a4a4a" stroke-width="0.9"/><path d="M1536.0 759.0L1543.0 766.0L1536.0 773.0L1529.0 766.0Z" fill="#d6d6d6" stroke="#4a4a4a" stroke-width="0.9"/><path d="M1529.0 766.0L1536.0 773.0L1529.0 780.0L1522.0 773.0Z" fill="#d6d6d6" stroke="#4a4a4a" stroke-width="0.9"/><path d="M1522.0 773.0L1529.0 780.0L1522.0 787.0L1515.0 780.0Z" fill="#d6d6d6" stroke="#4a4a4a" stroke-width="0.9"/><path d="M1634.0 675.0L1641.0 682.0L1634.0 689.0L1627.0 682.0Z" fill="#7612c8" stroke="#4a4a4a" stroke-width="0.9"/><path d="M1627.0 682.0L1634.0 689.0L1627.0 696.0L1620.0 689.0Z" fill="#d6d6d6" stroke="#4a4a4a" stroke-width="0.9"/><path d="M1620.0 689.0L1627.0 696.0L1620.0 703.0L1613.0 696.0Z" fill="#b60fd2" stroke="#4a4a4a" stroke-width="0.9"/><path d="M1613.0 696.0L1620.0 703.0L1613.0 710.0L1606.0 703.0Z" fill="#d6d6d6" stroke="#4a4a4a" stroke-width="0.9"/><path d="M1606.0 703.0L1613.0 710.0L1606.0 717.0L1599.0 710.0Z" fill="#7612c8" stroke="#4a4a4a" stroke-width="0.9"/><path d="M1599.0 710.0L1606.0 717.0L1599.0 724.0L1592.0 717.0Z" fill="#7612c8" stroke="#4a4a4a" stroke-width="0.9"/><path d="M1592.0 717.0L1599.0 724.0L1592.0 731.0L1585.0 724.0Z" fill="#b60fd2" stroke="#4a4a4a" stroke-width="0.9"/><path d="M1585.0 724.0L1592.0 731.0L1585.0 738.0L1578.0 731.0Z" fill="#d6d6d6" stroke="#4a4a4a" stroke-width="0.9"/><path d="M1578.0 731.0L1585.0 738.0L1578.0 745.0L1571.0 738.0Z" fill="#b60fd2" stroke="#4a4a4a" stroke-width="0.9"/><path d="M1571.0 738.0L1578.0 745.0L1571.0 752.0L1564.0 745.0Z" fill="#d6d6d6" stroke="#4a4a4a" stroke-width="0.9"/><path d="M1564.0 745.0L1571.0 752.0L1564.0 759.0L1557.0 752.0Z" fill="#b60fd2" stroke="#4a4a4a" stroke-width="0.9"/><path d="M1557.0 752.0L1564.0 759.0L1557.0 766.0L1550.0 759.0Z" fill="#b60fd2" stroke="#4a4a4a" stroke-width="0.9"/><path d="M1550.0 759.0L1557.0 766.0L1550.0 773.0L1543.0 766.0Z" fill="#d6d6d6" stroke="#4a4a4a" stroke-width="0.9"/><path d="M1543.0 766.0L1550.0 773.0L1543.0 780.0L1536.0 773.0Z" fill="#d6d6d6" stroke="#4a4a4a" stroke-width="0.9"/><path d="M1536.0 773.0L1543.0 780.0L1536.0 787.0L1529.0 780.0Z" fill="#d6d6d6" stroke="#4a4a4a" stroke-width="0.9"/><path d="M1634.0 689.0L1641.0 696.0L1634.0 703.0L1627.0 696.0Z" fill="#7612c8" stroke="#4a4a4a" stroke-width="0.9"/><path d="M1627.0 696.0L1634.0 703.0L1627.0 710.0L1620.0 703.0Z" fill="#b60fd2" stroke="#4a4a4a" stroke-width="0.9"/><path d="M1620.0 703.0L1627.0 710.0L1620.0 717.0L1613.0 710.0Z" fill="#d6d6d6" stroke="#4a4a4a" stroke-width="0.9"/><path d="M1613.0 710.0L1620.0 717.0L1613.0 724.0L1606.0 717.0Z" fill="#d6d6d6" stroke="#4a4a4a" stroke-width="0.9"/><path d="M1606.0 717.0L1613.0 724.0L1606.0 731.0L1599.0 724.0Z" fill="#d6d6d6" stroke="#4a4a4a" stroke-width="0.9"/><path d="M1599.0 724.0L1606.0 731.0L1599.0 738.0L1592.0 731.0Z" fill="#d6d6d6" stroke="#4a4a4a" stroke-width="0.9"/><path d="M1592.0 731.0L1599.0 738.0L1592.0 745.0L1585.0 738.0Z" fill="#d6d6d6" stroke="#4a4a4a" stroke-width="0.9"/><path d="M1585.0 738.0L1592.0 745.0L1585.0 752.0L1578.0 745.0Z" fill="#d6d6d6" stroke="#4a4a4a" stroke-width="0.9"/><path d="M1578.0 745.0L1585.0 752.0L1578.0 759.0L1571.0 752.0Z" fill="#7612c8" stroke="#4a4a4a" stroke-width="0.9"/><path d="M1571.0 752.0L1578.0 759.0L1571.0 766.0L1564.0 759.0Z" fill="#d6d6d6" stroke="#4a4a4a" stroke-width="0.9"/><path d="M1564.0 759.0L1571.0 766.0L1564.0 773.0L1557.0 766.0Z" fill="#d6d6d6" stroke="#4a4a4a" stroke-width="0.9"/><path d="M1557.0 766.0L1564.0 773.0L1557.0 780.0L1550.0 773.0Z" fill="#d6d6d6" stroke="#4a4a4a" stroke-width="0.9"/><path d="M1550.0 773.0L1557.0 780.0L1550.0 787.0L1543.0 780.0Z" fill="#7612c8" stroke="#4a4a4a" stroke-width="0.9"/><path d="M1634.0 703.0L1641.0 710.0L1634.0 717.0L1627.0 710.0Z" fill="#d6d6d6" stroke="#4a4a4a" stroke-width="0.9"/><path d="M1627.0 710.0L1634.0 717.0L1627.0 724.0L1620.0 717.0Z" fill="#d6d6d6" stroke="#4a4a4a" stroke-width="0.9"/><path d="M1620.0 717.0L1627.0 724.0L1620.0 731.0L1613.0 724.0Z" fill="#d6d6d6" stroke="#4a4a4a" stroke-width="0.9"/><path d="M1613.0 724.0L1620.0 731.0L1613.0 738.0L1606.0 731.0Z" fill="#d6d6d6" stroke="#4a4a4a" stroke-width="0.9"/><path d="M1606.0 731.0L1613.0 738.0L1606.0 745.0L1599.0 738.0Z" fill="#b60fd2" stroke="#4a4a4a" stroke-width="0.9"/><path d="M1599.0 738.0L1606.0 745.0L1599.0 752.0L1592.0 745.0Z" fill="#7612c8" stroke="#4a4a4a" stroke-width="0.9"/><path d="M1592.0 745.0L1599.0 752.0L1592.0 759.0L1585.0 752.0Z" fill="#b60fd2" stroke="#4a4a4a" stroke-width="0.9"/><path d="M1585.0 752.0L1592.0 759.0L1585.0 766.0L1578.0 759.0Z" fill="#d6d6d6" stroke="#4a4a4a" stroke-width="0.9"/><path d="M1578.0 759.0L1585.0 766.0L1578.0 773.0L1571.0 766.0Z" fill="#d6d6d6" stroke="#4a4a4a" stroke-width="0.9"/><path d="M1571.0 766.0L1578.0 773.0L1571.0 780.0L1564.0 773.0Z" fill="#d6d6d6" stroke="#4a4a4a" stroke-width="0.9"/><path d="M1564.0 773.0L1571.0 780.0L1564.0 787.0L1557.0 780.0Z" fill="#b60fd2" stroke="#4a4a4a" stroke-width="0.9"/><path d="M1634.0 717.0L1641.0 724.0L1634.0 731.0L1627.0 724.0Z" fill="#b60fd2" stroke="#4a4a4a" stroke-width="0.9"/><path d="M1627.0 724.0L1634.0 731.0L1627.0 738.0L1620.0 731.0Z" fill="#d6d6d6" stroke="#4a4a4a" stroke-width="0.9"/><path d="M1620.0 731.0L1627.0 738.0L1620.0 745.0L1613.0 738.0Z" fill="#d6d6d6" stroke="#4a4a4a" stroke-width="0.9"/><path d="M1613.0 738.0L1620.0 745.0L1613.0 752.0L1606.0 745.0Z" fill="#d6d6d6" stroke="#4a4a4a" stroke-width="0.9"/><path d="M1606.0 745.0L1613.0 752.0L1606.0 759.0L1599.0 752.0Z" fill="#d6d6d6" stroke="#4a4a4a" stroke-width="0.9"/><path d="M1599.0 752.0L1606.0 759.0L1599.0 766.0L1592.0 759.0Z" fill="#b60fd2" stroke="#4a4a4a" stroke-width="0.9"/><path d="M1592.0 759.0L1599.0 766.0L1592.0 773.0L1585.0 766.0Z" fill="#d6d6d6" stroke="#4a4a4a" stroke-width="0.9"/><path d="M1585.0 766.0L1592.0 773.0L1585.0 780.0L1578.0 773.0Z" fill="#b60fd2" stroke="#4a4a4a" stroke-width="0.9"/><path d="M1578.0 773.0L1585.0 780.0L1578.0 787.0L1571.0 780.0Z" fill="#d6d6d6" stroke="#4a4a4a" stroke-width="0.9"/><path d="M1634.0 731.0L1641.0 738.0L1634.0 745.0L1627.0 738.0Z" fill="#b60fd2" stroke="#4a4a4a" stroke-width="0.9"/><path d="M1627.0 738.0L1634.0 745.0L1627.0 752.0L1620.0 745.0Z" fill="#b60fd2" stroke="#4a4a4a" stroke-width="0.9"/><path d="M1620.0 745.0L1627.0 752.0L1620.0 759.0L1613.0 752.0Z" fill="#d6d6d6" stroke="#4a4a4a" stroke-width="0.9"/><path d="M1613.0 752.0L1620.0 759.0L1613.0 766.0L1606.0 759.0Z" fill="#b60fd2" stroke="#4a4a4a" stroke-width="0.9"/><path d="M1606.0 759.0L1613.0 766.0L1606.0 773.0L1599.0 766.0Z" fill="#d6d6d6" stroke="#4a4a4a" stroke-width="0.9"/><path d="M1599.0 766.0L1606.0 773.0L1599.0 780.0L1592.0 773.0Z" fill="#7612c8" stroke="#4a4a4a" stroke-width="0.9"/><path d="M1592.0 773.0L1599.0 780.0L1592.0 787.0L1585.0 780.0Z" fill="#b60fd2" stroke="#4a4a4a" stroke-width="0.9"/></g></svg><svg style="left:0;top:0" width="1920" height="1032"><path d="M823 150.5L829 153.5L835 150.5" fill="#ececec" stroke="#999" stroke-width="0.6"/><path d="M837 150.5L843 153.5L849 150.5" fill="#ececec" stroke="#999" stroke-width="0.6"/><path d="M851 150.5L857 153.5L863 150.5" fill="#ececec" stroke="#999" stroke-width="0.6"/><path d="M865 150.5L871 153.5L877 150.5" fill="#ececec" stroke="#999" stroke-width="0.6"/><path d="M879 150.5L885 153.5L891 150.5" fill="#ececec" stroke="#999" stroke-width="0.6"/><path d="M893 150.5L899 153.5L905 150.5" fill="#ececec" stroke="#999" stroke-width="0.6"/><path d="M907 150.5L913 153.5L919 150.5" fill="#b60fd2" stroke="#999" stroke-width="0.6"/><path d="M921 150.5L927 153.5L933 150.5" fill="#b60fd2" stroke="#999" stroke-width="0.6"/><path d="M935 150.5L941 153.5L947 150.5" fill="#ececec" stroke="#999" stroke-width="0.6"/><path d="M949 150.5L955 153.5L961 150.5" fill="#ececec" stroke="#999" stroke-width="0.6"/><path d="M963 150.5L969 153.5L975 150.5" fill="#ececec" stroke="#999" stroke-width="0.6"/><path d="M977 150.5L983 153.5L989 150.5" fill="#b60fd2" stroke="#999" stroke-width="0.6"/><path d="M991 150.5L997 153.5L1003 150.5" fill="#b60fd2" stroke="#999" stroke-width="0.6"/><path d="M1005 150.5L1011 153.5L1017 150.5" fill="#ececec" stroke="#999" stroke-width="0.6"/><path d="M1019 150.5L1025 153.5L1031 150.5" fill="#7612c8" stroke="#999" stroke-width="0.6"/><path d="M1033 150.5L1039 153.5L1045 150.5" fill="#b60fd2" stroke="#999" stroke-width="0.6"/><path d="M1047 150.5L1053 153.5L1059 150.5" fill="#b60fd2" stroke="#999" stroke-width="0.6"/><path d="M1061 150.5L1067 153.5L1073 150.5" fill="#ececec" stroke="#999" stroke-width="0.6"/><path d="M1075 150.5L1081 153.5L1087 150.5" fill="#b60fd2" stroke="#999" stroke-width="0.6"/><path d="M1089 150.5L1095 153.5L1101 150.5" fill="#ececec" stroke="#999" stroke-width="0.6"/><path d="M1103 150.5L1109 153.5L1115 150.5" fill="#ececec" stroke="#999" stroke-width="0.6"/><path d="M1117 150.5L1123 153.5L1129 150.5" fill="#ececec" stroke="#999" stroke-width="0.6"/><path d="M1131 150.5L1137 153.5L1143 150.5" fill="#ececec" stroke="#999" stroke-width="0.6"/><path d="M1145 150.5L1151 153.5L1157 150.5" fill="#b60fd2" stroke="#999" stroke-width="0.6"/><path d="M1159 150.5L1165 153.5L1171 150.5" fill="#ececec" stroke="#999" stroke-width="0.6"/><path d="M1173 150.5L1179 153.5L1185 150.5" fill="#b60fd2" stroke="#999" stroke-width="0.6"/><path d="M1187 150.5L1193 153.5L1199 150.5" fill="#ececec" stroke="#999" stroke-width="0.6"/></svg><svg style="left:1538px;top:153px;" width="80" height="85" viewBox="0 0 80 85"><text x="32" y="12" font-family="Liberation Sans" font-weight="bold" font-size="12" fill="#000">Y</text><path d="M29 14h14l-7 19z" fill="#90e020"/><path d="M36 14h7l-7 19z" fill="#60a810"/><path d="M20 47L3 40v14z" fill="#666"/><path d="M20 47L3 54v-7z" fill="#333"/><rect x="25" y="36" width="22" height="22" fill="#c4c4c4"/><circle cx="36" cy="47" r="7.5" fill="#2a3a60"/><text x="32.3" y="51.5" font-family="Liberation Sans" font-weight="bold" font-size="11" fill="#e0c080">Z</text><path d="M52 47l17-7v14z" fill="#f05020"/><path d="M52 47l17 7v-7z" fill="#b83010"/><text x="71" y="52" font-family="Liberation Sans" font-weight="bold" font-size="12" fill="#000">X</text><path d="M36 63l-7 19h14z" fill="#555"/><path d="M36 63l7 19h-7z" fill="#333"/></svg><svg style="left:0;top:0" width="1920" height="1032"><defs><clipPath id="sc"><rect x="1585" y="150" width="40" height="40"/></clipPath><radialGradient id="sg" cx="0.6" cy="0.4" r="0.6"><stop offset="0" stop-color="#fff060"/><stop offset="1" stop-color="#ffc800"/></radialGradient></defs><g clip-path="url(#sc)"><path d="M1628.0 157.9L1639.0 163.8L1626.5 162.5z" fill="#ffd010"/><path d="M1626.5 162.5L1633.8 172.7L1623.2 166.1z" fill="#ffd010"/><path d="M1623.1 166.1L1625.4 178.4L1618.7 167.9z" fill="#ffd010"/><path d="M1618.6 167.9L1615.3 179.9L1613.8 167.5z" fill="#ffd010"/><path d="M1613.7 167.5L1605.5 176.9L1609.5 165.1z" fill="#ffd010"/><path d="M1609.5 165.0L1598.0 169.9L1606.8 161.1z" fill="#ffd010"/><path d="M1606.7 161.0L1594.3 160.4L1606.0 156.2z" fill="#ffd010"/><path d="M1606.0 156.1L1595.0 150.2L1607.5 151.5z" fill="#ffd010"/><path d="M1607.5 151.5L1600.2 141.3L1610.8 147.9z" fill="#ffd010"/><path d="M1610.9 147.9L1608.6 135.6L1615.3 146.1z" fill="#ffd010"/><path d="M1615.4 146.1L1618.7 134.1L1620.2 146.5z" fill="#ffd010"/><path d="M1620.3 146.5L1628.5 137.1L1624.5 148.9z" fill="#ffd010"/><path d="M1624.5 149.0L1636.0 144.1L1627.2 152.9z" fill="#ffd010"/><path d="M1627.3 153.0L1639.7 153.6L1628.0 157.8z" fill="#ffd010"/><circle cx="1617" cy="157" r="14" fill="url(#sg)"/></g></svg><div class="t" style="left:251px;top:758px;font-size:7.4px;color:#333;font-weight:bold;letter-spacing:1.07px">555 fps | 1.800 ms/f</div><div class="ab" style="left:1459px;top:759px;width:166px;height:10px;background:rgba(255,255,255,0.45)"></div><div class="t" style="left:1459px;top:758px;font-size:7.4px;color:#444;font-weight:bold;letter-spacing:0.9px">e/SSE2 | OpenGL v4.6.0 NVIDIA 546.59</div><div class="ab" style="left:248px;top:768px;width:1377px;height:31px;background:#f0f0f0"></div><div class="t" style="left:248px;top:778px;font-size:11.3px;color:#3a3a48;">(2,848.15 | 1,431.98 | 795.00)</div><div class="ab" style="left:1511px;top:771px;width:33px;height:25px;background:#fff;border:1px solid #c8c8c8"></div><svg style="left:1515px;top:775px;" width="20" height="18" viewBox="0 0 20 18"><circle cx="8" cy="8" r="7" fill="#5aa0e0" stroke="#3a6aa0"/><path d="M3 5c3 1 5-2 8 0s2 5 0 6" fill="#70c050"/><ellipse cx="12" cy="13" rx="5" ry="3.5" fill="#dde" stroke="#335"/><circle cx="12" cy="13" r="1.6" fill="#335"/></svg><svg style="left:1533px;top:782px;" width="7" height="4" viewBox="0 0 7 4"><path d="M0 0h7L3.5 4z" fill="#666"/></svg><div class="ab" style="left:1550px;top:771px;width:75px;height:25px;background:#fff;border:1px solid #c8c8c8"></div><svg style="left:1553px;top:775px;" width="17" height="17" viewBox="0 0 17 17"><rect x="0.5" y="0.5" width="15" height="15" fill="#9ad080" stroke="#6a9a50"/><rect x="0.5" y="5.5" width="15" height="5" fill="#b8e090"/><rect x="0.5" y="10.5" width="15" height="5" fill="#f8e890" stroke="#6a9a50"/></svg><div class="t" style="left:1573px;top:778px;font-size:11.4px;color:#3a3a48;">Legend</div><svg style="left:1613px;top:782px;" width="7" height="4" viewBox="0 0 7 4"><path d="M0 0h7L3.5 4z" fill="#666"/></svg><div class="ab" style="left:248px;top:799px;width:1377px;height:225px;background:#f0f0f0;border:1px solid #d4d4d4"></div><div class="ab" style="left:249px;top:826px;width:1375px;height:1px;background:#d8d8d8"></div><div class="t" style="left:257px;top:806px;font-size:11.6px;color:#3c3c48;font-weight:bold;">Properties</div><svg style="left:1605px;top:806px;" width="8" height="11" viewBox="0 0 8 11"><rect x="1.5" y="0.5" width="5" height="6" fill="none" stroke="#666"/><rect x="0" y="6" width="8" height="1.2" fill="#666"/><rect x="3.5" y="7" width="1.2" height="4" fill="#666"/><rect x="4" y="1" width="1" height="5" fill="#666"/></svg><div class="t" style="left:885px;top:904px;font-size:11.6px;color:#3c3c48;font-weight:bold;">No Data to Display</div><div class="ab" style="left:249px;top:994px;width:1375px;height:1px;background:#d4d4d4"></div><div class="ab" style="left:249px;top:993px;width:66px;height:3px;background:#1a66cc"></div><div class="t" style="left:257px;top:1003px;font-size:11px;color:#3a3a48;">Properties</div><div class="t" style="left:323px;top:1003px;font-size:11px;color:#3a3a48;">Reserves</div><div class="t" style="left:385px;top:1003px;font-size:11px;color:#3a3a48;">Error List</div><svg style="left:1552px;top:598px;" width="73" height="28" viewBox="0 0 73 28"><path d="M2 12.5h48" stroke="#f04810" stroke-width="6" stroke-linecap="round"/><path d="M45 1l27 12L45 26z" fill="#f04810"/></svg><div class="ab" style="left:1625px;top:118px;width:295px;height:914px;background:#dedede"></div><div class="ab" style="left:1913px;top:118px;width:1px;height:910px;background:#c4c4c4"></div><div class="ab" style="left:1916px;top:118px;width:1px;height:910px;background:#c4c4c4"></div><div class="ab" style="left:1630px;top:119px;width:282px;height:905px;background:#f0f0f0;border:1px solid #d0d0d0"></div><div class="t" style="left:1638px;top:125px;font-size:11.6px;color:#3c3c48;font-weight:bold;">Display</div><svg style="left:1892px;top:126px;" width="8" height="11" viewBox="0 0 8 11"><rect x="1.5" y="0.5" width="5" height="6" fill="none" stroke="#666"/><rect x="0" y="6" width="8" height="1.2" fill="#666"/><rect x="3.5" y="7" width="1.2" height="4" fill="#666"/><rect x="4" y="1" width="1" height="5" fill="#666"/></svg><div class="ab" style="left:1631px;top:145px;width:279px;height:1px;background:#d8d8d8"></div><div class="ab" style="left:1632px;top:148px;width:277px;height:127px;background:#f0f0f0;border:1px solid #c8c8c8"></div><div class="ab" style="left:1633px;top:149px;width:275px;height:25px;background:#dcdcdc"></div><div class="t" style="left:1644px;top:154px;font-size:11.6px;color:#3c3c48;font-weight:bold;">Labels</div><div class="t" style="right:207px;top:181px;font-size:10.6px;color:#3a3a48">Labels</div><div class="ab" style="left:1726px;top:176px;width:30px;height:22px;background:#fff;border:1px solid #c4c4c4"></div><svg style="left:1732px;top:180px;" width="18" height="14" viewBox="0 0 18 14"><path d="M1 7C4 2 14 2 17 7C14 12 4 12 1 7z" fill="#fff" stroke="#3a4a70" stroke-width="1.3"/><circle cx="9" cy="7" r="3.2" fill="#6a7ab8"/><circle cx="9" cy="7" r="1.4" fill="#3a4a70"/><path d="M2 6C5 3 13 3 16 6" stroke="#d08030" stroke-width="0.8" fill="none"/><path d="M3 13L15 1" stroke="#d02020" stroke-width="1.6"/></svg><div class="t" style="right:207px;top:206px;font-size:10.6px;color:#3a3a48">Text</div><div class="ab" style="left:1726px;top:202px;width:179px;height:21px;background:#fff;border:1px solid #c4c4c4"></div><div class="t" style="left:1731px;top:206px;font-size:11.4px;color:#f08a10;font-weight:bold;">ExportDesc</div><svg style="left:1873px;top:211px;" width="7" height="4" viewBox="0 0 7 4"><path d="M0 0h7L3.5 4z" fill="#555"/></svg><svg style="left:1886px;top:204px;" width="16" height="16" viewBox="0 0 16 16"><polygon points="15.20,8.00 12.80,9.99 13.09,13.09 9.99,12.80 8.00,15.20 6.01,12.80 2.91,13.09 3.20,9.99 0.80,8.00 3.20,6.01 2.91,2.91 6.01,3.20 8.00,0.80 9.99,3.20 13.09,2.91 12.80,6.01" fill="#e8ecf4" stroke="#4a5a7a" stroke-width="1" stroke-linejoin="round"/><circle cx="8" cy="8" r="2.4" fill="#fff" stroke="#4a5a7a" stroke-width="1"/></svg><div class="t" style="right:207px;top:232px;font-size:10.6px;color:#3a3a48">Back Color</div><div class="ab" style="left:1726px;top:228px;width:50px;height:21px;background:#fff;border:1px solid #c4c4c4"></div><div class="ab" style="left:1730px;top:232px;width:27px;height:13px;background:repeating-linear-gradient(45deg,#f4e8d8 0 3px,#fff6ea 3px 6px);border:1px solid #d8c8b0"></div><svg style="left:1762px;top:237px;" width="7" height="4" viewBox="0 0 7 4"><path d="M0 0h7L3.5 4z" fill="#555"/></svg><div class="t" style="left:1779px;top:232px;font-size:11px;color:#3a3a48;">Fore Color</div><div class="ab" style="left:1836px;top:228px;width:69px;height:21px;background:#fff;border:1px solid #c4c4c4"></div><div class="ab" style="left:1839px;top:231px;width:47px;height:15px;background:#000"></div><svg style="left:1891px;top:237px;" width="7" height="4" viewBox="0 0 7 4"><path d="M0 0h7L3.5 4z" fill="#555"/></svg><div class="t" style="right:207px;top:256px;font-size:10.6px;color:#3a3a48">Font</div><div class="ab" style="left:1726px;top:252px;width:114px;height:21px;background:#fff;border:1px solid #c4c4c4"></div><div class="t" style="left:1731px;top:256px;font-size:11px;color:#3a3a48;">Tahoma</div><svg style="left:1826px;top:261px;" width="7" height="4" viewBox="0 0 7 4"><path d="M0 0h7L3.5 4z" fill="#555"/></svg><div class="t" style="left:1846px;top:256px;font-size:11px;color:#3a3a48;">Size</div><div class="ab" style="left:1870px;top:252px;width:35px;height:21px;background:#fff;border:1px solid #c4c4c4"></div><div class="t" style="left:1877px;top:256px;font-size:11px;color:#3a3a48;">8</div><svg style="left:1892px;top:255px;" width="7" height="14" viewBox="0 0 7 14"><path d="M0 4L3.5 0L7 4z M0 10L3.5 14L7 10z" fill="#555"/></svg><div class="ab" style="left:1632px;top:279px;width:277px;height:129px;background:#f0f0f0;border:1px solid #c8c8c8"></div><div class="ab" style="left:1633px;top:280px;width:275px;height:25px;background:#dcdcdc"></div><div class="t" style="left:1644px;top:285px;font-size:11.6px;color:#3c3c48;font-weight:bold;">Blasts / Digs</div><div class="t" style="right:207px;top:311px;font-size:10.6px;color:#3a3a48">Display Type</div><div class="ab" style="left:1726px;top:307px;width:179px;height:21px;background:#fff;border:1px solid #c4c4c4"></div><div class="t" style="left:1731px;top:311px;font-size:11px;color:#3a3a48;">Blasts</div><svg style="left:1891px;top:316px;" width="7" height="4" viewBox="0 0 7 4"><path d="M0 0h7L3.5 4z" fill="#555"/></svg><div class="t" style="right:207px;top:336px;font-size:10.6px;color:#3a3a48">Polygons</div><div class="ab" style="left:1726px;top:331px;width:30px;height:22px;background:#fff;border:1px solid #c4c4c4"></div><svg style="left:1732px;top:335px;" width="18" height="14" viewBox="0 0 18 14"><path d="M1 7C4 2 14 2 17 7C14 12 4 12 1 7z" fill="#fff" stroke="#3a4a70" stroke-width="1.3"/><circle cx="9" cy="7" r="3.2" fill="#6a7ab8"/><circle cx="9" cy="7" r="1.4" fill="#3a4a70"/><path d="M2 6C5 3 13 3 16 6" stroke="#d08030" stroke-width="0.8" fill="none"/></svg><div class="t" style="left:1770px;top:336px;font-size:11px;color:#3a3a48;">Opacity</div><div class="ab" style="left:1820px;top:339px;width:77px;height:3px;background:#c8c8c8;border-radius:2px"></div><div class="ab" style="left:1820px;top:339px;width:75px;height:3px;background:#1a66cc;border-radius:2px"></div><div class="ab" style="left:1890px;top:335px;width:11px;height:11px;background:#1a66cc;border-radius:50%"></div><div class="t" style="right:207px;top:362px;font-size:10.6px;color:#3a3a48">Solids</div><div class="ab" style="left:1726px;top:357px;width:30px;height:22px;background:#fff;border:1px solid #c4c4c4"></div><svg style="left:1732px;top:361px;" width="18" height="14" viewBox="0 0 18 14"><path d="M1 7C4 2 14 2 17 7C14 12 4 12 1 7z" fill="#fff" stroke="#3a4a70" stroke-width="1.3"/><circle cx="9" cy="7" r="3.2" fill="#6a7ab8"/><circle cx="9" cy="7" r="1.4" fill="#3a4a70"/><path d="M2 6C5 3 13 3 16 6" stroke="#d08030" stroke-width="0.8" fill="none"/></svg><div class="t" style="left:1770px;top:362px;font-size:11px;color:#3a3a48;">Opacity</div><div class="ab" style="left:1825px;top:365px;width:72px;height:3px;background:#c8c8c8;border-radius:2px"></div><div class="ab" style="left:1825px;top:365px;width:1px;height:3px;background:#1a66cc;border-radius:2px"></div><div class="ab" style="left:1821px;top:361px;width:11px;height:11px;background:#1a66cc;border-radius:50%"></div><div class="t" style="right:207px;top:387px;font-size:10.6px;color:#3a3a48">Shading</div><div class="ab" style="left:1726px;top:383px;width:179px;height:21px;background:#fff;border:1px solid #c4c4c4"></div><div class="t" style="left:1731px;top:387px;font-size:11.4px;color:#f08a10;font-weight:bold;">Blast Type</div><svg style="left:1873px;top:392px;" width="7" height="4" viewBox="0 0 7 4"><path d="M0 0h7L3.5 4z" fill="#555"/></svg><svg style="left:1886px;top:385px;" width="16" height="16" viewBox="0 0 16 16"><polygon points="15.20,8.00 12.80,9.99 13.09,13.09 9.99,12.80 8.00,15.20 6.01,12.80 2.91,13.09 3.20,9.99 0.80,8.00 3.20,6.01 2.91,2.91 6.01,3.20 8.00,0.80 9.99,3.20 13.09,2.91 12.80,6.01" fill="#e8ecf4" stroke="#4a5a7a" stroke-width="1" stroke-linejoin="round"/><circle cx="8" cy="8" r="2.4" fill="#fff" stroke="#4a5a7a" stroke-width="1"/></svg><div class="ab" style="left:1632px;top:412px;width:277px;height:53px;background:#f0f0f0;border:1px solid #c8c8c8"></div><div class="ab" style="left:1633px;top:413px;width:275px;height:25px;background:#dcdcdc"></div><div class="t" style="left:1644px;top:418px;font-size:11.6px;color:#3c3c48;font-weight:bold;">Construction Lines</div><div class="t" style="right:207px;top:445px;font-size:10.6px;color:#3a3a48">Lines</div><div class="ab" style="left:1726px;top:440px;width:30px;height:22px;background:#fff;border:1px solid #c4c4c4"></div><svg style="left:1732px;top:444px;" width="18" height="14" viewBox="0 0 18 14"><path d="M1 7C4 2 14 2 17 7C14 12 4 12 1 7z" fill="#fff" stroke="#3a4a70" stroke-width="1.3"/><circle cx="9" cy="7" r="3.2" fill="#6a7ab8"/><circle cx="9" cy="7" r="1.4" fill="#3a4a70"/><path d="M2 6C5 3 13 3 16 6" stroke="#d08030" stroke-width="0.8" fill="none"/></svg><div class="ab" style="left:1761px;top:440px;width:30px;height:22px;background:#fff;border:1px solid #c4c4c4"></div><svg style="left:1767px;top:444px;" width="18" height="14" viewBox="0 0 18 14"><path d="M1 7C4 2 14 2 17 7C14 12 4 12 1 7z" fill="#fff" stroke="#3a4a70" stroke-width="1.3"/><circle cx="9" cy="7" r="3.2" fill="#6a7ab8"/><circle cx="9" cy="7" r="1.4" fill="#3a4a70"/><path d="M2 6C5 3 13 3 16 6" stroke="#d08030" stroke-width="0.8" fill="none"/><path d="M3 13L15 1" stroke="#d02020" stroke-width="1.6"/></svg><div class="t" style="left:1796px;top:445px;font-size:11px;color:#3a3a48;">Extrusion</div><div class="ab" style="left:1632px;top:469px;width:277px;height:182px;background:#f0f0f0;border:1px solid #c8c8c8"></div><div class="ab" style="left:1633px;top:470px;width:275px;height:25px;background:#dcdcdc"></div><div class="t" style="left:1644px;top:475px;font-size:11.6px;color:#3c3c48;font-weight:bold;">Block Model</div><div class="t" style="right:207px;top:502px;font-size:10.6px;color:#3a3a48">Blocks</div><div class="ab" style="left:1726px;top:497px;width:30px;height:22px;background:#fff;border:1px solid #c4c4c4"></div><svg style="left:1732px;top:501px;" width="18" height="14" viewBox="0 0 18 14"><path d="M1 7C4 2 14 2 17 7C14 12 4 12 1 7z" fill="#fff" stroke="#3a4a70" stroke-width="1.3"/><circle cx="9" cy="7" r="3.2" fill="#6a7ab8"/><circle cx="9" cy="7" r="1.4" fill="#3a4a70"/><path d="M2 6C5 3 13 3 16 6" stroke="#d08030" stroke-width="0.8" fill="none"/></svg><div class="t" style="right:207px;top:528px;font-size:10.6px;color:#3a3a48">Clip Height</div><div class="ab" style="left:1732px;top:531px;width:166px;height:3px;background:#c8c8c8;border-radius:2px"></div><div class="ab" style="left:1732px;top:531px;width:82px;height:3px;background:#1a66cc;border-radius:2px"></div><div class="ab" style="left:1809px;top:527px;width:11px;height:11px;background:#1a66cc;border-radius:50%"></div><div class="t" style="right:207px;top:553px;font-size:10.6px;color:#3a3a48">Block Scale Type</div><div class="ab" style="left:1726px;top:549px;width:179px;height:21px;background:#fff;border:1px solid #c4c4c4"></div><div class="t" style="left:1731px;top:553px;font-size:11px;color:#3a3a48;">Uniform</div><svg style="left:1891px;top:558px;" width="7" height="4" viewBox="0 0 7 4"><path d="M0 0h7L3.5 4z" fill="#555"/></svg><div class="t" style="right:207px;top:578px;font-size:10.6px;color:#3a3a48">Block Scale</div><div class="ab" style="left:1732px;top:581px;width:166px;height:3px;background:#c8c8c8;border-radius:2px"></div><div class="ab" style="left:1732px;top:581px;width:163px;height:3px;background:#1a66cc;border-radius:2px"></div><div class="ab" style="left:1890px;top:577px;width:11px;height:11px;background:#1a66cc;border-radius:50%"></div><div class="t" style="right:207px;top:604px;font-size:10.6px;color:#3a3a48">Constraints</div><div class="ab" style="left:1726px;top:600px;width:179px;height:21px;background:#fff;border:1px solid #c4c4c4"></div><div class="t" style="left:1731px;top:604px;font-size:11.4px;color:#f08a10;font-weight:bold;">Fe lessequals 55</div><svg style="left:1873px;top:609px;" width="7" height="4" viewBox="0 0 7 4"><path d="M0 0h7L3.5 4z" fill="#555"/></svg><svg style="left:1886px;top:602px;" width="16" height="16" viewBox="0 0 16 16"><polygon points="15.20,8.00 12.80,9.99 13.09,13.09 9.99,12.80 8.00,15.20 6.01,12.80 2.91,13.09 3.20,9.99 0.80,8.00 3.20,6.01 2.91,2.91 6.01,3.20 8.00,0.80 9.99,3.20 13.09,2.91 12.80,6.01" fill="#e8ecf4" stroke="#4a5a7a" stroke-width="1" stroke-linejoin="round"/><circle cx="8" cy="8" r="2.4" fill="#fff" stroke="#4a5a7a" stroke-width="1"/></svg><div class="ab" style="left:1882px;top:598px;width:26px;height:24px;border:2.5px solid #ee3a3a"></div><div class="t" style="right:207px;top:630px;font-size:10.6px;color:#3a3a48">Shading</div><div class="ab" style="left:1726px;top:626px;width:179px;height:21px;background:#fff;border:1px solid #c4c4c4"></div><div class="t" style="left:1731px;top:630px;font-size:11.4px;color:#f08a10;font-weight:bold;">Materials</div><svg style="left:1873px;top:635px;" width="7" height="4" viewBox="0 0 7 4"><path d="M0 0h7L3.5 4z" fill="#555"/></svg><svg style="left:1886px;top:628px;" width="16" height="16" viewBox="0 0 16 16"><polygon points="15.20,8.00 12.80,9.99 13.09,13.09 9.99,12.80 8.00,15.20 6.01,12.80 2.91,13.09 3.20,9.99 0.80,8.00 3.20,6.01 2.91,2.91 6.01,3.20 8.00,0.80 9.99,3.20 13.09,2.91 12.80,6.01" fill="#e8ecf4" stroke="#4a5a7a" stroke-width="1" stroke-linejoin="round"/><circle cx="8" cy="8" r="2.4" fill="#fff" stroke="#4a5a7a" stroke-width="1"/></svg><div class="ab" style="left:1632px;top:655px;width:277px;height:77px;background:#f0f0f0;border:1px solid #c8c8c8"></div><div class="ab" style="left:1633px;top:656px;width:275px;height:25px;background:#dcdcdc"></div><div class="t" style="left:1644px;top:661px;font-size:11.6px;color:#9a9a9e;font-weight:bold;">Cash Flow</div><div class="t" style="right:207px;top:688px;font-size:10.6px;color:#9a9a9e">Cash Flow</div><div class="ab" style="left:1726px;top:683px;width:30px;height:22px;background:#fff;border:1px solid #c4c4c4"></div><svg style="left:1732px;top:687px;" width="18" height="14" viewBox="0 0 18 14"><path d="M1 7C4 2 14 2 17 7C14 12 4 12 1 7z" fill="#fff" stroke="#9a9a9a" stroke-width="1.3"/><circle cx="9" cy="7" r="3.2" fill="#aaa"/><circle cx="9" cy="7" r="1.4" fill="#9a9a9a"/></svg><div class="t" style="right:207px;top:713px;font-size:10.6px;color:#9a9a9e">Font</div><div class="ab" style="left:1726px;top:709px;width:114px;height:21px;background:#f0f0f0;border:1px solid #c4c4c4"></div><div class="t" style="left:1731px;top:713px;font-size:11px;color:#9a9a9e;">Tahoma</div><svg style="left:1826px;top:718px;" width="7" height="4" viewBox="0 0 7 4"><path d="M0 0h7L3.5 4z" fill="#aaa"/></svg><div class="t" style="left:1846px;top:713px;font-size:11px;color:#9a9a9e;">Size</div><div class="ab" style="left:1870px;top:709px;width:35px;height:21px;background:#f0f0f0;border:1px solid #c4c4c4"></div><div class="t" style="left:1876px;top:712px;font-size:11px;color:#9a9a9e;">...</div><svg style="left:1892px;top:712px;" width="7" height="14" viewBox="0 0 7 14"><path d="M0 4L3.5 0L7 4z M0 10L3.5 14L7 10z" fill="#aaa"/></svg><div class="ab" style="left:1632px;top:736px;width:277px;height:256px;background:#f0f0f0;border:1px solid #c8c8c8"></div><div class="ab" style="left:1633px;top:737px;width:275px;height:25px;background:#dcdcdc"></div><div class="t" style="left:1644px;top:742px;font-size:11.6px;color:#3c3c48;font-weight:bold;">Other Entities</div><div class="ab" style="left:1637px;top:767px;width:267px;height:219px;background:#fff;border:1px solid #c4c4c4"></div><div class="ab" style="left:1638px;top:768px;width:265px;height:25px;background:#f0f0f0"></div><div class="ab" style="left:1638px;top:793px;width:265px;height:1px;background:#d8d8d8"></div><div class="t" style="left:1643px;top:774px;font-size:11px;color:#3a3a48;">Name</div><div class="ab" style="left:1842px;top:768px;width:1px;height:110px;background:#d8d8d8"></div><div class="ab" style="left:1871px;top:768px;width:1px;height:110px;background:#d8d8d8"></div><svg style="left:1848px;top:773px;" width="18" height="14" viewBox="0 0 18 14"><path d="M1 7C4 2 14 2 17 7C14 12 4 12 1 7z" fill="#fff" stroke="#3a4a70" stroke-width="1.3"/><circle cx="9" cy="7" r="3.2" fill="#6a7ab8"/><circle cx="9" cy="7" r="1.4" fill="#3a4a70"/><path d="M2 6C5 3 13 3 16 6" stroke="#d08030" stroke-width="0.8" fill="none"/></svg><svg style="left:1879px;top:772px;" width="17" height="17" viewBox="0 0 17 17"><defs><radialGradient id="cw" cx="50%" cy="45%" r="55%"><stop offset="0" stop-color="#fff"/><stop offset="0.55" stop-color="#fff" stop-opacity="0.4"/><stop offset="1" stop-color="#fff" stop-opacity="0"/></radialGradient></defs><path d="M8.5 8.5L8.5 1A7.5 7.5 0 0 1 15 4.75z" fill="#f8e030"/><path d="M8.5 8.5L15 4.75A7.5 7.5 0 0 1 15 12.25z" fill="#f06030"/><path d="M8.5 8.5L15 12.25A7.5 7.5 0 0 1 8.5 16z" fill="#e040c0"/><path d="M8.5 8.5L8.5 16A7.5 7.5 0 0 1 2 12.25z" fill="#8050f0"/><path d="M8.5 8.5L2 12.25A7.5 7.5 0 0 1 2 4.75z" fill="#40a0f0"/><path d="M8.5 8.5L2 4.75A7.5 7.5 0 0 1 8.5 1z" fill="#50e070"/><circle cx="8.5" cy="8.5" r="7.5" fill="url(#cw)"/></svg><div class="ab" style="left:1638px;top:794px;width:204px;height:20px;background:#dcdcdc"></div><div class="ab" style="left:1638px;top:814px;width:265px;height:1px;background:#d8d8d8"></div><div class="t" style="left:1643px;top:798px;font-size:11px;color:#3a3a48;">Blast Designs</div><svg style="left:1848px;top:797px;" width="18" height="14" viewBox="0 0 18 14"><path d="M1 7C4 2 14 2 17 7C14 12 4 12 1 7z" fill="#fff" stroke="#3a4a70" stroke-width="1.3"/><circle cx="9" cy="7" r="3.2" fill="#6a7ab8"/><circle cx="9" cy="7" r="1.4" fill="#3a4a70"/><path d="M2 6C5 3 13 3 16 6" stroke="#d08030" stroke-width="0.8" fill="none"/></svg><div class="ab" style="left:1875px;top:795px;width:26px;height:18px;background:#e8f0f8;border:1px solid #999;background-image:radial-gradient(#6ab0d8 40%,transparent 45%);background-size:8px 8px"></div><div class="ab" style="left:1638px;top:835px;width:265px;height:1px;background:#d8d8d8"></div><div class="t" style="left:1643px;top:819px;font-size:11px;color:#3a3a48;">Silhouette</div><svg style="left:1848px;top:818px;" width="18" height="14" viewBox="0 0 18 14"><path d="M1 7C4 2 14 2 17 7C14 12 4 12 1 7z" fill="#fff" stroke="#3a4a70" stroke-width="1.3"/><circle cx="9" cy="7" r="3.2" fill="#6a7ab8"/><circle cx="9" cy="7" r="1.4" fill="#3a4a70"/><path d="M2 6C5 3 13 3 16 6" stroke="#d08030" stroke-width="0.8" fill="none"/></svg><div class="ab" style="left:1875px;top:816px;width:26px;height:18px;background:#808080;border:1px solid #999"></div><div class="ab" style="left:1638px;top:856px;width:265px;height:1px;background:#d8d8d8"></div><div class="t" style="left:1643px;top:840px;font-size:11px;color:#3a3a48;">Expanded Silhouette</div><svg style="left:1848px;top:839px;" width="18" height="14" viewBox="0 0 18 14"><path d="M1 7C4 2 14 2 17 7C14 12 4 12 1 7z" fill="#fff" stroke="#3a4a70" stroke-width="1.3"/><circle cx="9" cy="7" r="3.2" fill="#6a7ab8"/><circle cx="9" cy="7" r="1.4" fill="#3a4a70"/><path d="M2 6C5 3 13 3 16 6" stroke="#d08030" stroke-width="0.8" fill="none"/></svg><div class="ab" style="left:1875px;top:837px;width:26px;height:18px;background:#808080;border:1px solid #999"></div><div class="ab" style="left:1638px;top:877px;width:265px;height:1px;background:#d8d8d8"></div><div class="t" style="left:1643px;top:861px;font-size:11px;color:#3a3a48;">Bench Below</div><svg style="left:1848px;top:860px;" width="18" height="14" viewBox="0 0 18 14"><path d="M1 7C4 2 14 2 17 7C14 12 4 12 1 7z" fill="#fff" stroke="#3a4a70" stroke-width="1.3"/><circle cx="9" cy="7" r="3.2" fill="#6a7ab8"/><circle cx="9" cy="7" r="1.4" fill="#3a4a70"/><path d="M2 6C5 3 13 3 16 6" stroke="#d08030" stroke-width="0.8" fill="none"/><path d="M3 13L15 1" stroke="#d02020" stroke-width="1.6"/></svg><div class="ab" style="left:1875px;top:858px;width:26px;height:18px;background:#ffff00;border:1px solid #999"></div><div class="ab" style="left:1631px;top:994px;width:279px;height:1px;background:#d4d4d4"></div><div class="ab" style="left:1630px;top:993px;width:51px;height:3px;background:#1a66cc"></div><div class="t" style="left:1638px;top:1003px;font-size:11px;color:#3a3a48;">Display</div><div class="t" style="left:1689px;top:1003px;font-size:11px;color:#3a3a48;">Layers</div><div class="t" style="left:1738px;top:1003px;font-size:11px;color:#3a3a48;">History</div><div class="ab" style="left:431px;top:152px;width:1028px;height:737px;background:#f0f0f0;box-shadow:0 12px 38px 0px rgba(0,0,0,0.32);border:1px solid #c8c8c8;border-top:none"></div><div class="ab" style="left:431px;top:152px;width:1028px;height:30px;background:#464646"></div><div class="t" style="left:441px;top:161px;font-size:11.6px;color:#fff;font-weight:bold;">Configure Constraints</div><div class="ab" style="left:1393px;top:163px;width:8px;height:8px;border:1.3px solid #fff"></div><svg style="left:1435px;top:163px;" width="9" height="9" viewBox="0 0 9 9"><path d="M0.5 0.5l8 8M8.5 0.5l-8 8" stroke="#fff" stroke-width="1.3"/></svg><div class="ab" style="left:433px;top:184px;width:1024px;height:677px;border:1px solid #c4c4c4"></div><div class="ab" style="left:437px;top:188px;width:238px;height:669px;border:1px solid #c4c4c4"></div><div class="ab" style="left:438px;top:190px;width:28px;height:24px;background:#e0e0e0"></div><svg style="left:441px;top:193px;" width="22" height="18" viewBox="0 0 22 18"><defs><linearGradient id="pg" x1="0" y1="0" x2="0" y2="1"><stop offset="0" stop-color="#a8d0f8"/><stop offset="1" stop-color="#4a88d0"/></linearGradient></defs><circle cx="11" cy="9" r="7.8" fill="url(#pg)" stroke="#3a70b8" stroke-width="1"/><path d="M11 4.5v9M6.5 9h9" stroke="#fff" stroke-width="2.6"/></svg><div class="ab" style="left:438px;top:190px;width:28px;height:24px;border:2.5px solid #ee3a3a;box-shadow:0 1px 3px rgba(0,0,0,0.4)"></div><div class="ab" style="left:468px;top:191px;width:24px;height:22px;background:#fff;border:1px solid #c8c8c8"></div><svg style="left:471px;top:193px;" width="18" height="18" viewBox="0 0 18 18"><defs><linearGradient id="rg" x1="0" y1="0" x2="0" y2="1"><stop offset="0" stop-color="#f07070"/><stop offset="1" stop-color="#b81818"/></linearGradient></defs><circle cx="9" cy="9" r="8" fill="url(#rg)" stroke="#a01010" stroke-width="0.8"/><path d="M5.5 5.5l7 7M12.5 5.5l-7 7" stroke="#fff" stroke-width="2.6"/></svg><div class="ab" style="left:506px;top:191px;width:24px;height:22px;background:#fff;border:1px solid #c8c8c8"></div><svg style="left:509px;top:193px;" width="18" height="18" viewBox="0 0 18 18"><path d="M9 1.5L16 9h-4v7H6V9H2z" fill="#b8b8b8" stroke="#999" stroke-width="0.8"/></svg><div class="ab" style="left:534px;top:191px;width:24px;height:22px;background:#fff;border:1px solid #c8c8c8"></div><svg style="left:537px;top:193px;" width="18" height="18" viewBox="0 0 18 18"><path d="M9 16.5L16 9h-4V2H6v7H2z" fill="#b8b8b8" stroke="#999" stroke-width="0.8"/></svg><div class="ab" style="left:572px;top:191px;width:24px;height:22px;background:#fff;border:1px solid #c8c8c8"></div><svg style="left:575px;top:193px;" width="18" height="18" viewBox="0 0 18 18"><path d="M1 4h6l1.5 1.5H15V15H1z" fill="#d89020" stroke="#b07010" stroke-width="0.8"/><path d="M3 8h14l-2.5 7H1z" fill="#f8c850" stroke="#c08020" stroke-width="0.8"/></svg><div class="ab" style="left:600px;top:191px;width:24px;height:22px;background:#fff;border:1px solid #c8c8c8"></div><svg style="left:603px;top:193px;" width="18" height="18" viewBox="0 0 18 18"><rect x="1.5" y="1.5" width="15" height="15" rx="1" fill="#1a2a50"/><rect x="4.5" y="2" width="9" height="5" fill="#fff"/><rect x="11" y="3" width="1.6" height="3" fill="#1a2a50"/><rect x="4" y="10" width="10" height="6" fill="#6ab0e8"/><rect x="4" y="12.5" width="10" height="1.2" fill="#fff"/></svg><div class="ab" style="left:628px;top:191px;width:24px;height:22px;background:#fff;border:1px solid #c8c8c8"></div><svg style="left:631px;top:193px;" width="18" height="18" viewBox="0 0 18 18"><rect x="5" y="1" width="12" height="12" fill="#2a3a60"/><rect x="1.5" y="4.5" width="12" height="12" rx="1" fill="#3a5080" stroke="#1a2a50" stroke-width="0.8"/><rect x="4" y="5" width="7" height="3.5" fill="#fff"/><rect x="3.5" y="11" width="8" height="5" fill="#7ab8f0"/></svg><div class="ab" style="left:440px;top:217px;width:232px;height:637px;background:#fff;border:1px solid #c4c4c4"></div><div class="ab" style="left:441px;top:218px;width:230px;height:24px;background:#f0f0f0"></div><div class="ab" style="left:441px;top:242px;width:230px;height:1px;background:#d4d4d4"></div><div class="ab" style="left:465px;top:218px;width:1px;height:46px;background:#d4d4d4"></div><div class="ab" style="left:466px;top:263px;width:205px;height:1px;background:#d4d4d4"></div><div class="t" style="left:471px;top:224px;font-size:11px;color:#3a3a48;">Name</div><svg style="left:447px;top:249px;" width="11" height="9" viewBox="0 0 11 9"><path d="M0.5 4.5h9M6 1l3.5 3.5L6 8" fill="none" stroke="#2a7ad8" stroke-width="1.1"/></svg><div class="t" style="left:471px;top:247px;font-size:10.6px;color:#3a3a48;">Fe lessequals 55</div><div class="ab" style="left:689px;top:189px;width:764px;height:668px;border:1px solid #c4c4c4"></div><div class="ab" style="left:703px;top:203px;width:55px;height:22px;background:#fff;border:1px solid #c4c4c4"></div><div class="t" style="left:729px;top:208px;font-size:11.4px;color:#3a3a48;">Test</div><svg style="left:709px;top:205px;" width="18" height="18" viewBox="0 0 18 18"><rect x="2" y="4" width="8" height="11" fill="#f0b040" stroke="#b07010" stroke-width="0.8"/><rect x="3" y="1" width="6" height="4" rx="1" fill="#fff" stroke="#888" stroke-width="0.8"/><circle cx="10" cy="14" r="3.5" fill="#c8d0f0" stroke="#3a4a90" stroke-width="1" stroke-dasharray="1.5 0.8"/></svg><div class="ab" style="left:772px;top:203px;width:58px;height:22px;background:#fff;border:1px solid #c4c4c4"></div><div class="t" style="left:797px;top:208px;font-size:11.4px;color:#3a3a48;">Undo</div><svg style="left:778px;top:205px;" width="18" height="18" viewBox="0 0 18 18"><path d="M16 15c0-6-4-8-9-8V4L1 8.5 7 13v-3c4 0 7 1 9 5z" fill="#a8c8f0" stroke="#4a78b8" stroke-width="0.8"/></svg><div class="ab" style="left:834px;top:203px;width:53px;height:22px;background:#fff;border:1px solid #c4c4c4"></div><div class="t" style="left:856px;top:208px;font-size:11.4px;color:#3a3a48;">Redo</div><svg style="left:837px;top:205px;" width="18" height="18" viewBox="0 0 18 18"><path d="M1 15c0-6 4-8 9-8V4l6 4.5L10 13v-3c-4 0-7 1-9 5z" fill="#a8c8f0" stroke="#4a78b8" stroke-width="0.8"/></svg><div class="ab" style="left:703px;top:229px;width:736px;height:415px;background:#fff;border:1px solid #a8a8a8"></div><div class="ab" style="left:1422px;top:230px;width:16px;height:396px;background:#f0f0f0"></div><svg style="left:1423px;top:231px;" width="13" height="15" viewBox="0 0 13 15"><path d="M1 6h11M1 8.5h11" stroke="#000" stroke-width="1.3"/><path d="M6.5 0.5v4M6.5 10v4.5" stroke="#000" stroke-width="1"/><path d="M4 2.5l2.5-2.5 2.5 2.5zM4 12l2.5 2.5 2.5-2.5z" fill="#000"/></svg><div class="ab" style="left:1429px;top:264px;width:2px;height:184px;background:#a0a0a0"></div><div class="ab" style="left:704px;top:626px;width:734px;height:17px;background:#f0f0f0"></div><svg style="left:707px;top:630px;" width="6" height="9" viewBox="0 0 6 9"><path d="M6 0v9L0 4.5z" fill="#a0a0a0"/></svg><svg style="left:1410px;top:630px;" width="6" height="9" viewBox="0 0 6 9"><path d="M0 0v9l6-4.5z" fill="#a0a0a0"/></svg><div class="t mono" style="right:1181px;top:232px;font-size:11.7px;line-height:14px;color:#2b91af">1</div><div class="t mono" style="right:1181px;top:249px;font-size:11.7px;line-height:14px;color:#2b91af">2</div><div class="t mono" style="left:759px;top:249px;font-size:11.7px;line-height:14px"><span style="color:#0000ff">using</span><span style="color:#000"> System;</span></div><div class="t mono" style="right:1181px;top:266px;font-size:11.7px;line-height:14px;color:#2b91af">3</div><div class="t mono" style="left:759px;top:266px;font-size:11.7px;line-height:14px"><span style="color:#0000ff">using</span><span style="color:#000"> System.Collections.Generic;</span></div><div class="t mono" style="right:1181px;top:283px;font-size:11.7px;line-height:14px;color:#2b91af">4</div><div class="t mono" style="left:759px;top:283px;font-size:11.7px;line-height:14px"><span style="color:#0000ff">using</span><span style="color:#000"> System.Text;</span></div><div class="t mono" style="right:1181px;top:300px;font-size:11.7px;line-height:14px;color:#2b91af">5</div><div class="t mono" style="left:759px;top:300px;font-size:11.7px;line-height:14px"><span style="color:#0000ff">using</span><span style="color:#000"> System.Linq;</span></div><div class="t mono" style="right:1181px;top:317px;font-size:11.7px;line-height:14px;color:#2b91af">6</div><div class="t mono" style="left:759px;top:317px;font-size:11.7px;line-height:14px"><span style="color:#0000ff">using</span><span style="color:#000"> Alastri.RR.Ui;</span></div><div class="t mono" style="right:1181px;top:334px;font-size:11.7px;line-height:14px;color:#2b91af">7</div><div class="t mono" style="left:759px;top:334px;font-size:11.7px;line-height:14px"><span style="color:#0000ff">using</span><span style="color:#000"> Alastri.RR.Service;</span></div><div class="t mono" style="right:1181px;top:351px;font-size:11.7px;line-height:14px;color:#2b91af">8</div><div class="t mono" style="right:1181px;top:368px;font-size:11.7px;line-height:14px;color:#2b91af">9</div><div class="t mono" style="left:759px;top:368px;font-size:11.7px;line-height:14px"><span style="color:#0000ff">public</span><span style="color:#000"> </span><span style="color:#0000ff">class</span><span style="color:#000"> CustomBlockConstraint : IBlockConstraint</span></div><div class="t mono" style="right:1181px;top:385px;font-size:11.7px;line-height:14px;color:#2b91af">10</div><div class="t mono" style="left:759px;top:385px;font-size:11.7px;line-height:14px"><span style="color:#000">{</span></div><div class="t mono" style="right:1181px;top:402px;font-size:11.7px;line-height:14px;color:#2b91af">11</div><div class="t mono" style="left:759px;top:402px;font-size:11.7px;line-height:14px"><span style="color:#000">    </span><span style="color:#0000ff">public</span><span style="color:#000"> </span><span style="color:#0000ff">bool</span><span style="color:#000"> IsVisible(BlockContext context)</span></div><div class="t mono" style="right:1181px;top:419px;font-size:11.7px;line-height:14px;color:#2b91af">12</div><div class="t mono" style="left:759px;top:419px;font-size:11.7px;line-height:14px"><span style="color:#000">    {</span></div><div class="t mono" style="right:1181px;top:436px;font-size:11.7px;line-height:14px;color:#2b91af">13</div><div class="t mono" style="left:759px;top:436px;font-size:11.7px;line-height:14px"><span style="color:#000">        </span><span style="color:#0000ff">if</span><span style="color:#000"> (context.N(</span><span style="color:#a31515">"DryTonnes.Fe"</span><span style="color:#000">) <= 55)</span></div><div class="t mono" style="right:1181px;top:453px;font-size:11.7px;line-height:14px;color:#2b91af">14</div><div class="t mono" style="left:759px;top:453px;font-size:11.7px;line-height:14px"><span style="color:#000">        {</span></div><div class="t mono" style="right:1181px;top:470px;font-size:11.7px;line-height:14px;color:#2b91af">15</div><div class="t mono" style="left:759px;top:470px;font-size:11.7px;line-height:14px"><span style="color:#000">        </span><span style="color:#0000ff">return</span><span style="color:#000"> </span><span style="color:#0000ff">true</span><span style="color:#000">;</span></div><div class="t mono" style="right:1181px;top:487px;font-size:11.7px;line-height:14px;color:#2b91af">16</div><div class="t mono" style="left:759px;top:487px;font-size:11.7px;line-height:14px"><span style="color:#000">        }</span></div><div class="t mono" style="right:1181px;top:504px;font-size:11.7px;line-height:14px;color:#2b91af">17</div><div class="t mono" style="left:759px;top:504px;font-size:11.7px;line-height:14px"><span style="color:#000">        </span><span style="color:#0000ff">return</span><span style="color:#000"> </span><span style="color:#0000ff">false</span><span style="color:#000">;</span></div><div class="t mono" style="right:1181px;top:521px;font-size:11.7px;line-height:14px;color:#2b91af">18</div><div class="t mono" style="right:1181px;top:538px;font-size:11.7px;line-height:14px;color:#2b91af">19</div><div class="t mono" style="left:759px;top:538px;font-size:11.7px;line-height:14px"><span style="color:#000">    }</span></div><div class="t mono" style="right:1181px;top:555px;font-size:11.7px;line-height:14px;color:#2b91af">20</div><div class="t mono" style="right:1181px;top:572px;font-size:11.7px;line-height:14px;color:#2b91af">21</div><div class="t mono" style="left:759px;top:572px;font-size:11.7px;line-height:14px"><span style="color:#000">}</span></div><div class="ab" style="left:753px;top:260px;width:1px;height:81px;background:#a0a0a0"></div><div class="ab" style="left:753px;top:340px;width:4px;height:1px;background:#a0a0a0"></div><div class="ab" style="left:753px;top:379px;width:1px;height:202px;background:#a0a0a0"></div><div class="ab" style="left:753px;top:580px;width:4px;height:1px;background:#a0a0a0"></div><div class="ab" style="left:753px;top:413px;width:1px;height:137px;background:#a0a0a0"></div><div class="ab" style="left:753px;top:549px;width:4px;height:1px;background:#a0a0a0"></div><div class="ab" style="left:753px;top:447px;width:1px;height:54px;background:#a0a0a0"></div><div class="ab" style="left:753px;top:500px;width:4px;height:1px;background:#a0a0a0"></div><svg style="left:749px;top:251px;" width="9" height="9" viewBox="0 0 9 9"><rect x="0.5" y="0.5" width="8" height="8" fill="#fff" stroke="#888"/><path d="M2 4.5h5" stroke="#333"/></svg><svg style="left:749px;top:370px;" width="9" height="9" viewBox="0 0 9 9"><rect x="0.5" y="0.5" width="8" height="8" fill="#fff" stroke="#888"/><path d="M2 4.5h5" stroke="#333"/></svg><svg style="left:749px;top:404px;" width="9" height="9" viewBox="0 0 9 9"><rect x="0.5" y="0.5" width="8" height="8" fill="#fff" stroke="#888"/><path d="M2 4.5h5" stroke="#333"/></svg><svg style="left:749px;top:438px;" width="9" height="9" viewBox="0 0 9 9"><rect x="0.5" y="0.5" width="8" height="8" fill="#fff" stroke="#888"/><path d="M2 4.5h5" stroke="#333"/></svg><div class="ab" style="left:703px;top:658px;width:736px;height:158px;border:1px solid #c4c4c4"></div><div class="ab" style="left:708px;top:663px;width:726px;height:148px;background:#fff;border:1px solid #b8b8b8"></div><div class="ab" style="left:704px;top:815px;width:64px;height:26px;background:#dcdcdc;border:1px solid #c4c4c4;border-top:none"></div><div class="ab" style="left:768px;top:815px;width:53px;height:27px;background:#f0f0f0;border:1px solid #c4c4c4;border-top:none"></div><div class="t" style="left:712px;top:821px;font-size:11px;color:#3a3a48;">Formulas</div><div class="t" style="left:780px;top:821px;font-size:11px;color:#3a3a48;">Errors</div><div class="ab" style="left:1287px;top:865px;width:83px;height:22px;background:#fff;border:1px solid #c4c4c4"></div><svg style="left:1291px;top:867px;" width="18" height="18" viewBox="0 0 18 18"><path d="M3 3l12 12M15 3L3 15" stroke="#a01818" stroke-width="4.6" stroke-linecap="round"/><path d="M3 3l12 12M15 3L3 15" stroke="#e04040" stroke-width="3" stroke-linecap="round"/></svg><div class="t" style="left:1321px;top:870px;font-size:11.4px;color:#3a3a48;">Cancel</div><div class="ab" style="left:1374px;top:865px;width:83px;height:22px;background:#fff;border:1px solid #c4c4c4"></div><svg style="left:1377px;top:866px;" width="18" height="19" viewBox="0 0 18 19"><path d="M1.5 10.5L4.5 8.5L7 12.5C9.5 7.5 12.5 3.5 17 0.8C13 5 10 10.5 7.8 18L6.5 18z" fill="#7ac848" stroke="#3a8a20" stroke-width="0.9" stroke-linejoin="round"/></svg><div class="t" style="left:1417px;top:870px;font-size:11.4px;color:#3a3a48;">OK</div></body></html>
